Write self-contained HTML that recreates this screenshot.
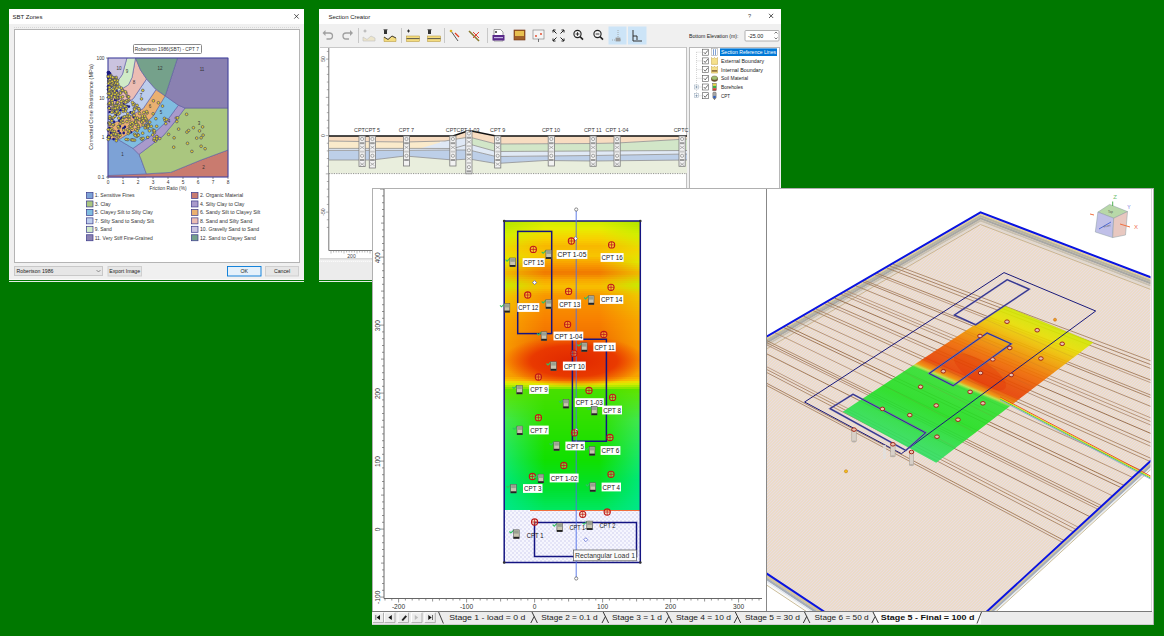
<!DOCTYPE html>
<html><head><meta charset="utf-8"><style>
html,body{margin:0;padding:0;}
body{width:1164px;height:636px;overflow:hidden;background:#007800;font-family:"Liberation Sans",sans-serif;}
svg{position:absolute;left:0;top:0;display:block}
</style></head><body>
<svg width="1164" height="636" viewBox="0 0 1164 636" font-family="Liberation Sans, sans-serif">
<rect x="9" y="9" width="295" height="271" fill="#f0f0f0" stroke="none" stroke-width="1" />
<rect x="9" y="9" width="295" height="15" fill="#ffffff" stroke="none" stroke-width="1" />
<text x="12.5" y="19.3" font-size="6" fill="#222" text-anchor="start" >SBT Zones</text>
<line x1="294.3" y1="14.2" x2="298.7" y2="18.6" stroke="#222" stroke-width="0.75" />
<line x1="298.7" y1="14.2" x2="294.3" y2="18.6" stroke="#222" stroke-width="0.75" />
<rect x="14.5" y="29.5" width="285" height="233" fill="#fff" stroke="#b4b4b4" stroke-width="1" />
<line x1="14" y1="27.5" x2="300" y2="27.5" stroke="#d8d8d8" stroke-width="1" stroke-dasharray="1,1"/>
<rect x="133.5" y="44.5" width="68" height="9" fill="#fff" stroke="#8a8a8a" stroke-width="1" rx="1"/>
<text x="134.8" y="51.3" font-size="5.2" fill="#333" text-anchor="start"  textLength="64" lengthAdjust="spacingAndGlyphs">Robertson 1986(SBT) - CPT 7</text>
<polygon points="108.0,139.0 118.4,139.7 133.0,148.4 139.0,154.4 141.0,159.0 146.4,173.8 146.0,177.0 108.0,177.0" fill="#7da2d6" stroke="#5a5aa0" stroke-width="0.6" />
<polygon points="108.0,177.0 108.0,175.5 146.0,174.0 170.7,172.4 201.0,160.0 228.0,150.0 228.0,177.0" fill="#c97b6f" stroke="#5a5aa0" stroke-width="0.6" />
<polygon points="185.0,108.0 228.0,108.0 228.0,150.0 201.0,160.0 170.7,172.4 146.4,173.8 141.0,159.0 139.0,154.4 163.0,136.0 174.0,122.8" fill="#aac67f" stroke="#5a5aa0" stroke-width="0.6" />
<polygon points="178.4,105.2 185.0,108.0 174.0,122.8 163.0,136.0 139.0,154.4 133.0,148.4 152.0,135.0 166.3,121.7" fill="#a99acb" stroke="#5a5aa0" stroke-width="0.6" />
<polygon points="165.2,95.9 178.4,105.2 166.3,121.7 152.0,135.0 133.0,148.4 118.4,139.7 120.0,139.0 128.0,134.0 141.0,127.2 153.1,116.2 164.1,95.9" fill="#80bde0" stroke="#5a5aa0" stroke-width="0.6" />
<polygon points="155.9,89.8 165.2,95.9 153.1,116.2 141.0,127.2 128.0,134.0 120.0,139.0 108.0,139.0 108.0,125.0 130.0,116.0 143.2,108.5" fill="#eab070" stroke="#5a5aa0" stroke-width="0.6" />
<polygon points="146.5,79.0 155.9,89.8 143.2,108.5 130.0,116.0 108.0,125.0 108.0,113.0 120.0,108.0 133.3,98.6" fill="#bdcdec" stroke="#5a5aa0" stroke-width="0.6" />
<polygon points="135.5,58.0 140.5,70.0 146.5,79.0 133.3,98.6 120.0,108.0 108.0,113.0 108.0,100.0 112.0,95.0 122.4,88.6 128.4,84.9 132.1,77.4" fill="#ecbdb3" stroke="#5a5aa0" stroke-width="0.6" />
<polygon points="126.9,58.0 135.5,58.0 132.1,77.4 128.4,84.9 122.4,88.6 112.0,95.0 108.0,100.0 108.0,89.3 114.9,84.9 122.4,74.4" fill="#d0ebc7" stroke="#5a5aa0" stroke-width="0.6" />
<polygon points="108.0,58.0 126.9,58.0 122.4,74.4 114.9,84.9 108.0,89.3" fill="#cac3df" stroke="#5a5aa0" stroke-width="0.6" />
<polygon points="177.5,58.0 228.0,58.0 228.0,108.0 185.0,108.0 178.4,105.2 165.2,95.9" fill="#8a81b1" stroke="#5a5aa0" stroke-width="0.6" />
<polygon points="135.5,58.0 177.5,58.0 165.2,95.9 155.3,88.7 146.5,78.8 140.5,70.0" fill="#75a18b" stroke="#5a5aa0" stroke-width="0.6" />
<text x="119" y="70" font-size="4.5" fill="#333" text-anchor="middle" >10</text>
<text x="127" y="73" font-size="4.5" fill="#333" text-anchor="middle" >9</text>
<text x="160" y="70" font-size="4.5" fill="#333" text-anchor="middle" >12</text>
<text x="202" y="71" font-size="4.5" fill="#333" text-anchor="middle" >11</text>
<text x="134" y="84" font-size="4.5" fill="#333" text-anchor="middle" >8</text>
<text x="141" y="97" font-size="4.5" fill="#333" text-anchor="middle" >7</text>
<text x="150" y="108" font-size="4.5" fill="#333" text-anchor="middle" >6</text>
<text x="161" y="114" font-size="4.5" fill="#333" text-anchor="middle" >5</text>
<text x="169" y="123" font-size="4.5" fill="#333" text-anchor="middle" >4</text>
<text x="199" y="125" font-size="4.5" fill="#333" text-anchor="middle" >3</text>
<text x="122.5" y="156" font-size="4.5" fill="#333" text-anchor="middle" >1</text>
<text x="203.5" y="168.5" font-size="4.5" fill="#333" text-anchor="middle" >2</text>
<rect x="108" y="58" width="120" height="119" fill="none" stroke="#4040a0" stroke-width="0.8" />
<circle cx="109.1" cy="107.9" r="1.3" fill="#1a1a80"/>
<circle cx="114.8" cy="82.7" r="1.3" fill="#1a1a80"/>
<circle cx="108.2" cy="136.4" r="1.3" fill="#1a1a80"/>
<circle cx="109.7" cy="79.8" r="1.3" fill="#1a1a80"/>
<circle cx="113.7" cy="84.6" r="1.3" fill="#1a1a80"/>
<circle cx="116.8" cy="91.4" r="1.3" fill="#1a1a80"/>
<circle cx="109.8" cy="78.0" r="1.3" fill="#1a1a80"/>
<circle cx="132.6" cy="139.7" r="1.3" fill="#1a1a80"/>
<circle cx="108.1" cy="75.1" r="1.3" fill="#1a1a80"/>
<circle cx="113.7" cy="111.5" r="1.3" fill="#1a1a80"/>
<circle cx="112.2" cy="91.1" r="1.3" fill="#1a1a80"/>
<circle cx="128.9" cy="106.6" r="1.3" fill="#1a1a80"/>
<circle cx="111.3" cy="83.0" r="1.3" fill="#1a1a80"/>
<circle cx="111.5" cy="84.3" r="1.3" fill="#1a1a80"/>
<circle cx="109.4" cy="118.6" r="1.3" fill="#1a1a80"/>
<circle cx="118.3" cy="99.0" r="1.3" fill="#1a1a80"/>
<circle cx="108.9" cy="72.1" r="1.3" fill="#1a1a80"/>
<circle cx="113.3" cy="94.6" r="1.3" fill="#1a1a80"/>
<circle cx="124.5" cy="108.9" r="1.3" fill="#1a1a80"/>
<circle cx="108.8" cy="73.7" r="1.3" fill="#1a1a80"/>
<circle cx="108.4" cy="73.0" r="1.3" fill="#1a1a80"/>
<circle cx="108.0" cy="89.6" r="1.3" fill="#1a1a80"/>
<circle cx="111.0" cy="86.5" r="1.3" fill="#1a1a80"/>
<circle cx="130.6" cy="112.4" r="1.3" fill="#1a1a80"/>
<circle cx="112.9" cy="91.3" r="1.3" fill="#1a1a80"/>
<circle cx="133.6" cy="117.1" r="1.3" fill="#1a1a80"/>
<circle cx="147.7" cy="137.5" r="1.3" fill="#1a1a80"/>
<circle cx="108.7" cy="86.7" r="1.3" fill="#1a1a80"/>
<circle cx="108.9" cy="135.9" r="1.3" fill="#1a1a80"/>
<circle cx="118.1" cy="96.7" r="1.3" fill="#1a1a80"/>
<circle cx="112.7" cy="102.6" r="1.3" fill="#1a1a80"/>
<circle cx="114.4" cy="135.2" r="1.3" fill="#1a1a80"/>
<circle cx="123.6" cy="104.3" r="1.3" fill="#1a1a80"/>
<circle cx="108.9" cy="77.3" r="1.3" fill="#1a1a80"/>
<circle cx="115.7" cy="100.0" r="1.3" fill="#1a1a80"/>
<circle cx="110.0" cy="81.1" r="1.3" fill="#1a1a80"/>
<circle cx="108.1" cy="73.8" r="1.3" fill="#1a1a80"/>
<circle cx="108.6" cy="89.4" r="1.3" fill="#1a1a80"/>
<circle cx="113.6" cy="139.1" r="1.3" fill="#1a1a80"/>
<circle cx="114.3" cy="85.1" r="1.3" fill="#1a1a80"/>
<circle cx="112.0" cy="119.4" r="1.3" fill="#1a1a80"/>
<circle cx="124.9" cy="126.9" r="1.3" fill="#1a1a80"/>
<circle cx="114.7" cy="92.5" r="1.3" fill="#1a1a80"/>
<circle cx="109.1" cy="83.3" r="1.3" fill="#1a1a80"/>
<circle cx="118.6" cy="131.0" r="1.3" fill="#1a1a80"/>
<circle cx="110.8" cy="132.8" r="1.3" fill="#1a1a80"/>
<circle cx="108.1" cy="77.3" r="1.3" fill="#1a1a80"/>
<circle cx="120.4" cy="119.3" r="1.3" fill="#1a1a80"/>
<circle cx="108.0" cy="72.2" r="1.3" fill="#1a1a80"/>
<circle cx="119.8" cy="126.4" r="1.3" fill="#1a1a80"/>
<circle cx="108.3" cy="130.5" r="1.3" fill="#1a1a80"/>
<circle cx="108.9" cy="107.2" r="1.3" fill="#1a1a80"/>
<circle cx="121.7" cy="117.8" r="1.3" fill="#1a1a80"/>
<circle cx="110.4" cy="109.0" r="1.3" fill="#1a1a80"/>
<circle cx="109.5" cy="137.4" r="1.3" fill="#1a1a80"/>
<circle cx="109.3" cy="74.0" r="1.3" fill="#1a1a80"/>
<circle cx="108.1" cy="75.2" r="1.3" fill="#1a1a80"/>
<circle cx="116.6" cy="97.5" r="1.3" fill="#1a1a80"/>
<circle cx="130.9" cy="132.3" r="1.3" fill="#1a1a80"/>
<circle cx="109.3" cy="74.2" r="1.3" fill="#1a1a80"/>
<circle cx="109.5" cy="128.1" r="1.3" fill="#1a1a80"/>
<circle cx="112.0" cy="120.5" r="1.3" fill="#1a1a80"/>
<circle cx="108.0" cy="86.5" r="1.3" fill="#1a1a80"/>
<circle cx="119.3" cy="120.8" r="1.3" fill="#1a1a80"/>
<circle cx="120.0" cy="133.2" r="1.3" fill="#1a1a80"/>
<circle cx="108.5" cy="78.2" r="1.3" fill="#1a1a80"/>
<circle cx="115.9" cy="84.4" r="1.3" fill="#1a1a80"/>
<circle cx="108.2" cy="80.9" r="1.3" fill="#1a1a80"/>
<circle cx="108.3" cy="90.1" r="1.3" fill="#1a1a80"/>
<circle cx="115.4" cy="95.0" r="1.3" fill="#1a1a80"/>
<circle cx="109.8" cy="112.0" r="1.3" fill="#1a1a80"/>
<circle cx="109.5" cy="77.4" r="1.3" fill="#1a1a80"/>
<circle cx="116.1" cy="115.0" r="1.3" fill="#1a1a80"/>
<circle cx="126.8" cy="106.0" r="1.3" fill="#1a1a80"/>
<circle cx="108.6" cy="77.7" r="1.3" fill="#1a1a80"/>
<circle cx="115.1" cy="100.0" r="1.3" fill="#1a1a80"/>
<circle cx="123.7" cy="133.1" r="1.3" fill="#1a1a80"/>
<circle cx="115.0" cy="113.0" r="1.3" fill="#1a1a80"/>
<circle cx="132.3" cy="123.0" r="1.3" fill="#1a1a80"/>
<circle cx="108.3" cy="86.2" r="1.3" fill="#1a1a80"/>
<circle cx="109.8" cy="84.1" r="1.3" fill="#1a1a80"/>
<circle cx="113.1" cy="132.1" r="1.3" fill="#1a1a80"/>
<circle cx="120.4" cy="110.3" r="1.3" fill="#1a1a80"/>
<circle cx="109.6" cy="138.0" r="1.3" fill="#1a1a80"/>
<circle cx="114.1" cy="121.8" r="1.3" fill="#1a1a80"/>
<circle cx="109.7" cy="75.6" r="1.3" fill="#1a1a80"/>
<circle cx="123.5" cy="128.2" r="1.3" fill="#1a1a80"/>
<circle cx="110.0" cy="73.4" r="1.3" fill="#1a1a80"/>
<circle cx="114.8" cy="92.2" r="1.3" fill="#1a1a80"/>
<circle cx="111.8" cy="118.0" r="1.3" fill="#1a1a80"/>
<circle cx="135.7" cy="118.1" r="1.35" fill="#e0d030" stroke="#303070" stroke-width="0.55"/>
<circle cx="145.9" cy="125.3" r="1.35" fill="#e0d030" stroke="#303070" stroke-width="0.55"/>
<circle cx="112.2" cy="77.7" r="1.35" fill="#e0d030" stroke="#303070" stroke-width="0.55"/>
<circle cx="111.3" cy="135.1" r="1.35" fill="#e0d030" stroke="#303070" stroke-width="0.55"/>
<circle cx="112.5" cy="108.4" r="1.35" fill="#e0d030" stroke="#303070" stroke-width="0.55"/>
<circle cx="108.6" cy="76.3" r="1.35" fill="#e0d030" stroke="#303070" stroke-width="0.55"/>
<circle cx="127.3" cy="96.0" r="1.35" fill="#e0d030" stroke="#303070" stroke-width="0.55"/>
<circle cx="111.8" cy="128.8" r="1.35" fill="#e0d030" stroke="#303070" stroke-width="0.55"/>
<circle cx="113.2" cy="117.8" r="1.35" fill="#e0d030" stroke="#303070" stroke-width="0.55"/>
<circle cx="110.8" cy="91.2" r="1.35" fill="#e0d030" stroke="#303070" stroke-width="0.55"/>
<circle cx="154.6" cy="140.0" r="1.35" fill="#e0d030" stroke="#303070" stroke-width="0.55"/>
<circle cx="132.1" cy="112.9" r="1.35" fill="#e0d030" stroke="#303070" stroke-width="0.55"/>
<circle cx="123.2" cy="90.8" r="1.35" fill="#e0d030" stroke="#303070" stroke-width="0.55"/>
<circle cx="117.7" cy="134.7" r="1.35" fill="#e0d030" stroke="#303070" stroke-width="0.55"/>
<circle cx="111.2" cy="101.4" r="1.35" fill="#e0d030" stroke="#303070" stroke-width="0.55"/>
<circle cx="120.6" cy="97.4" r="1.35" fill="#e0d030" stroke="#303070" stroke-width="0.55"/>
<circle cx="110.9" cy="75.4" r="1.35" fill="#e0d030" stroke="#303070" stroke-width="0.55"/>
<circle cx="128.7" cy="130.1" r="1.35" fill="#e0d030" stroke="#303070" stroke-width="0.55"/>
<circle cx="117.6" cy="98.4" r="1.35" fill="#e0d030" stroke="#303070" stroke-width="0.55"/>
<circle cx="108.3" cy="139.5" r="1.35" fill="#e0d030" stroke="#303070" stroke-width="0.55"/>
<circle cx="146.3" cy="125.9" r="1.35" fill="#e0d030" stroke="#303070" stroke-width="0.55"/>
<circle cx="121.6" cy="101.7" r="1.35" fill="#e0d030" stroke="#303070" stroke-width="0.55"/>
<circle cx="109.2" cy="76.0" r="1.35" fill="#e0d030" stroke="#303070" stroke-width="0.55"/>
<circle cx="122.3" cy="90.3" r="1.35" fill="#e0d030" stroke="#303070" stroke-width="0.55"/>
<circle cx="157.0" cy="136.8" r="1.35" fill="#e0d030" stroke="#303070" stroke-width="0.55"/>
<circle cx="133.7" cy="111.9" r="1.35" fill="#e0d030" stroke="#303070" stroke-width="0.55"/>
<circle cx="117.0" cy="83.9" r="1.35" fill="#e0d030" stroke="#303070" stroke-width="0.55"/>
<circle cx="113.2" cy="78.4" r="1.35" fill="#e0d030" stroke="#303070" stroke-width="0.55"/>
<circle cx="109.3" cy="82.6" r="1.35" fill="#e0d030" stroke="#303070" stroke-width="0.55"/>
<circle cx="128.8" cy="100.0" r="1.35" fill="#e0d030" stroke="#303070" stroke-width="0.55"/>
<circle cx="116.4" cy="113.2" r="1.35" fill="#e0d030" stroke="#303070" stroke-width="0.55"/>
<circle cx="109.6" cy="81.7" r="1.35" fill="#e0d030" stroke="#303070" stroke-width="0.55"/>
<circle cx="149.8" cy="122.2" r="1.35" fill="#e0d030" stroke="#303070" stroke-width="0.55"/>
<circle cx="134.6" cy="140.2" r="1.35" fill="#e0d030" stroke="#303070" stroke-width="0.55"/>
<circle cx="111.4" cy="104.3" r="1.35" fill="#e0d030" stroke="#303070" stroke-width="0.55"/>
<circle cx="117.7" cy="107.5" r="1.35" fill="#e0d030" stroke="#303070" stroke-width="0.55"/>
<circle cx="117.1" cy="79.9" r="1.35" fill="#e0d030" stroke="#303070" stroke-width="0.55"/>
<circle cx="112.5" cy="131.3" r="1.35" fill="#e0d030" stroke="#303070" stroke-width="0.55"/>
<circle cx="148.0" cy="124.8" r="1.35" fill="#e0d030" stroke="#303070" stroke-width="0.55"/>
<circle cx="111.1" cy="83.8" r="1.35" fill="#e0d030" stroke="#303070" stroke-width="0.55"/>
<circle cx="119.4" cy="86.9" r="1.35" fill="#e0d030" stroke="#303070" stroke-width="0.55"/>
<circle cx="155.6" cy="141.0" r="1.35" fill="#e0d030" stroke="#303070" stroke-width="0.55"/>
<circle cx="127.8" cy="139.6" r="1.35" fill="#e0d030" stroke="#303070" stroke-width="0.55"/>
<circle cx="115.3" cy="109.0" r="1.35" fill="#e0d030" stroke="#303070" stroke-width="0.55"/>
<circle cx="108.6" cy="104.2" r="1.35" fill="#e0d030" stroke="#303070" stroke-width="0.55"/>
<circle cx="141.3" cy="138.6" r="1.35" fill="#e0d030" stroke="#303070" stroke-width="0.55"/>
<circle cx="117.5" cy="110.3" r="1.35" fill="#e0d030" stroke="#303070" stroke-width="0.55"/>
<circle cx="147.4" cy="127.9" r="1.35" fill="#e0d030" stroke="#303070" stroke-width="0.55"/>
<circle cx="127.4" cy="101.4" r="1.35" fill="#e0d030" stroke="#303070" stroke-width="0.55"/>
<circle cx="135.7" cy="120.7" r="1.35" fill="#e0d030" stroke="#303070" stroke-width="0.55"/>
<circle cx="124.7" cy="101.5" r="1.35" fill="#e0d030" stroke="#303070" stroke-width="0.55"/>
<circle cx="138.4" cy="127.2" r="1.35" fill="#e0d030" stroke="#303070" stroke-width="0.55"/>
<circle cx="127.9" cy="96.9" r="1.35" fill="#e0d030" stroke="#303070" stroke-width="0.55"/>
<circle cx="109.8" cy="76.2" r="1.35" fill="#e0d030" stroke="#303070" stroke-width="0.55"/>
<circle cx="118.5" cy="94.0" r="1.35" fill="#e0d030" stroke="#303070" stroke-width="0.55"/>
<circle cx="138.8" cy="119.6" r="1.35" fill="#e0d030" stroke="#303070" stroke-width="0.55"/>
<circle cx="122.5" cy="100.5" r="1.35" fill="#e0d030" stroke="#303070" stroke-width="0.55"/>
<circle cx="126.5" cy="100.7" r="1.35" fill="#e0d030" stroke="#303070" stroke-width="0.55"/>
<circle cx="142.7" cy="133.2" r="1.35" fill="#e0d030" stroke="#303070" stroke-width="0.55"/>
<circle cx="123.2" cy="111.5" r="1.35" fill="#e0d030" stroke="#303070" stroke-width="0.55"/>
<circle cx="121.4" cy="88.1" r="1.35" fill="#e0d030" stroke="#303070" stroke-width="0.55"/>
<circle cx="135.8" cy="122.3" r="1.35" fill="#e0d030" stroke="#303070" stroke-width="0.55"/>
<circle cx="113.5" cy="124.7" r="1.35" fill="#e0d030" stroke="#303070" stroke-width="0.55"/>
<circle cx="121.1" cy="120.8" r="1.35" fill="#e0d030" stroke="#303070" stroke-width="0.55"/>
<circle cx="135.4" cy="118.2" r="1.35" fill="#e0d030" stroke="#303070" stroke-width="0.55"/>
<circle cx="126.0" cy="106.6" r="1.35" fill="#e0d030" stroke="#303070" stroke-width="0.55"/>
<circle cx="110.4" cy="118.6" r="1.35" fill="#e0d030" stroke="#303070" stroke-width="0.55"/>
<circle cx="113.7" cy="108.6" r="1.35" fill="#e0d030" stroke="#303070" stroke-width="0.55"/>
<circle cx="111.2" cy="98.5" r="1.35" fill="#e0d030" stroke="#303070" stroke-width="0.55"/>
<circle cx="128.4" cy="117.4" r="1.35" fill="#e0d030" stroke="#303070" stroke-width="0.55"/>
<circle cx="126.0" cy="93.1" r="1.35" fill="#e0d030" stroke="#303070" stroke-width="0.55"/>
<circle cx="115.3" cy="95.9" r="1.35" fill="#e0d030" stroke="#303070" stroke-width="0.55"/>
<circle cx="117.7" cy="84.4" r="1.35" fill="#e0d030" stroke="#303070" stroke-width="0.55"/>
<circle cx="110.5" cy="117.5" r="1.35" fill="#e0d030" stroke="#303070" stroke-width="0.55"/>
<circle cx="115.3" cy="113.2" r="1.35" fill="#e0d030" stroke="#303070" stroke-width="0.55"/>
<circle cx="123.7" cy="130.1" r="1.35" fill="#e0d030" stroke="#303070" stroke-width="0.55"/>
<circle cx="135.7" cy="129.8" r="1.35" fill="#e0d030" stroke="#303070" stroke-width="0.55"/>
<circle cx="127.2" cy="116.4" r="1.35" fill="#e0d030" stroke="#303070" stroke-width="0.55"/>
<circle cx="159.7" cy="138.5" r="1.35" fill="#e0d030" stroke="#303070" stroke-width="0.55"/>
<circle cx="113.6" cy="83.9" r="1.35" fill="#e0d030" stroke="#303070" stroke-width="0.55"/>
<circle cx="141.6" cy="118.5" r="1.35" fill="#e0d030" stroke="#303070" stroke-width="0.55"/>
<circle cx="117.7" cy="102.4" r="1.35" fill="#e0d030" stroke="#303070" stroke-width="0.55"/>
<circle cx="126.1" cy="139.4" r="1.35" fill="#e0d030" stroke="#303070" stroke-width="0.55"/>
<circle cx="156.4" cy="138.7" r="1.35" fill="#e0d030" stroke="#303070" stroke-width="0.55"/>
<circle cx="131.5" cy="139.9" r="1.35" fill="#e0d030" stroke="#303070" stroke-width="0.55"/>
<circle cx="116.4" cy="104.9" r="1.35" fill="#e0d030" stroke="#303070" stroke-width="0.55"/>
<circle cx="116.8" cy="96.4" r="1.35" fill="#e0d030" stroke="#303070" stroke-width="0.55"/>
<circle cx="114.4" cy="84.9" r="1.35" fill="#e0d030" stroke="#303070" stroke-width="0.55"/>
<circle cx="145.1" cy="127.9" r="1.35" fill="#e0d030" stroke="#303070" stroke-width="0.55"/>
<circle cx="110.5" cy="76.3" r="1.35" fill="#e0d030" stroke="#303070" stroke-width="0.55"/>
<circle cx="118.9" cy="127.9" r="1.35" fill="#e0d030" stroke="#303070" stroke-width="0.55"/>
<circle cx="111.0" cy="95.2" r="1.35" fill="#e0d030" stroke="#303070" stroke-width="0.55"/>
<circle cx="123.4" cy="117.2" r="1.35" fill="#e0d030" stroke="#303070" stroke-width="0.55"/>
<circle cx="129.6" cy="119.5" r="1.35" fill="#e0d030" stroke="#303070" stroke-width="0.55"/>
<circle cx="118.2" cy="126.6" r="1.35" fill="#e0d030" stroke="#303070" stroke-width="0.55"/>
<circle cx="116.9" cy="112.5" r="1.35" fill="#e0d030" stroke="#303070" stroke-width="0.55"/>
<circle cx="118.2" cy="108.1" r="1.35" fill="#e0d030" stroke="#303070" stroke-width="0.55"/>
<circle cx="132.4" cy="125.6" r="1.35" fill="#e0d030" stroke="#303070" stroke-width="0.55"/>
<circle cx="135.5" cy="107.5" r="1.35" fill="#e0d030" stroke="#303070" stroke-width="0.55"/>
<circle cx="134.5" cy="134.3" r="1.35" fill="#e0d030" stroke="#303070" stroke-width="0.55"/>
<circle cx="123.1" cy="105.7" r="1.35" fill="#e0d030" stroke="#303070" stroke-width="0.55"/>
<circle cx="130.5" cy="123.4" r="1.35" fill="#e0d030" stroke="#303070" stroke-width="0.55"/>
<circle cx="117.0" cy="103.0" r="1.35" fill="#e0d030" stroke="#303070" stroke-width="0.55"/>
<circle cx="114.5" cy="132.1" r="1.35" fill="#e0d030" stroke="#303070" stroke-width="0.55"/>
<circle cx="117.4" cy="80.7" r="1.35" fill="#e0d030" stroke="#303070" stroke-width="0.55"/>
<circle cx="123.0" cy="122.5" r="1.35" fill="#e0d030" stroke="#303070" stroke-width="0.55"/>
<circle cx="114.8" cy="135.7" r="1.35" fill="#e0d030" stroke="#303070" stroke-width="0.55"/>
<circle cx="122.5" cy="109.0" r="1.35" fill="#e0d030" stroke="#303070" stroke-width="0.55"/>
<circle cx="115.7" cy="87.2" r="1.35" fill="#e0d030" stroke="#303070" stroke-width="0.55"/>
<circle cx="110.1" cy="129.7" r="1.35" fill="#e0d030" stroke="#303070" stroke-width="0.55"/>
<circle cx="138.4" cy="128.5" r="1.35" fill="#e0d030" stroke="#303070" stroke-width="0.55"/>
<circle cx="116.2" cy="77.4" r="1.35" fill="#e0d030" stroke="#303070" stroke-width="0.55"/>
<circle cx="108.7" cy="123.0" r="1.35" fill="#e0d030" stroke="#303070" stroke-width="0.55"/>
<circle cx="114.4" cy="131.5" r="1.35" fill="#e0d030" stroke="#303070" stroke-width="0.55"/>
<circle cx="109.9" cy="123.6" r="1.35" fill="#e0d030" stroke="#303070" stroke-width="0.55"/>
<circle cx="128.7" cy="96.8" r="1.35" fill="#e0d030" stroke="#303070" stroke-width="0.55"/>
<circle cx="112.3" cy="104.8" r="1.35" fill="#e0d030" stroke="#303070" stroke-width="0.55"/>
<circle cx="109.7" cy="118.1" r="1.35" fill="#e0d030" stroke="#303070" stroke-width="0.55"/>
<circle cx="108.9" cy="81.2" r="1.35" fill="#e0d030" stroke="#303070" stroke-width="0.55"/>
<circle cx="133.8" cy="115.1" r="1.35" fill="#e0d030" stroke="#303070" stroke-width="0.55"/>
<circle cx="114.9" cy="106.0" r="1.35" fill="#e0d030" stroke="#303070" stroke-width="0.55"/>
<circle cx="124.8" cy="116.7" r="1.35" fill="#e0d030" stroke="#303070" stroke-width="0.55"/>
<circle cx="113.4" cy="79.9" r="1.35" fill="#e0d030" stroke="#303070" stroke-width="0.55"/>
<circle cx="114.1" cy="87.0" r="1.35" fill="#e0d030" stroke="#303070" stroke-width="0.55"/>
<circle cx="127.8" cy="113.8" r="1.35" fill="#e0d030" stroke="#303070" stroke-width="0.55"/>
<circle cx="118.0" cy="94.9" r="1.35" fill="#e0d030" stroke="#303070" stroke-width="0.55"/>
<circle cx="112.7" cy="111.4" r="1.35" fill="#e0d030" stroke="#303070" stroke-width="0.55"/>
<circle cx="113.7" cy="92.9" r="1.35" fill="#e0d030" stroke="#303070" stroke-width="0.55"/>
<circle cx="133.2" cy="123.7" r="1.35" fill="#e0d030" stroke="#303070" stroke-width="0.55"/>
<circle cx="115.0" cy="82.2" r="1.35" fill="#e0d030" stroke="#303070" stroke-width="0.55"/>
<circle cx="114.9" cy="116.3" r="1.35" fill="#e0d030" stroke="#303070" stroke-width="0.55"/>
<circle cx="128.3" cy="133.6" r="1.35" fill="#e0d030" stroke="#303070" stroke-width="0.55"/>
<circle cx="114.5" cy="77.8" r="1.35" fill="#e0d030" stroke="#303070" stroke-width="0.55"/>
<circle cx="110.3" cy="79.7" r="1.35" fill="#e0d030" stroke="#303070" stroke-width="0.55"/>
<circle cx="108.9" cy="92.1" r="1.35" fill="#e0d030" stroke="#303070" stroke-width="0.55"/>
<circle cx="142.1" cy="139.4" r="1.35" fill="#e0d030" stroke="#303070" stroke-width="0.55"/>
<circle cx="118.7" cy="118.2" r="1.35" fill="#e0d030" stroke="#303070" stroke-width="0.55"/>
<circle cx="112.4" cy="92.9" r="1.35" fill="#e0d030" stroke="#303070" stroke-width="0.55"/>
<circle cx="109.9" cy="103.0" r="1.35" fill="#e0d030" stroke="#303070" stroke-width="0.55"/>
<circle cx="137.2" cy="130.9" r="1.35" fill="#e0d030" stroke="#303070" stroke-width="0.55"/>
<circle cx="129.5" cy="132.1" r="1.35" fill="#e0d030" stroke="#303070" stroke-width="0.55"/>
<circle cx="127.0" cy="116.2" r="1.35" fill="#e0d030" stroke="#303070" stroke-width="0.55"/>
<circle cx="109.2" cy="90.7" r="1.35" fill="#e0d030" stroke="#303070" stroke-width="0.55"/>
<circle cx="134.3" cy="108.5" r="1.35" fill="#e0d030" stroke="#303070" stroke-width="0.55"/>
<circle cx="109.2" cy="108.2" r="1.35" fill="#e0d030" stroke="#303070" stroke-width="0.55"/>
<circle cx="108.9" cy="87.3" r="1.35" fill="#e0d030" stroke="#303070" stroke-width="0.55"/>
<circle cx="114.0" cy="133.8" r="1.35" fill="#e0d030" stroke="#303070" stroke-width="0.55"/>
<circle cx="112.7" cy="94.2" r="1.35" fill="#e0d030" stroke="#303070" stroke-width="0.55"/>
<circle cx="116.6" cy="92.9" r="1.35" fill="#e0d030" stroke="#303070" stroke-width="0.55"/>
<circle cx="113.1" cy="78.0" r="1.35" fill="#e0d030" stroke="#303070" stroke-width="0.55"/>
<circle cx="135.7" cy="122.1" r="1.35" fill="#e0d030" stroke="#303070" stroke-width="0.55"/>
<circle cx="138.2" cy="108.6" r="1.35" fill="#e0d030" stroke="#303070" stroke-width="0.55"/>
<circle cx="122.7" cy="96.7" r="1.35" fill="#e0d030" stroke="#303070" stroke-width="0.55"/>
<circle cx="113.0" cy="124.7" r="1.35" fill="#e0d030" stroke="#303070" stroke-width="0.55"/>
<circle cx="109.1" cy="92.6" r="1.35" fill="#e0d030" stroke="#303070" stroke-width="0.55"/>
<circle cx="134.2" cy="104.0" r="1.35" fill="#e0d030" stroke="#303070" stroke-width="0.55"/>
<circle cx="115.5" cy="108.3" r="1.35" fill="#e0d030" stroke="#303070" stroke-width="0.55"/>
<circle cx="137.9" cy="124.9" r="1.35" fill="#e0d030" stroke="#303070" stroke-width="0.55"/>
<circle cx="146.7" cy="121.2" r="1.35" fill="#e0d030" stroke="#303070" stroke-width="0.55"/>
<circle cx="122.6" cy="119.5" r="1.35" fill="#e0d030" stroke="#303070" stroke-width="0.55"/>
<circle cx="114.8" cy="80.3" r="1.35" fill="#e0d030" stroke="#303070" stroke-width="0.55"/>
<circle cx="116.6" cy="111.6" r="1.35" fill="#e0d030" stroke="#303070" stroke-width="0.55"/>
<circle cx="109.4" cy="82.8" r="1.35" fill="#e0d030" stroke="#303070" stroke-width="0.55"/>
<circle cx="108.9" cy="137.2" r="1.35" fill="#e0d030" stroke="#303070" stroke-width="0.55"/>
<circle cx="108.3" cy="93.5" r="1.35" fill="#e0d030" stroke="#303070" stroke-width="0.55"/>
<circle cx="115.0" cy="94.3" r="1.35" fill="#e0d030" stroke="#303070" stroke-width="0.55"/>
<circle cx="111.2" cy="97.7" r="1.35" fill="#e0d030" stroke="#303070" stroke-width="0.55"/>
<circle cx="115.7" cy="89.1" r="1.35" fill="#e0d030" stroke="#303070" stroke-width="0.55"/>
<circle cx="121.7" cy="104.1" r="1.35" fill="#e0d030" stroke="#303070" stroke-width="0.55"/>
<circle cx="114.2" cy="83.9" r="1.35" fill="#e0d030" stroke="#303070" stroke-width="0.55"/>
<circle cx="136.9" cy="136.3" r="1.35" fill="#e0d030" stroke="#303070" stroke-width="0.55"/>
<circle cx="110.5" cy="76.7" r="1.35" fill="#e0d030" stroke="#303070" stroke-width="0.55"/>
<circle cx="123.3" cy="109.5" r="1.35" fill="#e0d030" stroke="#303070" stroke-width="0.55"/>
<circle cx="148.0" cy="124.5" r="1.35" fill="#e0d030" stroke="#303070" stroke-width="0.55"/>
<circle cx="117.1" cy="97.8" r="1.35" fill="#e0d030" stroke="#303070" stroke-width="0.55"/>
<circle cx="110.4" cy="84.5" r="1.35" fill="#e0d030" stroke="#303070" stroke-width="0.55"/>
<circle cx="116.3" cy="82.4" r="1.35" fill="#e0d030" stroke="#303070" stroke-width="0.55"/>
<circle cx="109.3" cy="93.6" r="1.35" fill="#e0d030" stroke="#303070" stroke-width="0.55"/>
<circle cx="109.4" cy="122.9" r="1.35" fill="#e0d030" stroke="#303070" stroke-width="0.55"/>
<circle cx="110.4" cy="102.2" r="1.35" fill="#e0d030" stroke="#303070" stroke-width="0.55"/>
<circle cx="115.1" cy="105.3" r="1.35" fill="#e0d030" stroke="#303070" stroke-width="0.55"/>
<circle cx="137.8" cy="134.8" r="1.35" fill="#e0d030" stroke="#303070" stroke-width="0.55"/>
<circle cx="129.5" cy="126.5" r="1.35" fill="#e0d030" stroke="#303070" stroke-width="0.55"/>
<circle cx="146.7" cy="120.1" r="1.35" fill="#e0d030" stroke="#303070" stroke-width="0.55"/>
<circle cx="136.3" cy="124.6" r="1.35" fill="#e0d030" stroke="#303070" stroke-width="0.55"/>
<circle cx="112.1" cy="102.8" r="1.35" fill="#e0d030" stroke="#303070" stroke-width="0.55"/>
<circle cx="109.0" cy="80.7" r="1.35" fill="#e0d030" stroke="#303070" stroke-width="0.55"/>
<circle cx="110.3" cy="96.4" r="1.35" fill="#e0d030" stroke="#303070" stroke-width="0.55"/>
<circle cx="130.8" cy="126.8" r="1.35" fill="#e0d030" stroke="#303070" stroke-width="0.55"/>
<circle cx="111.9" cy="85.5" r="1.35" fill="#e0d030" stroke="#303070" stroke-width="0.55"/>
<circle cx="154.4" cy="132.6" r="1.35" fill="#e0d030" stroke="#303070" stroke-width="0.55"/>
<circle cx="116.1" cy="105.8" r="1.35" fill="#e0d030" stroke="#303070" stroke-width="0.55"/>
<circle cx="109.7" cy="124.5" r="1.35" fill="#e0d030" stroke="#303070" stroke-width="0.55"/>
<circle cx="111.8" cy="112.3" r="1.35" fill="#e0d030" stroke="#303070" stroke-width="0.55"/>
<circle cx="147.7" cy="137.3" r="1.35" fill="#e0d030" stroke="#303070" stroke-width="0.55"/>
<circle cx="112.1" cy="84.7" r="1.35" fill="#e0d030" stroke="#303070" stroke-width="0.55"/>
<circle cx="118.4" cy="106.1" r="1.35" fill="#e0d030" stroke="#303070" stroke-width="0.55"/>
<circle cx="147.5" cy="127.0" r="1.35" fill="#e0d030" stroke="#303070" stroke-width="0.55"/>
<circle cx="109.9" cy="116.4" r="1.35" fill="#e0d030" stroke="#303070" stroke-width="0.55"/>
<circle cx="127.5" cy="129.9" r="1.35" fill="#e0d030" stroke="#303070" stroke-width="0.55"/>
<circle cx="112.7" cy="78.1" r="1.35" fill="#e0d030" stroke="#303070" stroke-width="0.55"/>
<circle cx="134.7" cy="109.2" r="1.35" fill="#e0d030" stroke="#303070" stroke-width="0.55"/>
<circle cx="111.5" cy="95.8" r="1.35" fill="#e0d030" stroke="#303070" stroke-width="0.55"/>
<circle cx="118.4" cy="114.3" r="1.35" fill="#e0d030" stroke="#303070" stroke-width="0.55"/>
<circle cx="112.0" cy="100.8" r="1.35" fill="#e0d030" stroke="#303070" stroke-width="0.55"/>
<circle cx="154.0" cy="140.0" r="1.35" fill="#e0d030" stroke="#303070" stroke-width="0.55"/>
<circle cx="109.6" cy="104.0" r="1.35" fill="#e0d030" stroke="#303070" stroke-width="0.55"/>
<circle cx="129.3" cy="130.9" r="1.35" fill="#e0d030" stroke="#303070" stroke-width="0.55"/>
<circle cx="115.8" cy="83.2" r="1.35" fill="#e0d030" stroke="#303070" stroke-width="0.55"/>
<circle cx="115.7" cy="135.0" r="1.35" fill="#e0d030" stroke="#303070" stroke-width="0.55"/>
<circle cx="142.0" cy="121.8" r="1.35" fill="#e0d030" stroke="#303070" stroke-width="0.55"/>
<circle cx="137.5" cy="118.1" r="1.35" fill="#e0d030" stroke="#303070" stroke-width="0.55"/>
<circle cx="125.6" cy="111.1" r="1.35" fill="#e0d030" stroke="#303070" stroke-width="0.55"/>
<circle cx="113.1" cy="89.4" r="1.35" fill="#e0d030" stroke="#303070" stroke-width="0.55"/>
<circle cx="115.5" cy="98.1" r="1.35" fill="#e0d030" stroke="#303070" stroke-width="0.55"/>
<circle cx="126.3" cy="108.8" r="1.35" fill="#e0d030" stroke="#303070" stroke-width="0.55"/>
<circle cx="153.2" cy="129.9" r="1.35" fill="#e0d030" stroke="#303070" stroke-width="0.55"/>
<circle cx="132.2" cy="122.4" r="1.35" fill="#e0d030" stroke="#303070" stroke-width="0.55"/>
<circle cx="121.3" cy="101.5" r="1.35" fill="#e0d030" stroke="#303070" stroke-width="0.55"/>
<circle cx="126.9" cy="121.6" r="1.35" fill="#e0d030" stroke="#303070" stroke-width="0.55"/>
<circle cx="111.5" cy="82.4" r="1.35" fill="#e0d030" stroke="#303070" stroke-width="0.55"/>
<circle cx="134.1" cy="115.4" r="1.35" fill="#e0d030" stroke="#303070" stroke-width="0.55"/>
<circle cx="118.4" cy="136.8" r="1.35" fill="#e0d030" stroke="#303070" stroke-width="0.55"/>
<circle cx="109.9" cy="123.9" r="1.35" fill="#e0d030" stroke="#303070" stroke-width="0.55"/>
<circle cx="154.3" cy="138.4" r="1.35" fill="#e0d030" stroke="#303070" stroke-width="0.55"/>
<circle cx="141.7" cy="122.1" r="1.35" fill="#e0d030" stroke="#303070" stroke-width="0.55"/>
<circle cx="114.6" cy="91.1" r="1.35" fill="#e0d030" stroke="#303070" stroke-width="0.55"/>
<circle cx="118.5" cy="134.8" r="1.35" fill="#e0d030" stroke="#303070" stroke-width="0.55"/>
<circle cx="110.2" cy="103.3" r="1.35" fill="#e0d030" stroke="#303070" stroke-width="0.55"/>
<circle cx="135.3" cy="135.6" r="1.35" fill="#e0d030" stroke="#303070" stroke-width="0.55"/>
<circle cx="109.4" cy="103.1" r="1.35" fill="#e0d030" stroke="#303070" stroke-width="0.55"/>
<circle cx="120.1" cy="123.8" r="1.35" fill="#e0d030" stroke="#303070" stroke-width="0.55"/>
<circle cx="115.7" cy="134.2" r="1.35" fill="#e0d030" stroke="#303070" stroke-width="0.55"/>
<circle cx="142.6" cy="118.1" r="1.35" fill="#e0d030" stroke="#303070" stroke-width="0.55"/>
<circle cx="116.9" cy="88.2" r="1.35" fill="#e0d030" stroke="#303070" stroke-width="0.55"/>
<circle cx="112.0" cy="80.5" r="1.35" fill="#e0d030" stroke="#303070" stroke-width="0.55"/>
<circle cx="149.4" cy="130.8" r="1.35" fill="#e0d030" stroke="#303070" stroke-width="0.55"/>
<circle cx="120.4" cy="105.6" r="1.35" fill="#e0d030" stroke="#303070" stroke-width="0.55"/>
<circle cx="120.1" cy="135.3" r="1.35" fill="#e0d030" stroke="#303070" stroke-width="0.55"/>
<circle cx="116.7" cy="139.0" r="1.35" fill="#e0d030" stroke="#303070" stroke-width="0.55"/>
<circle cx="109.7" cy="89.4" r="1.35" fill="#e0d030" stroke="#303070" stroke-width="0.55"/>
<circle cx="129.5" cy="116.3" r="1.35" fill="#e0d030" stroke="#303070" stroke-width="0.55"/>
<circle cx="110.3" cy="80.4" r="1.35" fill="#e0d030" stroke="#303070" stroke-width="0.55"/>
<circle cx="153.4" cy="131.1" r="1.35" fill="#e0d030" stroke="#303070" stroke-width="0.55"/>
<circle cx="146.0" cy="119.5" r="1.35" fill="#e0d030" stroke="#303070" stroke-width="0.55"/>
<circle cx="120.7" cy="92.5" r="1.35" fill="#e0d030" stroke="#303070" stroke-width="0.55"/>
<circle cx="108.6" cy="83.4" r="1.35" fill="#e0d030" stroke="#303070" stroke-width="0.55"/>
<circle cx="109.6" cy="87.4" r="1.35" fill="#e0d030" stroke="#303070" stroke-width="0.55"/>
<circle cx="117.6" cy="83.7" r="1.35" fill="#e0d030" stroke="#303070" stroke-width="0.55"/>
<circle cx="143.1" cy="125.1" r="1.35" fill="#e0d030" stroke="#303070" stroke-width="0.55"/>
<circle cx="156.7" cy="136.5" r="1.35" fill="#e0d030" stroke="#303070" stroke-width="0.55"/>
<circle cx="145.5" cy="118.2" r="1.35" fill="#e0d030" stroke="#303070" stroke-width="0.55"/>
<circle cx="109.7" cy="80.6" r="1.35" fill="#e0d030" stroke="#303070" stroke-width="0.55"/>
<circle cx="117.6" cy="102.3" r="1.35" fill="#e0d030" stroke="#303070" stroke-width="0.55"/>
<circle cx="110.0" cy="82.1" r="1.35" fill="#e0d030" stroke="#303070" stroke-width="0.55"/>
<circle cx="119.7" cy="113.1" r="1.35" fill="#e0d030" stroke="#303070" stroke-width="0.55"/>
<circle cx="125.6" cy="102.3" r="1.35" fill="#e0d030" stroke="#303070" stroke-width="0.55"/>
<circle cx="139.3" cy="110.1" r="1.35" fill="#e0d030" stroke="#303070" stroke-width="0.55"/>
<circle cx="138.4" cy="126.5" r="1.35" fill="#e0d030" stroke="#303070" stroke-width="0.55"/>
<circle cx="108.8" cy="97.1" r="1.35" fill="#e0d030" stroke="#303070" stroke-width="0.55"/>
<circle cx="148.0" cy="125.2" r="1.35" fill="#e0d030" stroke="#303070" stroke-width="0.55"/>
<circle cx="112.5" cy="102.8" r="1.35" fill="#e0d030" stroke="#303070" stroke-width="0.55"/>
<circle cx="132.0" cy="128.3" r="1.35" fill="#e0d030" stroke="#303070" stroke-width="0.55"/>
<circle cx="114.7" cy="97.1" r="1.35" fill="#e0d030" stroke="#303070" stroke-width="0.55"/>
<circle cx="110.0" cy="79.5" r="1.35" fill="#e0d030" stroke="#303070" stroke-width="0.55"/>
<circle cx="120.5" cy="93.1" r="1.35" fill="#e0d030" stroke="#303070" stroke-width="0.55"/>
<circle cx="113.0" cy="83.0" r="1.35" fill="#e0d030" stroke="#303070" stroke-width="0.55"/>
<circle cx="132.9" cy="140.1" r="1.35" fill="#e0d030" stroke="#303070" stroke-width="0.55"/>
<circle cx="112.7" cy="82.7" r="1.35" fill="#e0d030" stroke="#303070" stroke-width="0.55"/>
<circle cx="108.2" cy="129.6" r="1.35" fill="#e0d030" stroke="#303070" stroke-width="0.55"/>
<circle cx="108.3" cy="76.6" r="1.35" fill="#e0d030" stroke="#303070" stroke-width="0.55"/>
<circle cx="117.3" cy="107.7" r="1.35" fill="#e0d030" stroke="#303070" stroke-width="0.55"/>
<circle cx="125.5" cy="91.8" r="1.35" fill="#e0d030" stroke="#303070" stroke-width="0.55"/>
<circle cx="120.8" cy="106.7" r="1.35" fill="#e0d030" stroke="#303070" stroke-width="0.55"/>
<circle cx="143.1" cy="138.3" r="1.35" fill="#e0d030" stroke="#303070" stroke-width="0.55"/>
<circle cx="124.8" cy="106.2" r="1.35" fill="#e0d030" stroke="#303070" stroke-width="0.55"/>
<circle cx="138.5" cy="135.2" r="1.35" fill="#e0d030" stroke="#303070" stroke-width="0.55"/>
<circle cx="112.7" cy="77.3" r="1.35" fill="#e0d030" stroke="#303070" stroke-width="0.55"/>
<circle cx="133.1" cy="104.8" r="1.35" fill="#e0d030" stroke="#303070" stroke-width="0.55"/>
<circle cx="132.5" cy="102.5" r="1.35" fill="#e0d030" stroke="#303070" stroke-width="0.55"/>
<circle cx="148.3" cy="126.3" r="1.35" fill="#e0d030" stroke="#303070" stroke-width="0.55"/>
<circle cx="137.1" cy="105.4" r="1.35" fill="#e0d030" stroke="#303070" stroke-width="0.55"/>
<circle cx="116.3" cy="140.7" r="1.35" fill="#e0d030" stroke="#303070" stroke-width="0.55"/>
<circle cx="115.3" cy="108.4" r="1.35" fill="#e0d030" stroke="#303070" stroke-width="0.55"/>
<circle cx="111.8" cy="120.8" r="1.35" fill="#e0d030" stroke="#303070" stroke-width="0.55"/>
<circle cx="112.1" cy="81.3" r="1.35" fill="#e0d030" stroke="#303070" stroke-width="0.55"/>
<circle cx="152.7" cy="134.9" r="1.35" fill="#e0d030" stroke="#303070" stroke-width="0.55"/>
<circle cx="154.4" cy="130.7" r="1.35" fill="#e0d030" stroke="#303070" stroke-width="0.55"/>
<circle cx="164.4" cy="118.4" r="1.35" fill="#e0d030" stroke="#303070" stroke-width="0.55"/>
<circle cx="139.6" cy="113.5" r="1.35" fill="#e0d030" stroke="#303070" stroke-width="0.55"/>
<circle cx="186.6" cy="114.3" r="1.35" fill="#e0d030" stroke="#303070" stroke-width="0.55"/>
<circle cx="139.5" cy="119.6" r="1.35" fill="#e0d030" stroke="#303070" stroke-width="0.55"/>
<circle cx="156.7" cy="126.3" r="1.35" fill="#e0d030" stroke="#303070" stroke-width="0.55"/>
<circle cx="191.9" cy="151.4" r="1.35" fill="#e0d030" stroke="#303070" stroke-width="0.55"/>
<circle cx="199.5" cy="130.9" r="1.35" fill="#e0d030" stroke="#303070" stroke-width="0.55"/>
<circle cx="165.0" cy="120.4" r="1.35" fill="#e0d030" stroke="#303070" stroke-width="0.55"/>
<circle cx="151.3" cy="126.3" r="1.35" fill="#e0d030" stroke="#303070" stroke-width="0.55"/>
<circle cx="155.9" cy="118.7" r="1.35" fill="#e0d030" stroke="#303070" stroke-width="0.55"/>
<circle cx="142.8" cy="90.4" r="1.35" fill="#e0d030" stroke="#303070" stroke-width="0.55"/>
<circle cx="203.1" cy="135.1" r="1.35" fill="#e0d030" stroke="#303070" stroke-width="0.55"/>
<circle cx="168.6" cy="134.4" r="1.35" fill="#e0d030" stroke="#303070" stroke-width="0.55"/>
<circle cx="143.3" cy="120.7" r="1.35" fill="#e0d030" stroke="#303070" stroke-width="0.55"/>
<circle cx="173.7" cy="147.2" r="1.35" fill="#e0d030" stroke="#303070" stroke-width="0.55"/>
<circle cx="174.1" cy="137.8" r="1.35" fill="#e0d030" stroke="#303070" stroke-width="0.55"/>
<circle cx="166.5" cy="119.6" r="1.35" fill="#e0d030" stroke="#303070" stroke-width="0.55"/>
<circle cx="205.1" cy="148.7" r="1.35" fill="#e0d030" stroke="#303070" stroke-width="0.55"/>
<circle cx="165.8" cy="123.7" r="1.35" fill="#e0d030" stroke="#303070" stroke-width="0.55"/>
<circle cx="201.1" cy="146.2" r="1.35" fill="#e0d030" stroke="#303070" stroke-width="0.55"/>
<circle cx="162.5" cy="106.1" r="1.35" fill="#e0d030" stroke="#303070" stroke-width="0.55"/>
<circle cx="158.4" cy="102.8" r="1.35" fill="#e0d030" stroke="#303070" stroke-width="0.55"/>
<circle cx="193.4" cy="127.7" r="1.35" fill="#e0d030" stroke="#303070" stroke-width="0.55"/>
<circle cx="138.9" cy="108.7" r="1.35" fill="#e0d030" stroke="#303070" stroke-width="0.55"/>
<circle cx="202.6" cy="126.9" r="1.35" fill="#e0d030" stroke="#303070" stroke-width="0.55"/>
<circle cx="201.1" cy="137.8" r="1.35" fill="#e0d030" stroke="#303070" stroke-width="0.55"/>
<circle cx="176.3" cy="118.0" r="1.35" fill="#e0d030" stroke="#303070" stroke-width="0.55"/>
<circle cx="188.6" cy="130.5" r="1.35" fill="#e0d030" stroke="#303070" stroke-width="0.55"/>
<circle cx="153.4" cy="100.8" r="1.35" fill="#e0d030" stroke="#303070" stroke-width="0.55"/>
<circle cx="178.6" cy="129.1" r="1.35" fill="#e0d030" stroke="#303070" stroke-width="0.55"/>
<circle cx="144.7" cy="116.1" r="1.35" fill="#e0d030" stroke="#303070" stroke-width="0.55"/>
<circle cx="187.5" cy="143.3" r="1.35" fill="#e0d030" stroke="#303070" stroke-width="0.55"/>
<circle cx="142.4" cy="115.9" r="1.35" fill="#e0d030" stroke="#303070" stroke-width="0.55"/>
<circle cx="147.1" cy="113.0" r="1.35" fill="#e0d030" stroke="#303070" stroke-width="0.55"/>
<circle cx="141.5" cy="98.9" r="1.35" fill="#e0d030" stroke="#303070" stroke-width="0.55"/>
<circle cx="196.7" cy="138.1" r="1.35" fill="#e0d030" stroke="#303070" stroke-width="0.55"/>
<circle cx="146.7" cy="111.6" r="1.35" fill="#e0d030" stroke="#303070" stroke-width="0.55"/>
<circle cx="176.8" cy="121.5" r="1.35" fill="#e0d030" stroke="#303070" stroke-width="0.55"/>
<circle cx="153.1" cy="113.8" r="1.35" fill="#e0d030" stroke="#303070" stroke-width="0.55"/>
<circle cx="186.9" cy="132.1" r="1.35" fill="#e0d030" stroke="#303070" stroke-width="0.55"/>
<circle cx="143.8" cy="112.4" r="1.35" fill="#e0d030" stroke="#303070" stroke-width="0.55"/>
<circle cx="177.6" cy="117.8" r="1.35" fill="#e0d030" stroke="#303070" stroke-width="0.55"/>
<text x="104.5" y="59.8" font-size="4.8" fill="#333" text-anchor="end" >100</text>
<line x1="106" y1="58.0" x2="108" y2="58.0" stroke="#333" stroke-width="0.5" />
<text x="104.5" y="99.5" font-size="4.8" fill="#333" text-anchor="end" >10</text>
<line x1="106" y1="97.7" x2="108" y2="97.7" stroke="#333" stroke-width="0.5" />
<text x="104.5" y="139.20000000000002" font-size="4.8" fill="#333" text-anchor="end" >1</text>
<line x1="106" y1="137.4" x2="108" y2="137.4" stroke="#333" stroke-width="0.5" />
<text x="104.5" y="178.90000000000003" font-size="4.8" fill="#333" text-anchor="end" >0.1</text>
<line x1="106" y1="177.10000000000002" x2="108" y2="177.10000000000002" stroke="#333" stroke-width="0.5" />
<text x="108" y="184" font-size="4.8" fill="#333" text-anchor="middle" >0</text>
<line x1="108" y1="177" x2="108" y2="179" stroke="#333" stroke-width="0.5" />
<text x="123" y="184" font-size="4.8" fill="#333" text-anchor="middle" >1</text>
<line x1="123" y1="177" x2="123" y2="179" stroke="#333" stroke-width="0.5" />
<text x="138" y="184" font-size="4.8" fill="#333" text-anchor="middle" >2</text>
<line x1="138" y1="177" x2="138" y2="179" stroke="#333" stroke-width="0.5" />
<text x="153" y="184" font-size="4.8" fill="#333" text-anchor="middle" >3</text>
<line x1="153" y1="177" x2="153" y2="179" stroke="#333" stroke-width="0.5" />
<text x="168" y="184" font-size="4.8" fill="#333" text-anchor="middle" >4</text>
<line x1="168" y1="177" x2="168" y2="179" stroke="#333" stroke-width="0.5" />
<text x="183" y="184" font-size="4.8" fill="#333" text-anchor="middle" >5</text>
<line x1="183" y1="177" x2="183" y2="179" stroke="#333" stroke-width="0.5" />
<text x="198" y="184" font-size="4.8" fill="#333" text-anchor="middle" >6</text>
<line x1="198" y1="177" x2="198" y2="179" stroke="#333" stroke-width="0.5" />
<text x="213" y="184" font-size="4.8" fill="#333" text-anchor="middle" >7</text>
<line x1="213" y1="177" x2="213" y2="179" stroke="#333" stroke-width="0.5" />
<text x="228" y="184" font-size="4.8" fill="#333" text-anchor="middle" >8</text>
<line x1="228" y1="177" x2="228" y2="179" stroke="#333" stroke-width="0.5" />
<text x="168" y="189.5" font-size="4.8" fill="#333" text-anchor="middle" >Friction Ratio (%)</text>
<text x="0" y="0" font-size="5.6" fill="#333" text-anchor="middle" transform="translate(92.5,107) rotate(-90)">Corrected Cone Resistance (MPa)</text>
<rect x="86.5" y="192.5" width="6.5" height="6" fill="#7da2d6" stroke="#3a3a8a" stroke-width="0.7" />
<text x="94.7" y="197.4" font-size="5" fill="#333" text-anchor="start"  textLength="39.9" lengthAdjust="spacingAndGlyphs">1. Sensitive Fines</text>
<rect x="86.5" y="200.95" width="6.5" height="6" fill="#aac67f" stroke="#3a3a8a" stroke-width="0.7" />
<text x="94.7" y="205.85" font-size="5" fill="#333" text-anchor="start"  textLength="16" lengthAdjust="spacingAndGlyphs">3. Clay</text>
<rect x="86.5" y="209.4" width="6.5" height="6" fill="#80bde0" stroke="#3a3a8a" stroke-width="0.7" />
<text x="94.7" y="214.3" font-size="5" fill="#333" text-anchor="start"  textLength="58.1" lengthAdjust="spacingAndGlyphs">5. Clayey Silt to Silty Clay</text>
<rect x="86.5" y="217.85" width="6.5" height="6" fill="#bdcdec" stroke="#3a3a8a" stroke-width="0.7" />
<text x="94.7" y="222.75" font-size="5" fill="#333" text-anchor="start"  textLength="59.3" lengthAdjust="spacingAndGlyphs">7. Silty Sand to Sandy Silt</text>
<rect x="86.5" y="226.3" width="6.5" height="6" fill="#d0ebc7" stroke="#3a3a8a" stroke-width="0.7" />
<text x="94.7" y="231.20000000000002" font-size="5" fill="#333" text-anchor="start"  textLength="17.1" lengthAdjust="spacingAndGlyphs">9. Sand</text>
<rect x="86.5" y="234.75" width="6.5" height="6" fill="#8a81b1" stroke="#3a3a8a" stroke-width="0.7" />
<text x="94.7" y="239.65" font-size="5" fill="#333" text-anchor="start"  textLength="58.1" lengthAdjust="spacingAndGlyphs">11. Very Stiff Fine-Grained</text>
<rect x="191.5" y="192.5" width="6.5" height="6" fill="#c97b6f" stroke="#3a3a8a" stroke-width="0.7" />
<text x="200" y="197.4" font-size="5" fill="#333" text-anchor="start"  textLength="43.2" lengthAdjust="spacingAndGlyphs">2. Organic Material</text>
<rect x="191.5" y="200.95" width="6.5" height="6" fill="#a99acb" stroke="#3a3a8a" stroke-width="0.7" />
<text x="200" y="205.85" font-size="5" fill="#333" text-anchor="start"  textLength="44.4" lengthAdjust="spacingAndGlyphs">4. Silty Clay to Clay</text>
<rect x="191.5" y="209.4" width="6.5" height="6" fill="#eab070" stroke="#3a3a8a" stroke-width="0.7" />
<text x="200" y="214.3" font-size="5" fill="#333" text-anchor="start"  textLength="60.3" lengthAdjust="spacingAndGlyphs">6. Sandy Silt to Clayey Silt</text>
<rect x="191.5" y="217.85" width="6.5" height="6" fill="#ecbdb3" stroke="#3a3a8a" stroke-width="0.7" />
<text x="200" y="222.75" font-size="5" fill="#333" text-anchor="start"  textLength="52.4" lengthAdjust="spacingAndGlyphs">8. Sand and Silty Sand</text>
<rect x="191.5" y="226.3" width="6.5" height="6" fill="#cac3df" stroke="#3a3a8a" stroke-width="0.7" />
<text x="200" y="231.20000000000002" font-size="5" fill="#333" text-anchor="start"  textLength="59.2" lengthAdjust="spacingAndGlyphs">10. Gravelly Sand to Sand</text>
<rect x="191.5" y="234.75" width="6.5" height="6" fill="#75a18b" stroke="#3a3a8a" stroke-width="0.7" />
<text x="200" y="239.65" font-size="5" fill="#333" text-anchor="start"  textLength="55.8" lengthAdjust="spacingAndGlyphs">12. Sand to Clayey Sand</text>
<rect x="14.5" y="266.5" width="88" height="9" fill="#e6e6e6" stroke="#c8c8c8" stroke-width="1" />
<text x="16.5" y="273" font-size="5.2" fill="#222" text-anchor="start" >Robertson 1986</text>
<polyline points="96.5,270.0 98.5,272.0 100.5,270.0" fill="none" stroke="#555" stroke-width="0.6" />
<rect x="108" y="266.5" width="33.5" height="9.5" fill="#e6e6e6" stroke="#cfcfcf" stroke-width="1" />
<text x="124.7" y="273.3" font-size="5.2" fill="#222" text-anchor="middle" >Export Image</text>
<rect x="227.5" y="266.5" width="33.5" height="9.5" fill="#e5f1fb" stroke="#0078d7" stroke-width="0.9" />
<text x="244.2" y="273.3" font-size="5.2" fill="#222" text-anchor="middle" >OK</text>
<rect x="265.5" y="266.5" width="33" height="9.5" fill="#e6e6e6" stroke="#cfcfcf" stroke-width="1" />
<text x="282" y="273.3" font-size="5.2" fill="#222" text-anchor="middle" >Cancel</text>
<line x1="9" y1="281.5" x2="304" y2="281.5" stroke="#e4ece4" stroke-width="1" />
<line x1="9" y1="279.5" x2="304" y2="279.5" stroke="#fafafa" stroke-width="1" />
<rect x="319" y="9" width="462" height="271" fill="#f0f0f0" stroke="none" stroke-width="1" />
<line x1="319" y1="281.5" x2="781" y2="281.5" stroke="#e4ece4" stroke-width="1" />
<line x1="319" y1="279.5" x2="781" y2="279.5" stroke="#fafafa" stroke-width="1" />
<rect x="319" y="9" width="462" height="15" fill="#ffffff" stroke="none" stroke-width="1" />
<text x="328.5" y="19.3" font-size="6" fill="#222" text-anchor="start" >Section Creator</text>
<text x="749.6" y="18.3" font-size="5.6" fill="#444" text-anchor="middle" >?</text>
<line x1="769" y1="13.8" x2="773.2" y2="18" stroke="#222" stroke-width="0.75" />
<line x1="773.2" y1="13.8" x2="769" y2="18" stroke="#222" stroke-width="0.75" />
<line x1="358.5" y1="28" x2="358.5" y2="43" stroke="#c8c8c8" stroke-width="1" />
<line x1="401.5" y1="28" x2="401.5" y2="43" stroke="#c8c8c8" stroke-width="1" />
<line x1="444.5" y1="28" x2="444.5" y2="43" stroke="#c8c8c8" stroke-width="1" />
<line x1="487.5" y1="28" x2="487.5" y2="43" stroke="#c8c8c8" stroke-width="1" />
<g transform="translate(327.5,35) scale(1,1)"><path d="M-3,-2 L2,-2 A3,3 0 0 1 2,4 L-1,4" fill="none" stroke="#a0a0a0" stroke-width="1.3"/><path d="M-5,-2 L-2,-5 L-2,1 Z" fill="#a0a0a0"/></g>
<g transform="translate(348,35) scale(-1,1)"><path d="M-3,-2 L2,-2 A3,3 0 0 1 2,4 L-1,4" fill="none" stroke="#a0a0a0" stroke-width="1.3"/><path d="M-5,-2 L-2,-5 L-2,1 Z" fill="#a0a0a0"/></g>
<g opacity="0.45">
<path d="M363.5,31 h3 M365,29.5 v3" stroke="#555" stroke-width="0.9"/>
<polygon points="363,41 363,37 367,39.5 371,36 375,38 375,41" fill="#e8d8a0" stroke="#888" stroke-width="0.6"/></g>
<rect x="384.0" y="30.0" width="3" height="4" fill="#333"/><rect x="383.5" y="29.2" width="4" height="1" fill="#555"/>
<polygon points="384,41.5 384,37 388,39.5 392,36 396,38 396,41.5" fill="#f4dc80" stroke="#b09030" stroke-width="0.5"/><polyline points="384,37 388,39.5 392,36 396,38" fill="none" stroke="#333" stroke-width="0.9"/>
<path d="M407.0,31 h3 M408.5,29.5 v3" stroke="#222" stroke-width="0.9"/>
<rect x="406.5" y="36" width="13" height="5.5" fill="#f4dc80" stroke="#b09030" stroke-width="0.5"/><line x1="406.5" y1="38.6" x2="419.5" y2="38.6" stroke="#444" stroke-width="0.9"/>
<rect x="428.0" y="30.0" width="3" height="4" fill="#333"/><rect x="427.5" y="29.2" width="4" height="1" fill="#555"/>
<rect x="427.5" y="36" width="13" height="5.5" fill="#f4dc80" stroke="#b09030" stroke-width="0.5"/><line x1="427.5" y1="38.6" x2="440.5" y2="38.6" stroke="#444" stroke-width="0.9"/>
<g><line x1="451" y1="31" x2="458" y2="41" stroke="#555" stroke-width="1"/><circle cx="451" cy="31" r="1.3" fill="#d8b020"/><path d="M455,33 L459,37" stroke="#e04020" stroke-width="1.2"/></g>
<g><line x1="469" y1="31" x2="479" y2="41" stroke="#8a7a30" stroke-width="1.6"/><line x1="473" y1="32" x2="479" y2="38" stroke="#e03020" stroke-width="0.9"/><line x1="479" y1="32" x2="473" y2="38" stroke="#e03020" stroke-width="0.9"/></g>
<g><path d="M494,29.5 L500.5,29.5 L503,32 L503,41 L494,41 Z" fill="#fff" stroke="#666" stroke-width="0.6"/><rect x="492.5" y="35" width="12" height="5.5" fill="#5a2a8a"/><rect x="494" y="37" width="9" height="1.2" fill="#c8b8e8"/><circle cx="496" cy="32" r="1" fill="#333"/></g>
<g><rect x="514" y="30" width="11" height="10" fill="#a0602a" stroke="#703010" stroke-width="0.6"/><rect x="515" y="31" width="9" height="5" fill="#e8c050"/></g>
<g><rect x="533" y="30" width="11" height="9" fill="#f4f4f4" stroke="#777" stroke-width="0.6"/><circle cx="536" cy="36" r="0.9" fill="#e04020"/><circle cx="541" cy="34" r="0.9" fill="#e04020"/><line x1="538.5" y1="39" x2="538.5" y2="42" stroke="#555" stroke-width="0.8"/></g>
<g stroke="#222" stroke-width="1" fill="none"><path d="M553,32.5 L553,30 L555.5,30 M553,30 L556.5,33.5 M561.5,30 L564,30 L564,32.5 M564,30 L560.5,33.5 M564,38.5 L564,41 L561.5,41 M564,41 L560.5,37.5 M555.5,41 L553,41 L553,38.5 M553,41 L556.5,37.5"/></g>
<g stroke="#222" stroke-width="1.1" fill="none"><circle cx="577.5" cy="34" r="3.6"/><line x1="580" y1="36.6" x2="583" y2="39.6" stroke-width="1.6"/><path d="M575.7,34 h3.6 M577.5,32.2 v3.6" stroke-width="0.9"/></g>
<g stroke="#222" stroke-width="1.1" fill="none"><circle cx="597.5" cy="34" r="3.6"/><line x1="600" y1="36.6" x2="603" y2="39.6" stroke-width="1.6"/><path d="M595.7,34 h3.6" stroke-width="0.9"/></g>
<rect x="608.5" y="26.5" width="18" height="18" fill="#cce4f7" stroke="none" stroke-width="1" />
<rect x="628" y="26.5" width="18.5" height="18" fill="#cce4f7" stroke="none" stroke-width="1" />
<g stroke="#999" stroke-width="0.8" fill="none"><line x1="618" y1="30" x2="618" y2="40" stroke-dasharray="1,1"/><line x1="612" y1="40" x2="622" y2="40" stroke-dasharray="1,1"/><rect x="616" y="38" width="4" height="3" fill="#999"/></g>
<g stroke="#333" stroke-width="1" fill="none"><path d="M633,30 L633,41 L642,41"/><path d="M633,36 L637,36 L637,40"/></g>
<text x="689" y="37.5" font-size="6" fill="#222" text-anchor="start"  textLength="49.5" lengthAdjust="spacingAndGlyphs">Bottom Elevation (m):</text>
<rect x="745" y="30.5" width="34" height="10.5" fill="#fff" stroke="#b0b0b0" stroke-width="1" rx="1"/>
<text x="748" y="37.7" font-size="5.4" fill="#222" text-anchor="start" >-25.00</text>
<path d="M774.5,33.5 L776,32 L777.5,33.5 M774.5,37.5 L776,39 L777.5,37.5" stroke="#444" stroke-width="0.7" fill="none"/>
<rect x="320" y="47" width="367" height="212" fill="#fff" stroke="none" stroke-width="1" />
<line x1="320" y1="47.5" x2="687" y2="47.5" stroke="#c8c8c8" stroke-width="1" />
<line x1="686.5" y1="47" x2="686.5" y2="259" stroke="#c0c0c0" stroke-width="1" />
<line x1="319" y1="261.5" x2="372" y2="261.5" stroke="#fafafa" stroke-width="1" stroke-dasharray="1,1"/>
<rect x="319" y="262" width="53" height="18" fill="#ececec" stroke="none" stroke-width="1" />
<line x1="320" y1="258.8" x2="372" y2="258.8" stroke="#c8c8c8" stroke-width="1" />
<line x1="328.8" y1="48" x2="328.8" y2="250.5" stroke="#777" stroke-width="1" />
<line x1="328.8" y1="250.5" x2="372" y2="250.5" stroke="#777" stroke-width="1" />
<line x1="326.8" y1="227.4" x2="328.8" y2="227.4" stroke="#777" stroke-width="0.6" />
<line x1="326.8" y1="219.75" x2="328.8" y2="219.75" stroke="#777" stroke-width="0.6" />
<line x1="325.8" y1="212.1" x2="328.8" y2="212.1" stroke="#777" stroke-width="0.6" />
<line x1="326.8" y1="204.45" x2="328.8" y2="204.45" stroke="#777" stroke-width="0.6" />
<line x1="326.8" y1="196.8" x2="328.8" y2="196.8" stroke="#777" stroke-width="0.6" />
<line x1="326.8" y1="189.15" x2="328.8" y2="189.15" stroke="#777" stroke-width="0.6" />
<line x1="326.8" y1="181.5" x2="328.8" y2="181.5" stroke="#777" stroke-width="0.6" />
<line x1="325.8" y1="173.85" x2="328.8" y2="173.85" stroke="#777" stroke-width="0.6" />
<line x1="326.8" y1="166.2" x2="328.8" y2="166.2" stroke="#777" stroke-width="0.6" />
<line x1="326.8" y1="158.55" x2="328.8" y2="158.55" stroke="#777" stroke-width="0.6" />
<line x1="326.8" y1="150.9" x2="328.8" y2="150.9" stroke="#777" stroke-width="0.6" />
<line x1="326.8" y1="143.25" x2="328.8" y2="143.25" stroke="#777" stroke-width="0.6" />
<line x1="325.8" y1="135.6" x2="328.8" y2="135.6" stroke="#777" stroke-width="0.6" />
<line x1="326.8" y1="127.94999999999999" x2="328.8" y2="127.94999999999999" stroke="#777" stroke-width="0.6" />
<line x1="326.8" y1="120.3" x2="328.8" y2="120.3" stroke="#777" stroke-width="0.6" />
<line x1="326.8" y1="112.64999999999999" x2="328.8" y2="112.64999999999999" stroke="#777" stroke-width="0.6" />
<line x1="326.8" y1="105.0" x2="328.8" y2="105.0" stroke="#777" stroke-width="0.6" />
<line x1="325.8" y1="97.35" x2="328.8" y2="97.35" stroke="#777" stroke-width="0.6" />
<line x1="326.8" y1="89.69999999999999" x2="328.8" y2="89.69999999999999" stroke="#777" stroke-width="0.6" />
<line x1="326.8" y1="82.04999999999998" x2="328.8" y2="82.04999999999998" stroke="#777" stroke-width="0.6" />
<line x1="326.8" y1="74.39999999999999" x2="328.8" y2="74.39999999999999" stroke="#777" stroke-width="0.6" />
<line x1="326.8" y1="66.74999999999999" x2="328.8" y2="66.74999999999999" stroke="#777" stroke-width="0.6" />
<line x1="325.8" y1="59.099999999999994" x2="328.8" y2="59.099999999999994" stroke="#777" stroke-width="0.6" />
<line x1="326.8" y1="51.44999999999999" x2="328.8" y2="51.44999999999999" stroke="#777" stroke-width="0.6" />
<text x="0" y="0" font-size="5.2" fill="#444" text-anchor="middle" transform="translate(324.5,58.9) rotate(-90)">50</text>
<text x="0" y="0" font-size="5.2" fill="#444" text-anchor="middle" transform="translate(324.5,135.6) rotate(-90)">0</text>
<text x="0" y="0" font-size="5.2" fill="#444" text-anchor="middle" transform="translate(324.5,212.1) rotate(-90)">-50</text>
<line x1="331.0" y1="250.5" x2="331.0" y2="253.5" stroke="#777" stroke-width="0.5" />
<line x1="333.6" y1="250.5" x2="333.6" y2="252.5" stroke="#777" stroke-width="0.5" />
<line x1="336.2" y1="250.5" x2="336.2" y2="252.5" stroke="#777" stroke-width="0.5" />
<line x1="338.8" y1="250.5" x2="338.8" y2="252.5" stroke="#777" stroke-width="0.5" />
<line x1="341.4" y1="250.5" x2="341.4" y2="252.5" stroke="#777" stroke-width="0.5" />
<line x1="344.0" y1="250.5" x2="344.0" y2="253.5" stroke="#777" stroke-width="0.5" />
<line x1="346.6" y1="250.5" x2="346.6" y2="252.5" stroke="#777" stroke-width="0.5" />
<line x1="349.2" y1="250.5" x2="349.2" y2="252.5" stroke="#777" stroke-width="0.5" />
<line x1="351.8" y1="250.5" x2="351.8" y2="252.5" stroke="#777" stroke-width="0.5" />
<line x1="354.4" y1="250.5" x2="354.4" y2="252.5" stroke="#777" stroke-width="0.5" />
<line x1="357.0" y1="250.5" x2="357.0" y2="253.5" stroke="#777" stroke-width="0.5" />
<line x1="359.6" y1="250.5" x2="359.6" y2="252.5" stroke="#777" stroke-width="0.5" />
<line x1="362.2" y1="250.5" x2="362.2" y2="252.5" stroke="#777" stroke-width="0.5" />
<line x1="364.8" y1="250.5" x2="364.8" y2="252.5" stroke="#777" stroke-width="0.5" />
<line x1="367.4" y1="250.5" x2="367.4" y2="252.5" stroke="#777" stroke-width="0.5" />
<line x1="370.0" y1="250.5" x2="370.0" y2="253.5" stroke="#777" stroke-width="0.5" />
<line x1="372.6" y1="250.5" x2="372.6" y2="252.5" stroke="#777" stroke-width="0.5" />
<line x1="375.2" y1="250.5" x2="375.2" y2="252.5" stroke="#777" stroke-width="0.5" />
<text x="351.5" y="258" font-size="5" fill="#444" text-anchor="middle" >200</text>
<polygon points="329.0,160.0 372.0,160.0 405.0,156.0 453.0,160.0 469.0,159.0 496.0,163.5 545.0,160.5 593.0,161.0 687.0,160.0 687.0,173.6 593.0,173.6 545.0,173.6 496.0,173.6 469.0,173.6 453.0,173.6 405.0,173.6 372.0,173.6 329.0,173.6" fill="#e9eedd" stroke="none" stroke-width="1" />
<polygon points="329.0,150.4 372.0,150.4 405.0,150.4 453.0,150.0 469.0,150.0 496.0,156.5 545.0,156.0 593.0,155.5 687.0,154.0 687.0,160.0 593.0,161.0 545.0,160.5 496.0,163.5 469.0,159.0 453.0,160.0 405.0,156.0 372.0,160.0 329.0,160.0" fill="#bdcfe8" stroke="none" stroke-width="1" />
<polygon points="329.0,148.4 405.0,148.4 420.0,148.4 453.0,148.5 469.0,144.0 496.0,151.5 593.0,151.0 687.0,150.5 687.0,154.0 593.0,155.5 496.0,156.5 469.0,150.0 453.0,150.0 420.0,150.3 405.0,150.4 329.0,150.4" fill="#e0e9f5" stroke="none" stroke-width="1" />
<polygon points="329.0,141.0 360.0,141.5 405.0,142.0 420.0,141.6 440.0,141.1 440.0,148.5 420.0,148.4 405.0,148.4 360.0,148.4 329.0,148.4" fill="#faeacb" stroke="none" stroke-width="1" />
<polygon points="460.0,138.5 469.0,137.0 496.0,144.0 593.0,143.5 617.0,143.0 687.0,139.0 687.0,150.5 617.0,150.9 593.0,151.0 496.0,151.5 469.0,144.0 460.0,146.5" fill="#d2e6c8" stroke="none" stroke-width="1" />
<polygon points="420.0,148.4 445.0,141.0 460.0,139.0 469.0,137.5 469.0,144.0 453.0,148.5" fill="#dfe8f5" stroke="none" stroke-width="1" />
<polygon points="329.0,136.0 360.0,136.0 405.0,136.0 445.0,136.0 453.0,136.0 469.0,130.5 496.0,136.0 593.0,136.0 617.0,136.0 687.0,136.0 687.0,139.0 617.0,143.0 593.0,143.5 496.0,144.0 469.0,137.0 453.0,139.7 445.0,141.0 405.0,142.0 360.0,141.5 329.0,141.0" fill="#f7dcc1" stroke="none" stroke-width="1" />
<polyline points="329.0,141.0 360.0,141.5 405.0,142.0 445.0,141.0 469.0,137.0 496.0,144.0 593.0,143.5 617.0,143.0 687.0,139.0" fill="none" stroke="#8f8f8f" stroke-width="0.8" />
<polyline points="329.0,148.4 420.0,148.4 453.0,148.5 469.0,144.0 496.0,151.5 593.0,151.0 687.0,150.5" fill="none" stroke="#8f8f8f" stroke-width="0.8" />
<polyline points="329.0,150.4 405.0,150.4 453.0,150.0 469.0,150.0 496.0,156.5 593.0,155.5 687.0,154.0" fill="none" stroke="#8f8f8f" stroke-width="0.8" />
<polyline points="329.0,160.0 372.0,160.0 405.0,156.0 453.0,160.0 469.0,159.0 496.0,163.5 545.0,160.5 593.0,161.0 687.0,160.0" fill="none" stroke="#8f8f8f" stroke-width="0.8" />
<polyline points="329.0,173.6 687.0,173.6" fill="none" stroke="#7a7a7a" stroke-width="0.8" stroke-dasharray="1.2,1.2"/>
<polyline points="329.0,136.0 453.0,136.0 469.0,130.5 496.0,136.0 687.0,136.0" fill="none" stroke="#111" stroke-width="1.6" />
<rect x="359" y="136.0" width="6.199999999999989" height="30.400000000000006" fill="#f2f2f2" stroke="#7a7a7a" stroke-width="0.8" />
<circle cx="362.1" cy="139.0" r="1.6" fill="none" stroke="#777" stroke-width="0.6"/>
<rect x="359.8" y="142.2" width="4.599999999999989" height="2" fill="#9a9a9a" stroke="none" stroke-width="1" />
<path d="M360.0,145.9 L364.2,148.9 M364.2,145.9 L360.0,148.9" stroke="#888" stroke-width="0.6"/>
<rect x="359.8" y="150.59999999999997" width="4.599999999999989" height="2" fill="#c8c8c8" stroke="none" stroke-width="1" />
<circle cx="362.1" cy="155.8" r="1.6" fill="none" stroke="#777" stroke-width="0.6"/>
<rect x="359.8" y="158.99999999999994" width="4.599999999999989" height="2" fill="#9a9a9a" stroke="none" stroke-width="1" />
<path d="M360.0,162.7 L364.2,165.7 M364.2,162.7 L360.0,165.7" stroke="#888" stroke-width="0.6"/>
<rect x="369.3" y="136.0" width="6.199999999999989" height="32.0" fill="#f2f2f2" stroke="#7a7a7a" stroke-width="0.8" />
<circle cx="372.4" cy="139.0" r="1.6" fill="none" stroke="#777" stroke-width="0.6"/>
<rect x="370.1" y="142.2" width="4.599999999999989" height="2" fill="#9a9a9a" stroke="none" stroke-width="1" />
<path d="M370.3,145.9 L374.5,148.9 M374.5,145.9 L370.3,148.9" stroke="#888" stroke-width="0.6"/>
<rect x="370.1" y="150.59999999999997" width="4.599999999999989" height="2" fill="#c8c8c8" stroke="none" stroke-width="1" />
<circle cx="372.4" cy="155.8" r="1.6" fill="none" stroke="#777" stroke-width="0.6"/>
<rect x="370.1" y="158.99999999999994" width="4.599999999999989" height="2" fill="#9a9a9a" stroke="none" stroke-width="1" />
<path d="M370.3,162.7 L374.5,165.7 M374.5,162.7 L370.3,165.7" stroke="#888" stroke-width="0.6"/>
<rect x="403.4" y="136.0" width="6.199999999999989" height="30.0" fill="#f2f2f2" stroke="#7a7a7a" stroke-width="0.8" />
<circle cx="406.5" cy="139.0" r="1.6" fill="none" stroke="#777" stroke-width="0.6"/>
<rect x="404.2" y="142.2" width="4.599999999999989" height="2" fill="#9a9a9a" stroke="none" stroke-width="1" />
<path d="M404.4,145.9 L408.6,148.9 M408.6,145.9 L404.4,148.9" stroke="#888" stroke-width="0.6"/>
<rect x="404.2" y="150.59999999999997" width="4.599999999999989" height="2" fill="#c8c8c8" stroke="none" stroke-width="1" />
<circle cx="406.5" cy="155.8" r="1.6" fill="none" stroke="#777" stroke-width="0.6"/>
<rect x="404.2" y="158.99999999999994" width="4.599999999999989" height="2" fill="#9a9a9a" stroke="none" stroke-width="1" />
<rect x="449.8" y="136.0" width="6.199999999999989" height="30.0" fill="#f2f2f2" stroke="#7a7a7a" stroke-width="0.8" />
<circle cx="452.9" cy="139.0" r="1.6" fill="none" stroke="#777" stroke-width="0.6"/>
<rect x="450.6" y="142.2" width="4.599999999999989" height="2" fill="#9a9a9a" stroke="none" stroke-width="1" />
<path d="M450.8,145.9 L455.0,148.9 M455.0,145.9 L450.8,148.9" stroke="#888" stroke-width="0.6"/>
<rect x="450.6" y="150.59999999999997" width="4.599999999999989" height="2" fill="#c8c8c8" stroke="none" stroke-width="1" />
<circle cx="452.9" cy="155.8" r="1.6" fill="none" stroke="#777" stroke-width="0.6"/>
<rect x="450.6" y="158.99999999999994" width="4.599999999999989" height="2" fill="#9a9a9a" stroke="none" stroke-width="1" />
<rect x="465.8" y="130.534375" width="6.199999999999989" height="43.265625" fill="#f2f2f2" stroke="#7a7a7a" stroke-width="0.8" />
<circle cx="468.9" cy="133.5" r="1.6" fill="none" stroke="#777" stroke-width="0.6"/>
<rect x="466.6" y="136.734375" width="4.599999999999989" height="2" fill="#9a9a9a" stroke="none" stroke-width="1" />
<path d="M466.8,140.4 L471.0,143.4 M471.0,140.4 L466.8,143.4" stroke="#888" stroke-width="0.6"/>
<rect x="466.6" y="145.13437499999998" width="4.599999999999989" height="2" fill="#c8c8c8" stroke="none" stroke-width="1" />
<circle cx="468.9" cy="150.3" r="1.6" fill="none" stroke="#777" stroke-width="0.6"/>
<rect x="466.6" y="153.53437499999995" width="4.599999999999989" height="2" fill="#9a9a9a" stroke="none" stroke-width="1" />
<path d="M466.8,157.2 L471.0,160.2 M471.0,157.2 L466.8,160.2" stroke="#888" stroke-width="0.6"/>
<rect x="466.6" y="161.93437499999993" width="4.599999999999989" height="2" fill="#c8c8c8" stroke="none" stroke-width="1" />
<circle cx="468.9" cy="167.1" r="1.6" fill="none" stroke="#777" stroke-width="0.6"/>
<rect x="466.6" y="170.3343749999999" width="4.599999999999989" height="2" fill="#9a9a9a" stroke="none" stroke-width="1" />
<rect x="494.6" y="136.0" width="6.199999999999989" height="32.0" fill="#f2f2f2" stroke="#7a7a7a" stroke-width="0.8" />
<circle cx="497.7" cy="139.0" r="1.6" fill="none" stroke="#777" stroke-width="0.6"/>
<rect x="495.40000000000003" y="142.2" width="4.599999999999989" height="2" fill="#9a9a9a" stroke="none" stroke-width="1" />
<path d="M495.6,145.9 L499.8,148.9 M499.8,145.9 L495.6,148.9" stroke="#888" stroke-width="0.6"/>
<rect x="495.40000000000003" y="150.59999999999997" width="4.599999999999989" height="2" fill="#c8c8c8" stroke="none" stroke-width="1" />
<circle cx="497.7" cy="155.8" r="1.6" fill="none" stroke="#777" stroke-width="0.6"/>
<rect x="495.40000000000003" y="158.99999999999994" width="4.599999999999989" height="2" fill="#9a9a9a" stroke="none" stroke-width="1" />
<path d="M495.6,162.7 L499.8,165.7 M499.8,162.7 L495.6,165.7" stroke="#888" stroke-width="0.6"/>
<rect x="548.2" y="136.0" width="6.2000000000000455" height="30.0" fill="#f2f2f2" stroke="#7a7a7a" stroke-width="0.8" />
<circle cx="551.3" cy="139.0" r="1.6" fill="none" stroke="#777" stroke-width="0.6"/>
<rect x="549.0" y="142.2" width="4.600000000000046" height="2" fill="#9a9a9a" stroke="none" stroke-width="1" />
<path d="M549.2,145.9 L553.4,148.9 M553.4,145.9 L549.2,148.9" stroke="#888" stroke-width="0.6"/>
<rect x="549.0" y="150.59999999999997" width="4.600000000000046" height="2" fill="#c8c8c8" stroke="none" stroke-width="1" />
<circle cx="551.3" cy="155.8" r="1.6" fill="none" stroke="#777" stroke-width="0.6"/>
<rect x="549.0" y="158.99999999999994" width="4.600000000000046" height="2" fill="#9a9a9a" stroke="none" stroke-width="1" />
<rect x="590" y="136.0" width="6.2000000000000455" height="30.30000000000001" fill="#f2f2f2" stroke="#7a7a7a" stroke-width="0.8" />
<circle cx="593.1" cy="139.0" r="1.6" fill="none" stroke="#777" stroke-width="0.6"/>
<rect x="590.8" y="142.2" width="4.600000000000046" height="2" fill="#9a9a9a" stroke="none" stroke-width="1" />
<path d="M591.0,145.9 L595.2,148.9 M595.2,145.9 L591.0,148.9" stroke="#888" stroke-width="0.6"/>
<rect x="590.8" y="150.59999999999997" width="4.600000000000046" height="2" fill="#c8c8c8" stroke="none" stroke-width="1" />
<circle cx="593.1" cy="155.8" r="1.6" fill="none" stroke="#777" stroke-width="0.6"/>
<rect x="590.8" y="158.99999999999994" width="4.600000000000046" height="2" fill="#9a9a9a" stroke="none" stroke-width="1" />
<path d="M591.0,162.7 L595.2,165.7 M595.2,162.7 L591.0,165.7" stroke="#888" stroke-width="0.6"/>
<rect x="614" y="136.0" width="6.2000000000000455" height="30.30000000000001" fill="#f2f2f2" stroke="#7a7a7a" stroke-width="0.8" />
<circle cx="617.1" cy="139.0" r="1.6" fill="none" stroke="#777" stroke-width="0.6"/>
<rect x="614.8" y="142.2" width="4.600000000000046" height="2" fill="#9a9a9a" stroke="none" stroke-width="1" />
<path d="M615.0,145.9 L619.2,148.9 M619.2,145.9 L615.0,148.9" stroke="#888" stroke-width="0.6"/>
<rect x="614.8" y="150.59999999999997" width="4.600000000000046" height="2" fill="#c8c8c8" stroke="none" stroke-width="1" />
<circle cx="617.1" cy="155.8" r="1.6" fill="none" stroke="#777" stroke-width="0.6"/>
<rect x="614.8" y="158.99999999999994" width="4.600000000000046" height="2" fill="#9a9a9a" stroke="none" stroke-width="1" />
<path d="M615.0,162.7 L619.2,165.7 M619.2,162.7 L615.0,165.7" stroke="#888" stroke-width="0.6"/>
<rect x="679" y="136.0" width="6.2000000000000455" height="30.30000000000001" fill="#f2f2f2" stroke="#7a7a7a" stroke-width="0.8" />
<circle cx="682.1" cy="139.0" r="1.6" fill="none" stroke="#777" stroke-width="0.6"/>
<rect x="679.8" y="142.2" width="4.600000000000046" height="2" fill="#9a9a9a" stroke="none" stroke-width="1" />
<path d="M680.0,145.9 L684.2,148.9 M684.2,145.9 L680.0,148.9" stroke="#888" stroke-width="0.6"/>
<rect x="679.8" y="150.59999999999997" width="4.600000000000046" height="2" fill="#c8c8c8" stroke="none" stroke-width="1" />
<circle cx="682.1" cy="155.8" r="1.6" fill="none" stroke="#777" stroke-width="0.6"/>
<rect x="679.8" y="158.99999999999994" width="4.600000000000046" height="2" fill="#9a9a9a" stroke="none" stroke-width="1" />
<path d="M680.0,162.7 L684.2,165.7 M684.2,162.7 L680.0,165.7" stroke="#888" stroke-width="0.6"/>
<text x="367" y="131.5" font-size="5.4" fill="#333" text-anchor="middle" >CPTCPT 5</text>
<text x="406.4" y="131.5" font-size="5.4" fill="#333" text-anchor="middle" >CPT 7</text>
<text x="462.7" y="131.5" font-size="5.4" fill="#333" text-anchor="middle" >CPTCPT 1-03</text>
<text x="497.7" y="131.5" font-size="5.4" fill="#333" text-anchor="middle" >CPT 9</text>
<text x="551" y="131.5" font-size="5.4" fill="#333" text-anchor="middle" >CPT 10</text>
<text x="592.8" y="131.5" font-size="5.4" fill="#333" text-anchor="middle" >CPT 11</text>
<text x="617" y="131.5" font-size="5.4" fill="#333" text-anchor="middle" >CPT 1-04</text>
<text x="681" y="131.5" font-size="5.4" fill="#333" text-anchor="middle" >CPTC</text>
<rect x="689.5" y="47.5" width="90" height="145" fill="#fff" stroke="#b8b8b8" stroke-width="1" />
<line x1="696.5" y1="52" x2="696.5" y2="95.5" stroke="#bbb" stroke-width="0.6" stroke-dasharray="1,1"/>
<line x1="696.5" y1="52.2" x2="702" y2="52.2" stroke="#bbb" stroke-width="0.6" stroke-dasharray="1,1"/>
<rect x="702.5" y="49.2" width="6" height="6" fill="#fff" stroke="#555" stroke-width="0.6" />
<polyline points="703.8,52.2 705.2,53.8 707.8,50.4" fill="none" stroke="#333" stroke-width="0.7" />
<rect x="711.5" y="48.7" width="6" height="7" fill="#fff" stroke="#999" stroke-width="0.5" />
<line x1="713.5" y1="49.2" x2="713.5" y2="55.2" stroke="#4a78c0" stroke-width="0.7" />
<line x1="715.5" y1="49.2" x2="715.5" y2="55.2" stroke="#4a78c0" stroke-width="0.7" />
<rect x="720" y="48.400000000000006" width="57" height="7.6" fill="#0078d7" stroke="none" stroke-width="1" />
<text x="721" y="54.300000000000004" font-size="6" fill="#fff" text-anchor="start"  textLength="55" lengthAdjust="spacingAndGlyphs">Section Reference Lines</text>
<line x1="696.5" y1="60.900000000000006" x2="702" y2="60.900000000000006" stroke="#bbb" stroke-width="0.6" stroke-dasharray="1,1"/>
<rect x="702.5" y="57.900000000000006" width="6" height="6" fill="#fff" stroke="#555" stroke-width="0.6" />
<polyline points="703.8,60.9 705.2,62.5 707.8,59.1" fill="none" stroke="#333" stroke-width="0.7" />
<polygon points="711.5,57.4 713.0,58.9 714.5,57.4 716.0,58.9 717.5,57.4 717.5,64.4 711.5,64.4" fill="#f5e08a" stroke="#c0a040" stroke-width="0.5" />
<text x="721" y="63.00000000000001" font-size="6" fill="#222" text-anchor="start"  textLength="43" lengthAdjust="spacingAndGlyphs">External Boundary</text>
<line x1="696.5" y1="69.6" x2="702" y2="69.6" stroke="#bbb" stroke-width="0.6" stroke-dasharray="1,1"/>
<rect x="702.5" y="66.6" width="6" height="6" fill="#fff" stroke="#555" stroke-width="0.6" />
<polyline points="703.8,69.6 705.2,71.2 707.8,67.8" fill="none" stroke="#333" stroke-width="0.7" />
<polygon points="711.5,66.1 713.0,67.6 714.5,66.1 716.0,67.6 717.5,66.1 717.5,73.1 711.5,73.1" fill="#f5e08a" stroke="#c0a040" stroke-width="0.5" />
<rect x="711.8" y="70.1" width="5.4" height="1.6" fill="#8a6a3a" stroke="none" stroke-width="1" />
<text x="721" y="71.69999999999999" font-size="6" fill="#222" text-anchor="start"  textLength="42" lengthAdjust="spacingAndGlyphs">Internal Boundary</text>
<line x1="696.5" y1="78.3" x2="702" y2="78.3" stroke="#bbb" stroke-width="0.6" stroke-dasharray="1,1"/>
<rect x="702.5" y="75.3" width="6" height="6" fill="#fff" stroke="#555" stroke-width="0.6" />
<polyline points="703.8,78.3 705.2,79.9 707.8,76.5" fill="none" stroke="#333" stroke-width="0.7" />
<ellipse cx="714.5" cy="79.1" rx="3.4" ry="2.6" fill="#6a5030"/><ellipse cx="714.5" cy="77.89999999999999" rx="3" ry="2" fill="#a0c070" stroke="#6a5030" stroke-width="0.4"/>
<text x="721" y="80.39999999999999" font-size="6" fill="#222" text-anchor="start"  textLength="27" lengthAdjust="spacingAndGlyphs">Soil Material</text>
<line x1="696.5" y1="87.0" x2="702" y2="87.0" stroke="#bbb" stroke-width="0.6" stroke-dasharray="1,1"/>
<rect x="702.5" y="84.0" width="6" height="6" fill="#fff" stroke="#555" stroke-width="0.6" />
<polyline points="703.8,87.0 705.2,88.6 707.8,85.2" fill="none" stroke="#333" stroke-width="0.7" />
<rect x="712.8" y="83.4" width="3.4" height="2.4" fill="#e8d040" stroke="none" stroke-width="1" />
<rect x="712.8" y="85.8" width="3.4" height="2.4" fill="#40b040" stroke="none" stroke-width="1" />
<rect x="712.8" y="88.2" width="3.4" height="2.4" fill="#d04030" stroke="none" stroke-width="1" />
<rect x="712.8" y="83.4" width="3.4" height="7.2" fill="none" stroke="#444" stroke-width="0.4" />
<text x="721" y="89.1" font-size="6" fill="#222" text-anchor="start"  textLength="22" lengthAdjust="spacingAndGlyphs">Boreholes</text>
<rect x="694.5" y="85.0" width="4" height="4" fill="#fff" stroke="#9ab" stroke-width="0.5" />
<line x1="695.3" y1="87.0" x2="697.7" y2="87.0" stroke="#468" stroke-width="0.5" />
<line x1="696.5" y1="85.8" x2="696.5" y2="88.2" stroke="#468" stroke-width="0.5" />
<line x1="696.5" y1="95.7" x2="702" y2="95.7" stroke="#bbb" stroke-width="0.6" stroke-dasharray="1,1"/>
<rect x="702.5" y="92.7" width="6" height="6" fill="#fff" stroke="#555" stroke-width="0.6" />
<polyline points="703.8,95.7 705.2,97.3 707.8,93.9" fill="none" stroke="#333" stroke-width="0.7" />
<rect x="712.8" y="92.10000000000001" width="3.4" height="6.4" fill="#a8a8a8" stroke="#555" stroke-width="0.4" rx="1"/>
<rect x="713.3" y="95.9" width="2.4" height="2.2" fill="#3060c0" stroke="none" stroke-width="1" />
<path d="M713.3,98.5 L714.5,99.9 L715.7,98.5 Z" fill="#555"/>
<text x="721" y="97.8" font-size="6" fill="#222" text-anchor="start"  textLength="9" lengthAdjust="spacingAndGlyphs">CPT</text>
<rect x="694.5" y="93.7" width="4" height="4" fill="#fff" stroke="#9ab" stroke-width="0.5" />
<line x1="695.3" y1="95.7" x2="697.7" y2="95.7" stroke="#468" stroke-width="0.5" />
<line x1="696.5" y1="94.5" x2="696.5" y2="96.9" stroke="#468" stroke-width="0.5" />
<rect x="372" y="188" width="782" height="437" fill="#fff" stroke="none" stroke-width="1" />
<defs>
<linearGradient id="cg" x1="0" y1="221" x2="0" y2="510" gradientUnits="userSpaceOnUse">
<stop offset="0.0000" stop-color="#d0ec00"/>
<stop offset="0.0277" stop-color="#e8ec00"/>
<stop offset="0.0623" stop-color="#f8d000"/>
<stop offset="0.0865" stop-color="#f8b800"/>
<stop offset="0.1211" stop-color="#f8c400"/>
<stop offset="0.1522" stop-color="#f89800"/>
<stop offset="0.1799" stop-color="#f07800"/>
<stop offset="0.2042" stop-color="#f8a800"/>
<stop offset="0.2284" stop-color="#f8c000"/>
<stop offset="0.2561" stop-color="#f89800"/>
<stop offset="0.3426" stop-color="#f88000"/>
<stop offset="0.4048" stop-color="#f07000"/>
<stop offset="0.4394" stop-color="#f06000"/>
<stop offset="0.4948" stop-color="#f05800"/>
<stop offset="0.5363" stop-color="#f07000"/>
<stop offset="0.5502" stop-color="#f89000"/>
<stop offset="0.5606" stop-color="#f8e000"/>
<stop offset="0.5744" stop-color="#b0e800"/>
<stop offset="0.5848" stop-color="#50e000"/>
<stop offset="0.6886" stop-color="#30e000"/>
<stop offset="0.8962" stop-color="#10e030"/>
<stop offset="1.0000" stop-color="#00e860"/>
</linearGradient>
<linearGradient id="ch" x1="504" y1="0" x2="640" y2="0" gradientUnits="userSpaceOnUse">
<stop offset="0" stop-color="#f0f000" stop-opacity="0.6"/>
<stop offset="0.3" stop-color="#f0f000" stop-opacity="0"/>
<stop offset="0.7" stop-color="#f0f000" stop-opacity="0"/>
<stop offset="1" stop-color="#f0f000" stop-opacity="0.6"/>
</linearGradient>
<linearGradient id="chg" x1="504" y1="0" x2="640" y2="0" gradientUnits="userSpaceOnUse">
<stop offset="0" stop-color="#00e880" stop-opacity="0.6"/>
<stop offset="0.35" stop-color="#00e880" stop-opacity="0"/>
<stop offset="0.65" stop-color="#00e880" stop-opacity="0"/>
<stop offset="1" stop-color="#00e880" stop-opacity="0.6"/>
</linearGradient>
<radialGradient id="core" cx="574" cy="361" r="72" gradientUnits="userSpaceOnUse" gradientTransform="translate(574,361) scale(1,0.36) translate(-574,-361)">
<stop offset="0" stop-color="#e02800" stop-opacity="1"/>
<stop offset="0.6" stop-color="#e83400" stop-opacity="0.9"/>
<stop offset="1" stop-color="#f05000" stop-opacity="0"/>
</radialGradient>
<linearGradient id="ch2" x1="504" y1="0" x2="640" y2="0" gradientUnits="userSpaceOnUse">
<stop offset="0" stop-color="#f8c000" stop-opacity="0.55"/>
<stop offset="0.25" stop-color="#f8c000" stop-opacity="0"/>
<stop offset="0.75" stop-color="#f8c000" stop-opacity="0"/>
<stop offset="1" stop-color="#f8c000" stop-opacity="0.55"/>
</linearGradient>
<pattern id="hatch" width="4" height="4" patternUnits="userSpaceOnUse">
<rect width="4" height="4" fill="#f6f6fe"/><rect x="0" y="0" width="2" height="2" fill="#e2e2f6"/><rect x="2" y="2" width="2" height="2" fill="#e6e6f8"/>
</pattern>

</defs>
<defs><linearGradient id="s0" x1="504" x2="640" y1="0" y2="0" gradientUnits="userSpaceOnUse"><stop offset="0" stop-color="#b2e500"/><stop offset="0.3" stop-color="#d3ec00"/><stop offset="0.7" stop-color="#d3ec00"/><stop offset="1" stop-color="#b2e500"/></linearGradient><linearGradient id="s1" x1="504" x2="640" y1="0" y2="0" gradientUnits="userSpaceOnUse"><stop offset="0" stop-color="#b7e700"/><stop offset="0.3" stop-color="#d9ec00"/><stop offset="0.7" stop-color="#d9ec00"/><stop offset="1" stop-color="#b7e700"/></linearGradient><linearGradient id="s2" x1="504" x2="640" y1="0" y2="0" gradientUnits="userSpaceOnUse"><stop offset="0" stop-color="#bbe800"/><stop offset="0.3" stop-color="#dfec00"/><stop offset="0.7" stop-color="#dfec00"/><stop offset="1" stop-color="#bbe800"/></linearGradient><linearGradient id="s3" x1="504" x2="640" y1="0" y2="0" gradientUnits="userSpaceOnUse"><stop offset="0" stop-color="#c0ea00"/><stop offset="0.3" stop-color="#e5ec00"/><stop offset="0.7" stop-color="#e5ec00"/><stop offset="1" stop-color="#c0ea00"/></linearGradient><linearGradient id="s4" x1="504" x2="640" y1="0" y2="0" gradientUnits="userSpaceOnUse"><stop offset="0" stop-color="#c5ec00"/><stop offset="0.3" stop-color="#eae900"/><stop offset="0.7" stop-color="#eae900"/><stop offset="1" stop-color="#c5ec00"/></linearGradient><linearGradient id="s5" x1="504" x2="640" y1="0" y2="0" gradientUnits="userSpaceOnUse"><stop offset="0" stop-color="#c9ed00"/><stop offset="0.3" stop-color="#ede400"/><stop offset="0.7" stop-color="#ede400"/><stop offset="1" stop-color="#c9ed00"/></linearGradient><linearGradient id="s6" x1="504" x2="640" y1="0" y2="0" gradientUnits="userSpaceOnUse"><stop offset="0" stop-color="#ceef00"/><stop offset="0.3" stop-color="#f0de00"/><stop offset="0.7" stop-color="#f0de00"/><stop offset="1" stop-color="#ceef00"/></linearGradient><linearGradient id="s7" x1="504" x2="640" y1="0" y2="0" gradientUnits="userSpaceOnUse"><stop offset="0" stop-color="#d2ee00"/><stop offset="0.3" stop-color="#f3d800"/><stop offset="0.7" stop-color="#f3d800"/><stop offset="1" stop-color="#d2ee00"/></linearGradient><linearGradient id="s8" x1="504" x2="640" y1="0" y2="0" gradientUnits="userSpaceOnUse"><stop offset="0" stop-color="#d6eb00"/><stop offset="0.3" stop-color="#f6d300"/><stop offset="0.7" stop-color="#f6d300"/><stop offset="1" stop-color="#d6eb00"/></linearGradient><linearGradient id="s9" x1="504" x2="640" y1="0" y2="0" gradientUnits="userSpaceOnUse"><stop offset="0" stop-color="#dbe800"/><stop offset="0.3" stop-color="#f8cd00"/><stop offset="0.7" stop-color="#f8cd00"/><stop offset="1" stop-color="#dbe800"/></linearGradient><linearGradient id="s10" x1="504" x2="640" y1="0" y2="0" gradientUnits="userSpaceOnUse"><stop offset="0" stop-color="#dfe500"/><stop offset="0.3" stop-color="#f8c600"/><stop offset="0.7" stop-color="#f8c600"/><stop offset="1" stop-color="#dfe500"/></linearGradient><linearGradient id="s11" x1="504" x2="640" y1="0" y2="0" gradientUnits="userSpaceOnUse"><stop offset="0" stop-color="#e3e200"/><stop offset="0.3" stop-color="#f8bf00"/><stop offset="0.7" stop-color="#f8bf00"/><stop offset="1" stop-color="#e3e200"/></linearGradient><linearGradient id="s12" x1="504" x2="640" y1="0" y2="0" gradientUnits="userSpaceOnUse"><stop offset="0" stop-color="#e7de00"/><stop offset="0.3" stop-color="#f8b800"/><stop offset="0.7" stop-color="#f8b800"/><stop offset="1" stop-color="#e7de00"/></linearGradient><linearGradient id="s13" x1="504" x2="640" y1="0" y2="0" gradientUnits="userSpaceOnUse"><stop offset="0" stop-color="#ecdb00"/><stop offset="0.3" stop-color="#f8ba00"/><stop offset="0.7" stop-color="#f8ba00"/><stop offset="1" stop-color="#ecdb00"/></linearGradient><linearGradient id="s14" x1="504" x2="640" y1="0" y2="0" gradientUnits="userSpaceOnUse"><stop offset="0" stop-color="#f0d800"/><stop offset="0.3" stop-color="#f8bd00"/><stop offset="0.7" stop-color="#f8bd00"/><stop offset="1" stop-color="#f0d800"/></linearGradient><linearGradient id="s15" x1="504" x2="640" y1="0" y2="0" gradientUnits="userSpaceOnUse"><stop offset="0" stop-color="#eddb00"/><stop offset="0.3" stop-color="#f8bf00"/><stop offset="0.7" stop-color="#f8bf00"/><stop offset="1" stop-color="#eddb00"/></linearGradient><linearGradient id="s16" x1="504" x2="640" y1="0" y2="0" gradientUnits="userSpaceOnUse"><stop offset="0" stop-color="#ebdd00"/><stop offset="0.3" stop-color="#f8c200"/><stop offset="0.7" stop-color="#f8c200"/><stop offset="1" stop-color="#ebdd00"/></linearGradient><linearGradient id="s17" x1="504" x2="640" y1="0" y2="0" gradientUnits="userSpaceOnUse"><stop offset="0" stop-color="#e8e000"/><stop offset="0.3" stop-color="#f8c400"/><stop offset="0.7" stop-color="#f8c400"/><stop offset="1" stop-color="#e8e000"/></linearGradient><linearGradient id="s18" x1="504" x2="640" y1="0" y2="0" gradientUnits="userSpaceOnUse"><stop offset="0" stop-color="#e5e300"/><stop offset="0.3" stop-color="#f8ba00"/><stop offset="0.7" stop-color="#f8ba00"/><stop offset="1" stop-color="#e5e300"/></linearGradient><linearGradient id="s19" x1="504" x2="640" y1="0" y2="0" gradientUnits="userSpaceOnUse"><stop offset="0" stop-color="#e3e500"/><stop offset="0.3" stop-color="#f8b000"/><stop offset="0.7" stop-color="#f8b000"/><stop offset="1" stop-color="#e3e500"/></linearGradient><linearGradient id="s20" x1="504" x2="640" y1="0" y2="0" gradientUnits="userSpaceOnUse"><stop offset="0" stop-color="#e0e800"/><stop offset="0.3" stop-color="#f8a700"/><stop offset="0.7" stop-color="#f8a700"/><stop offset="1" stop-color="#e0e800"/></linearGradient><linearGradient id="s21" x1="504" x2="640" y1="0" y2="0" gradientUnits="userSpaceOnUse"><stop offset="0" stop-color="#e3df00"/><stop offset="0.3" stop-color="#f89d00"/><stop offset="0.7" stop-color="#f89d00"/><stop offset="1" stop-color="#e3df00"/></linearGradient><linearGradient id="s22" x1="504" x2="640" y1="0" y2="0" gradientUnits="userSpaceOnUse"><stop offset="0" stop-color="#e6d700"/><stop offset="0.3" stop-color="#f79400"/><stop offset="0.7" stop-color="#f79400"/><stop offset="1" stop-color="#e6d700"/></linearGradient><linearGradient id="s23" x1="504" x2="640" y1="0" y2="0" gradientUnits="userSpaceOnUse"><stop offset="0" stop-color="#e9ce00"/><stop offset="0.3" stop-color="#f58c00"/><stop offset="0.7" stop-color="#f58c00"/><stop offset="1" stop-color="#e9ce00"/></linearGradient><linearGradient id="s24" x1="504" x2="640" y1="0" y2="0" gradientUnits="userSpaceOnUse"><stop offset="0" stop-color="#ecc500"/><stop offset="0.3" stop-color="#f38400"/><stop offset="0.7" stop-color="#f38400"/><stop offset="1" stop-color="#ecc500"/></linearGradient><linearGradient id="s25" x1="504" x2="640" y1="0" y2="0" gradientUnits="userSpaceOnUse"><stop offset="0" stop-color="#efbc00"/><stop offset="0.3" stop-color="#f17c00"/><stop offset="0.7" stop-color="#f17c00"/><stop offset="1" stop-color="#efbc00"/></linearGradient><linearGradient id="s26" x1="504" x2="640" y1="0" y2="0" gradientUnits="userSpaceOnUse"><stop offset="0" stop-color="#edbc00"/><stop offset="0.3" stop-color="#f17f00"/><stop offset="0.7" stop-color="#f17f00"/><stop offset="1" stop-color="#edbc00"/></linearGradient><linearGradient id="s27" x1="504" x2="640" y1="0" y2="0" gradientUnits="userSpaceOnUse"><stop offset="0" stop-color="#e6c500"/><stop offset="0.3" stop-color="#f38d00"/><stop offset="0.7" stop-color="#f38d00"/><stop offset="1" stop-color="#e6c500"/></linearGradient><linearGradient id="s28" x1="504" x2="640" y1="0" y2="0" gradientUnits="userSpaceOnUse"><stop offset="0" stop-color="#dfce00"/><stop offset="0.3" stop-color="#f69a00"/><stop offset="0.7" stop-color="#f69a00"/><stop offset="1" stop-color="#dfce00"/></linearGradient><linearGradient id="s29" x1="504" x2="640" y1="0" y2="0" gradientUnits="userSpaceOnUse"><stop offset="0" stop-color="#d9d600"/><stop offset="0.3" stop-color="#f8a800"/><stop offset="0.7" stop-color="#f8a800"/><stop offset="1" stop-color="#d9d600"/></linearGradient><linearGradient id="s30" x1="504" x2="640" y1="0" y2="0" gradientUnits="userSpaceOnUse"><stop offset="0" stop-color="#d2df00"/><stop offset="0.3" stop-color="#f8af00"/><stop offset="0.7" stop-color="#f8af00"/><stop offset="1" stop-color="#d2df00"/></linearGradient><linearGradient id="s31" x1="504" x2="640" y1="0" y2="0" gradientUnits="userSpaceOnUse"><stop offset="0" stop-color="#cbe800"/><stop offset="0.3" stop-color="#f8b600"/><stop offset="0.7" stop-color="#f8b600"/><stop offset="1" stop-color="#cbe800"/></linearGradient><linearGradient id="s32" x1="504" x2="640" y1="0" y2="0" gradientUnits="userSpaceOnUse"><stop offset="0" stop-color="#cce800"/><stop offset="0.3" stop-color="#f8bd00"/><stop offset="0.7" stop-color="#f8bd00"/><stop offset="1" stop-color="#cce800"/></linearGradient><linearGradient id="s33" x1="504" x2="640" y1="0" y2="0" gradientUnits="userSpaceOnUse"><stop offset="0" stop-color="#d4e100"/><stop offset="0.3" stop-color="#f8bb00"/><stop offset="0.7" stop-color="#f8bb00"/><stop offset="1" stop-color="#d4e100"/></linearGradient><linearGradient id="s34" x1="504" x2="640" y1="0" y2="0" gradientUnits="userSpaceOnUse"><stop offset="0" stop-color="#dcda00"/><stop offset="0.3" stop-color="#f8b100"/><stop offset="0.7" stop-color="#f8b100"/><stop offset="1" stop-color="#dcda00"/></linearGradient><linearGradient id="s35" x1="504" x2="640" y1="0" y2="0" gradientUnits="userSpaceOnUse"><stop offset="0" stop-color="#e4d300"/><stop offset="0.3" stop-color="#f8a700"/><stop offset="0.7" stop-color="#f8a700"/><stop offset="1" stop-color="#e4d300"/></linearGradient><linearGradient id="s36" x1="504" x2="640" y1="0" y2="0" gradientUnits="userSpaceOnUse"><stop offset="0" stop-color="#eccc00"/><stop offset="0.3" stop-color="#f89d00"/><stop offset="0.7" stop-color="#f89d00"/><stop offset="1" stop-color="#eccc00"/></linearGradient><linearGradient id="s37" x1="504" x2="640" y1="0" y2="0" gradientUnits="userSpaceOnUse"><stop offset="0" stop-color="#f0c700"/><stop offset="0.3" stop-color="#f89700"/><stop offset="0.7" stop-color="#f89700"/><stop offset="1" stop-color="#f0c700"/></linearGradient><linearGradient id="s38" x1="504" x2="640" y1="0" y2="0" gradientUnits="userSpaceOnUse"><stop offset="0" stop-color="#f1c400"/><stop offset="0.3" stop-color="#f89500"/><stop offset="0.7" stop-color="#f89500"/><stop offset="1" stop-color="#f1c400"/></linearGradient><linearGradient id="s39" x1="504" x2="640" y1="0" y2="0" gradientUnits="userSpaceOnUse"><stop offset="0" stop-color="#f2c200"/><stop offset="0.3" stop-color="#f89300"/><stop offset="0.7" stop-color="#f89300"/><stop offset="1" stop-color="#f2c200"/></linearGradient><linearGradient id="s40" x1="504" x2="640" y1="0" y2="0" gradientUnits="userSpaceOnUse"><stop offset="0" stop-color="#f2bf00"/><stop offset="0.3" stop-color="#f89100"/><stop offset="0.7" stop-color="#f89100"/><stop offset="1" stop-color="#f2bf00"/></linearGradient><linearGradient id="s41" x1="504" x2="640" y1="0" y2="0" gradientUnits="userSpaceOnUse"><stop offset="0" stop-color="#f3bc00"/><stop offset="0.3" stop-color="#f88f00"/><stop offset="0.7" stop-color="#f88f00"/><stop offset="1" stop-color="#f3bc00"/></linearGradient><linearGradient id="s42" x1="504" x2="640" y1="0" y2="0" gradientUnits="userSpaceOnUse"><stop offset="0" stop-color="#f4ba00"/><stop offset="0.3" stop-color="#f88d00"/><stop offset="0.7" stop-color="#f88d00"/><stop offset="1" stop-color="#f4ba00"/></linearGradient><linearGradient id="s43" x1="504" x2="640" y1="0" y2="0" gradientUnits="userSpaceOnUse"><stop offset="0" stop-color="#f4b700"/><stop offset="0.3" stop-color="#f88c00"/><stop offset="0.7" stop-color="#f88c00"/><stop offset="1" stop-color="#f4b700"/></linearGradient><linearGradient id="s44" x1="504" x2="640" y1="0" y2="0" gradientUnits="userSpaceOnUse"><stop offset="0" stop-color="#f5b500"/><stop offset="0.3" stop-color="#f88a00"/><stop offset="0.7" stop-color="#f88a00"/><stop offset="1" stop-color="#f5b500"/></linearGradient><linearGradient id="s45" x1="504" x2="640" y1="0" y2="0" gradientUnits="userSpaceOnUse"><stop offset="0" stop-color="#f5b200"/><stop offset="0.3" stop-color="#f88800"/><stop offset="0.7" stop-color="#f88800"/><stop offset="1" stop-color="#f5b200"/></linearGradient><linearGradient id="s46" x1="504" x2="640" y1="0" y2="0" gradientUnits="userSpaceOnUse"><stop offset="0" stop-color="#f6b000"/><stop offset="0.3" stop-color="#f88600"/><stop offset="0.7" stop-color="#f88600"/><stop offset="1" stop-color="#f6b000"/></linearGradient><linearGradient id="s47" x1="504" x2="640" y1="0" y2="0" gradientUnits="userSpaceOnUse"><stop offset="0" stop-color="#f7ad00"/><stop offset="0.3" stop-color="#f88400"/><stop offset="0.7" stop-color="#f88400"/><stop offset="1" stop-color="#f7ad00"/></linearGradient><linearGradient id="s48" x1="504" x2="640" y1="0" y2="0" gradientUnits="userSpaceOnUse"><stop offset="0" stop-color="#f7ab00"/><stop offset="0.3" stop-color="#f88200"/><stop offset="0.7" stop-color="#f88200"/><stop offset="1" stop-color="#f7ab00"/></linearGradient><linearGradient id="s49" x1="504" x2="640" y1="0" y2="0" gradientUnits="userSpaceOnUse"><stop offset="0" stop-color="#f8a800"/><stop offset="0.3" stop-color="#f88000"/><stop offset="0.7" stop-color="#f88000"/><stop offset="1" stop-color="#f8a800"/></linearGradient><linearGradient id="s50" x1="504" x2="640" y1="0" y2="0" gradientUnits="userSpaceOnUse"><stop offset="0" stop-color="#f8a700"/><stop offset="0.3" stop-color="#f77e00"/><stop offset="0.7" stop-color="#f77e00"/><stop offset="1" stop-color="#f8a700"/></linearGradient><linearGradient id="s51" x1="504" x2="640" y1="0" y2="0" gradientUnits="userSpaceOnUse"><stop offset="0" stop-color="#f8a600"/><stop offset="0.3" stop-color="#f67c00"/><stop offset="0.7" stop-color="#f67c00"/><stop offset="1" stop-color="#f8a600"/></linearGradient><linearGradient id="s52" x1="504" x2="640" y1="0" y2="0" gradientUnits="userSpaceOnUse"><stop offset="0" stop-color="#f8a600"/><stop offset="0.3" stop-color="#f57b00"/><stop offset="0.7" stop-color="#f57b00"/><stop offset="1" stop-color="#f8a600"/></linearGradient><linearGradient id="s53" x1="504" x2="640" y1="0" y2="0" gradientUnits="userSpaceOnUse"><stop offset="0" stop-color="#f8a500"/><stop offset="0.3" stop-color="#f47900"/><stop offset="0.7" stop-color="#f47900"/><stop offset="1" stop-color="#f8a500"/></linearGradient><linearGradient id="s54" x1="504" x2="640" y1="0" y2="0" gradientUnits="userSpaceOnUse"><stop offset="0" stop-color="#f8a400"/><stop offset="0.3" stop-color="#f47700"/><stop offset="0.7" stop-color="#f47700"/><stop offset="1" stop-color="#f8a400"/></linearGradient><linearGradient id="s55" x1="504" x2="640" y1="0" y2="0" gradientUnits="userSpaceOnUse"><stop offset="0" stop-color="#f8a300"/><stop offset="0.3" stop-color="#f37500"/><stop offset="0.7" stop-color="#f37500"/><stop offset="1" stop-color="#f8a300"/></linearGradient><linearGradient id="s56" x1="504" x2="640" y1="0" y2="0" gradientUnits="userSpaceOnUse"><stop offset="0" stop-color="#f8a200"/><stop offset="0.3" stop-color="#f27400"/><stop offset="0.7" stop-color="#f27400"/><stop offset="1" stop-color="#f8a200"/></linearGradient><linearGradient id="s57" x1="504" x2="640" y1="0" y2="0" gradientUnits="userSpaceOnUse"><stop offset="0" stop-color="#f8a200"/><stop offset="0.3" stop-color="#f17200"/><stop offset="0.7" stop-color="#f17200"/><stop offset="1" stop-color="#f8a200"/></linearGradient><linearGradient id="s58" x1="504" x2="640" y1="0" y2="0" gradientUnits="userSpaceOnUse"><stop offset="0" stop-color="#f8a100"/><stop offset="0.3" stop-color="#f07000"/><stop offset="0.7" stop-color="#f07000"/><stop offset="1" stop-color="#f8a100"/></linearGradient><linearGradient id="s59" x1="504" x2="640" y1="0" y2="0" gradientUnits="userSpaceOnUse"><stop offset="0" stop-color="#f8a000"/><stop offset="0.3" stop-color="#f06d00"/><stop offset="0.7" stop-color="#f06d00"/><stop offset="1" stop-color="#f8a000"/></linearGradient><linearGradient id="s60" x1="504" x2="640" y1="0" y2="0" gradientUnits="userSpaceOnUse"><stop offset="0" stop-color="#f89f00"/><stop offset="0.3" stop-color="#f06a00"/><stop offset="0.7" stop-color="#f06a00"/><stop offset="1" stop-color="#f89f00"/></linearGradient><linearGradient id="s61" x1="504" x2="640" y1="0" y2="0" gradientUnits="userSpaceOnUse"><stop offset="0" stop-color="#f89e00"/><stop offset="0.3" stop-color="#f06600"/><stop offset="0.7" stop-color="#f06600"/><stop offset="1" stop-color="#f89e00"/></linearGradient><linearGradient id="s62" x1="504" x2="640" y1="0" y2="0" gradientUnits="userSpaceOnUse"><stop offset="0" stop-color="#f89e00"/><stop offset="0.3" stop-color="#f06300"/><stop offset="0.7" stop-color="#f06300"/><stop offset="1" stop-color="#f89e00"/></linearGradient><linearGradient id="s63" x1="504" x2="640" y1="0" y2="0" gradientUnits="userSpaceOnUse"><stop offset="0" stop-color="#f89d00"/><stop offset="0.3" stop-color="#f06000"/><stop offset="0.7" stop-color="#f06000"/><stop offset="1" stop-color="#f89d00"/></linearGradient><linearGradient id="s64" x1="504" x2="640" y1="0" y2="0" gradientUnits="userSpaceOnUse"><stop offset="0" stop-color="#f89c00"/><stop offset="0.3" stop-color="#f05f00"/><stop offset="0.7" stop-color="#f05f00"/><stop offset="1" stop-color="#f89c00"/></linearGradient><linearGradient id="s65" x1="504" x2="640" y1="0" y2="0" gradientUnits="userSpaceOnUse"><stop offset="0" stop-color="#f89b00"/><stop offset="0.3" stop-color="#f05e00"/><stop offset="0.7" stop-color="#f05e00"/><stop offset="1" stop-color="#f89b00"/></linearGradient><linearGradient id="s66" x1="504" x2="640" y1="0" y2="0" gradientUnits="userSpaceOnUse"><stop offset="0" stop-color="#f89a00"/><stop offset="0.3" stop-color="#f05d00"/><stop offset="0.7" stop-color="#f05d00"/><stop offset="1" stop-color="#f89a00"/></linearGradient><linearGradient id="s67" x1="504" x2="640" y1="0" y2="0" gradientUnits="userSpaceOnUse"><stop offset="0" stop-color="#f89a00"/><stop offset="0.3" stop-color="#f05c00"/><stop offset="0.7" stop-color="#f05c00"/><stop offset="1" stop-color="#f89a00"/></linearGradient><linearGradient id="s68" x1="504" x2="640" y1="0" y2="0" gradientUnits="userSpaceOnUse"><stop offset="0" stop-color="#f89900"/><stop offset="0.3" stop-color="#f05b00"/><stop offset="0.7" stop-color="#f05b00"/><stop offset="1" stop-color="#f89900"/></linearGradient><linearGradient id="s69" x1="504" x2="640" y1="0" y2="0" gradientUnits="userSpaceOnUse"><stop offset="0" stop-color="#f89800"/><stop offset="0.3" stop-color="#f05a00"/><stop offset="0.7" stop-color="#f05a00"/><stop offset="1" stop-color="#f89800"/></linearGradient><linearGradient id="s70" x1="504" x2="640" y1="0" y2="0" gradientUnits="userSpaceOnUse"><stop offset="0" stop-color="#f89a00"/><stop offset="0.3" stop-color="#f05900"/><stop offset="0.7" stop-color="#f05900"/><stop offset="1" stop-color="#f89a00"/></linearGradient><linearGradient id="s71" x1="504" x2="640" y1="0" y2="0" gradientUnits="userSpaceOnUse"><stop offset="0" stop-color="#f89c00"/><stop offset="0.3" stop-color="#f05800"/><stop offset="0.7" stop-color="#f05800"/><stop offset="1" stop-color="#f89c00"/></linearGradient><linearGradient id="s72" x1="504" x2="640" y1="0" y2="0" gradientUnits="userSpaceOnUse"><stop offset="0" stop-color="#f89e00"/><stop offset="0.3" stop-color="#f05c00"/><stop offset="0.7" stop-color="#f05c00"/><stop offset="1" stop-color="#f89e00"/></linearGradient><linearGradient id="s73" x1="504" x2="640" y1="0" y2="0" gradientUnits="userSpaceOnUse"><stop offset="0" stop-color="#f8a000"/><stop offset="0.3" stop-color="#f06000"/><stop offset="0.7" stop-color="#f06000"/><stop offset="1" stop-color="#f8a000"/></linearGradient><linearGradient id="s74" x1="504" x2="640" y1="0" y2="0" gradientUnits="userSpaceOnUse"><stop offset="0" stop-color="#f8a200"/><stop offset="0.3" stop-color="#f06400"/><stop offset="0.7" stop-color="#f06400"/><stop offset="1" stop-color="#f8a200"/></linearGradient><linearGradient id="s75" x1="504" x2="640" y1="0" y2="0" gradientUnits="userSpaceOnUse"><stop offset="0" stop-color="#f8a400"/><stop offset="0.3" stop-color="#f06800"/><stop offset="0.7" stop-color="#f06800"/><stop offset="1" stop-color="#f8a400"/></linearGradient><linearGradient id="s76" x1="504" x2="640" y1="0" y2="0" gradientUnits="userSpaceOnUse"><stop offset="0" stop-color="#f8a600"/><stop offset="0.3" stop-color="#f06c00"/><stop offset="0.7" stop-color="#f06c00"/><stop offset="1" stop-color="#f8a600"/></linearGradient><linearGradient id="s77" x1="504" x2="640" y1="0" y2="0" gradientUnits="userSpaceOnUse"><stop offset="0" stop-color="#f8a800"/><stop offset="0.3" stop-color="#f07000"/><stop offset="0.7" stop-color="#f07000"/><stop offset="1" stop-color="#f8a800"/></linearGradient><linearGradient id="s78" x1="504" x2="640" y1="0" y2="0" gradientUnits="userSpaceOnUse"><stop offset="0" stop-color="#f8b800"/><stop offset="0.3" stop-color="#f48000"/><stop offset="0.7" stop-color="#f48000"/><stop offset="1" stop-color="#f8b800"/></linearGradient><linearGradient id="s79" x1="504" x2="640" y1="0" y2="0" gradientUnits="userSpaceOnUse"><stop offset="0" stop-color="#f8c800"/><stop offset="0.3" stop-color="#f89000"/><stop offset="0.7" stop-color="#f89000"/><stop offset="1" stop-color="#f8c800"/></linearGradient><linearGradient id="s80" x1="504" x2="640" y1="0" y2="0" gradientUnits="userSpaceOnUse"><stop offset="0" stop-color="#e8e300"/><stop offset="0.3" stop-color="#f8c500"/><stop offset="0.7" stop-color="#f8c500"/><stop offset="1" stop-color="#e8e300"/></linearGradient><linearGradient id="s81" x1="504" x2="640" y1="0" y2="0" gradientUnits="userSpaceOnUse"><stop offset="0" stop-color="#ceee00"/><stop offset="0.3" stop-color="#e6e200"/><stop offset="0.7" stop-color="#e6e200"/><stop offset="1" stop-color="#ceee00"/></linearGradient><linearGradient id="s82" x1="504" x2="640" y1="0" y2="0" gradientUnits="userSpaceOnUse"><stop offset="0" stop-color="#a9eb00"/><stop offset="0.3" stop-color="#c2e600"/><stop offset="0.7" stop-color="#c2e600"/><stop offset="1" stop-color="#a9eb00"/></linearGradient><linearGradient id="s83" x1="504" x2="640" y1="0" y2="0" gradientUnits="userSpaceOnUse"><stop offset="0" stop-color="#85e700"/><stop offset="0.3" stop-color="#8de500"/><stop offset="0.7" stop-color="#8de500"/><stop offset="1" stop-color="#85e700"/></linearGradient><linearGradient id="s84" x1="504" x2="640" y1="0" y2="0" gradientUnits="userSpaceOnUse"><stop offset="0" stop-color="#60e400"/><stop offset="0.3" stop-color="#48e000"/><stop offset="0.7" stop-color="#48e000"/><stop offset="1" stop-color="#60e400"/></linearGradient><linearGradient id="s85" x1="504" x2="640" y1="0" y2="0" gradientUnits="userSpaceOnUse"><stop offset="0" stop-color="#5ee405"/><stop offset="0.3" stop-color="#46e000"/><stop offset="0.7" stop-color="#46e000"/><stop offset="1" stop-color="#5ee405"/></linearGradient><linearGradient id="s86" x1="504" x2="640" y1="0" y2="0" gradientUnits="userSpaceOnUse"><stop offset="0" stop-color="#5ce50b"/><stop offset="0.3" stop-color="#45e000"/><stop offset="0.7" stop-color="#45e000"/><stop offset="1" stop-color="#5ce50b"/></linearGradient><linearGradient id="s87" x1="504" x2="640" y1="0" y2="0" gradientUnits="userSpaceOnUse"><stop offset="0" stop-color="#5ae510"/><stop offset="0.3" stop-color="#43e000"/><stop offset="0.7" stop-color="#43e000"/><stop offset="1" stop-color="#5ae510"/></linearGradient><linearGradient id="s88" x1="504" x2="640" y1="0" y2="0" gradientUnits="userSpaceOnUse"><stop offset="0" stop-color="#57e515"/><stop offset="0.3" stop-color="#42e000"/><stop offset="0.7" stop-color="#42e000"/><stop offset="1" stop-color="#57e515"/></linearGradient><linearGradient id="s89" x1="504" x2="640" y1="0" y2="0" gradientUnits="userSpaceOnUse"><stop offset="0" stop-color="#55e51b"/><stop offset="0.3" stop-color="#40e000"/><stop offset="0.7" stop-color="#40e000"/><stop offset="1" stop-color="#55e51b"/></linearGradient><linearGradient id="s90" x1="504" x2="640" y1="0" y2="0" gradientUnits="userSpaceOnUse"><stop offset="0" stop-color="#53e620"/><stop offset="0.3" stop-color="#3ee000"/><stop offset="0.7" stop-color="#3ee000"/><stop offset="1" stop-color="#53e620"/></linearGradient><linearGradient id="s91" x1="504" x2="640" y1="0" y2="0" gradientUnits="userSpaceOnUse"><stop offset="0" stop-color="#51e625"/><stop offset="0.3" stop-color="#3de000"/><stop offset="0.7" stop-color="#3de000"/><stop offset="1" stop-color="#51e625"/></linearGradient><linearGradient id="s92" x1="504" x2="640" y1="0" y2="0" gradientUnits="userSpaceOnUse"><stop offset="0" stop-color="#4fe62b"/><stop offset="0.3" stop-color="#3be000"/><stop offset="0.7" stop-color="#3be000"/><stop offset="1" stop-color="#4fe62b"/></linearGradient><linearGradient id="s93" x1="504" x2="640" y1="0" y2="0" gradientUnits="userSpaceOnUse"><stop offset="0" stop-color="#4de630"/><stop offset="0.3" stop-color="#3ae000"/><stop offset="0.7" stop-color="#3ae000"/><stop offset="1" stop-color="#4de630"/></linearGradient><linearGradient id="s94" x1="504" x2="640" y1="0" y2="0" gradientUnits="userSpaceOnUse"><stop offset="0" stop-color="#4be735"/><stop offset="0.3" stop-color="#38e000"/><stop offset="0.7" stop-color="#38e000"/><stop offset="1" stop-color="#4be735"/></linearGradient><linearGradient id="s95" x1="504" x2="640" y1="0" y2="0" gradientUnits="userSpaceOnUse"><stop offset="0" stop-color="#49e73b"/><stop offset="0.3" stop-color="#36e000"/><stop offset="0.7" stop-color="#36e000"/><stop offset="1" stop-color="#49e73b"/></linearGradient><linearGradient id="s96" x1="504" x2="640" y1="0" y2="0" gradientUnits="userSpaceOnUse"><stop offset="0" stop-color="#46e740"/><stop offset="0.3" stop-color="#35e000"/><stop offset="0.7" stop-color="#35e000"/><stop offset="1" stop-color="#46e740"/></linearGradient><linearGradient id="s97" x1="504" x2="640" y1="0" y2="0" gradientUnits="userSpaceOnUse"><stop offset="0" stop-color="#44e745"/><stop offset="0.3" stop-color="#33e000"/><stop offset="0.7" stop-color="#33e000"/><stop offset="1" stop-color="#44e745"/></linearGradient><linearGradient id="s98" x1="504" x2="640" y1="0" y2="0" gradientUnits="userSpaceOnUse"><stop offset="0" stop-color="#42e84b"/><stop offset="0.3" stop-color="#32e000"/><stop offset="0.7" stop-color="#32e000"/><stop offset="1" stop-color="#42e84b"/></linearGradient><linearGradient id="s99" x1="504" x2="640" y1="0" y2="0" gradientUnits="userSpaceOnUse"><stop offset="0" stop-color="#40e850"/><stop offset="0.3" stop-color="#30e000"/><stop offset="0.7" stop-color="#30e000"/><stop offset="1" stop-color="#40e850"/></linearGradient><linearGradient id="s100" x1="504" x2="640" y1="0" y2="0" gradientUnits="userSpaceOnUse"><stop offset="0" stop-color="#3ee851"/><stop offset="0.3" stop-color="#2ee000"/><stop offset="0.7" stop-color="#2ee000"/><stop offset="1" stop-color="#3ee851"/></linearGradient><linearGradient id="s101" x1="504" x2="640" y1="0" y2="0" gradientUnits="userSpaceOnUse"><stop offset="0" stop-color="#3ce853"/><stop offset="0.3" stop-color="#2de000"/><stop offset="0.7" stop-color="#2de000"/><stop offset="1" stop-color="#3ce853"/></linearGradient><linearGradient id="s102" x1="504" x2="640" y1="0" y2="0" gradientUnits="userSpaceOnUse"><stop offset="0" stop-color="#3ae854"/><stop offset="0.3" stop-color="#2be000"/><stop offset="0.7" stop-color="#2be000"/><stop offset="1" stop-color="#3ae854"/></linearGradient><linearGradient id="s103" x1="504" x2="640" y1="0" y2="0" gradientUnits="userSpaceOnUse"><stop offset="0" stop-color="#37e855"/><stop offset="0.3" stop-color="#2ae000"/><stop offset="0.7" stop-color="#2ae000"/><stop offset="1" stop-color="#37e855"/></linearGradient><linearGradient id="s104" x1="504" x2="640" y1="0" y2="0" gradientUnits="userSpaceOnUse"><stop offset="0" stop-color="#35e857"/><stop offset="0.3" stop-color="#28e000"/><stop offset="0.7" stop-color="#28e000"/><stop offset="1" stop-color="#35e857"/></linearGradient><linearGradient id="s105" x1="504" x2="640" y1="0" y2="0" gradientUnits="userSpaceOnUse"><stop offset="0" stop-color="#33e858"/><stop offset="0.3" stop-color="#26e000"/><stop offset="0.7" stop-color="#26e000"/><stop offset="1" stop-color="#33e858"/></linearGradient><linearGradient id="s106" x1="504" x2="640" y1="0" y2="0" gradientUnits="userSpaceOnUse"><stop offset="0" stop-color="#31e859"/><stop offset="0.3" stop-color="#25e000"/><stop offset="0.7" stop-color="#25e000"/><stop offset="1" stop-color="#31e859"/></linearGradient><linearGradient id="s107" x1="504" x2="640" y1="0" y2="0" gradientUnits="userSpaceOnUse"><stop offset="0" stop-color="#2fe85b"/><stop offset="0.3" stop-color="#23e000"/><stop offset="0.7" stop-color="#23e000"/><stop offset="1" stop-color="#2fe85b"/></linearGradient><linearGradient id="s108" x1="504" x2="640" y1="0" y2="0" gradientUnits="userSpaceOnUse"><stop offset="0" stop-color="#2de85c"/><stop offset="0.3" stop-color="#22e000"/><stop offset="0.7" stop-color="#22e000"/><stop offset="1" stop-color="#2de85c"/></linearGradient><linearGradient id="s109" x1="504" x2="640" y1="0" y2="0" gradientUnits="userSpaceOnUse"><stop offset="0" stop-color="#2be85d"/><stop offset="0.3" stop-color="#20e000"/><stop offset="0.7" stop-color="#20e000"/><stop offset="1" stop-color="#2be85d"/></linearGradient><linearGradient id="s110" x1="504" x2="640" y1="0" y2="0" gradientUnits="userSpaceOnUse"><stop offset="0" stop-color="#29e85f"/><stop offset="0.3" stop-color="#1ee000"/><stop offset="0.7" stop-color="#1ee000"/><stop offset="1" stop-color="#29e85f"/></linearGradient><linearGradient id="s111" x1="504" x2="640" y1="0" y2="0" gradientUnits="userSpaceOnUse"><stop offset="0" stop-color="#26e860"/><stop offset="0.3" stop-color="#1de000"/><stop offset="0.7" stop-color="#1de000"/><stop offset="1" stop-color="#26e860"/></linearGradient><linearGradient id="s112" x1="504" x2="640" y1="0" y2="0" gradientUnits="userSpaceOnUse"><stop offset="0" stop-color="#24e861"/><stop offset="0.3" stop-color="#1be000"/><stop offset="0.7" stop-color="#1be000"/><stop offset="1" stop-color="#24e861"/></linearGradient><linearGradient id="s113" x1="504" x2="640" y1="0" y2="0" gradientUnits="userSpaceOnUse"><stop offset="0" stop-color="#22e863"/><stop offset="0.3" stop-color="#1ae000"/><stop offset="0.7" stop-color="#1ae000"/><stop offset="1" stop-color="#22e863"/></linearGradient><linearGradient id="s114" x1="504" x2="640" y1="0" y2="0" gradientUnits="userSpaceOnUse"><stop offset="0" stop-color="#20e864"/><stop offset="0.3" stop-color="#18e000"/><stop offset="0.7" stop-color="#18e000"/><stop offset="1" stop-color="#20e864"/></linearGradient><linearGradient id="s115" x1="504" x2="640" y1="0" y2="0" gradientUnits="userSpaceOnUse"><stop offset="0" stop-color="#1ee865"/><stop offset="0.3" stop-color="#16e000"/><stop offset="0.7" stop-color="#16e000"/><stop offset="1" stop-color="#1ee865"/></linearGradient><linearGradient id="s116" x1="504" x2="640" y1="0" y2="0" gradientUnits="userSpaceOnUse"><stop offset="0" stop-color="#1ce867"/><stop offset="0.3" stop-color="#15e000"/><stop offset="0.7" stop-color="#15e000"/><stop offset="1" stop-color="#1ce867"/></linearGradient><linearGradient id="s117" x1="504" x2="640" y1="0" y2="0" gradientUnits="userSpaceOnUse"><stop offset="0" stop-color="#1ae868"/><stop offset="0.3" stop-color="#13e000"/><stop offset="0.7" stop-color="#13e000"/><stop offset="1" stop-color="#1ae868"/></linearGradient><linearGradient id="s118" x1="504" x2="640" y1="0" y2="0" gradientUnits="userSpaceOnUse"><stop offset="0" stop-color="#17e869"/><stop offset="0.3" stop-color="#12e000"/><stop offset="0.7" stop-color="#12e000"/><stop offset="1" stop-color="#17e869"/></linearGradient><linearGradient id="s119" x1="504" x2="640" y1="0" y2="0" gradientUnits="userSpaceOnUse"><stop offset="0" stop-color="#15e86b"/><stop offset="0.3" stop-color="#10e000"/><stop offset="0.7" stop-color="#10e000"/><stop offset="1" stop-color="#15e86b"/></linearGradient><linearGradient id="s120" x1="504" x2="640" y1="0" y2="0" gradientUnits="userSpaceOnUse"><stop offset="0" stop-color="#13e86c"/><stop offset="0.3" stop-color="#0fe003"/><stop offset="0.7" stop-color="#0fe003"/><stop offset="1" stop-color="#13e86c"/></linearGradient><linearGradient id="s121" x1="504" x2="640" y1="0" y2="0" gradientUnits="userSpaceOnUse"><stop offset="0" stop-color="#11e86d"/><stop offset="0.3" stop-color="#0ee006"/><stop offset="0.7" stop-color="#0ee006"/><stop offset="1" stop-color="#11e86d"/></linearGradient><linearGradient id="s122" x1="504" x2="640" y1="0" y2="0" gradientUnits="userSpaceOnUse"><stop offset="0" stop-color="#0fe86f"/><stop offset="0.3" stop-color="#0de00a"/><stop offset="0.7" stop-color="#0de00a"/><stop offset="1" stop-color="#0fe86f"/></linearGradient><linearGradient id="s123" x1="504" x2="640" y1="0" y2="0" gradientUnits="userSpaceOnUse"><stop offset="0" stop-color="#0de870"/><stop offset="0.3" stop-color="#0ce00d"/><stop offset="0.7" stop-color="#0ce00d"/><stop offset="1" stop-color="#0de870"/></linearGradient><linearGradient id="s124" x1="504" x2="640" y1="0" y2="0" gradientUnits="userSpaceOnUse"><stop offset="0" stop-color="#0be871"/><stop offset="0.3" stop-color="#0be010"/><stop offset="0.7" stop-color="#0be010"/><stop offset="1" stop-color="#0be871"/></linearGradient><linearGradient id="s125" x1="504" x2="640" y1="0" y2="0" gradientUnits="userSpaceOnUse"><stop offset="0" stop-color="#09e873"/><stop offset="0.3" stop-color="#0ae013"/><stop offset="0.7" stop-color="#0ae013"/><stop offset="1" stop-color="#09e873"/></linearGradient><linearGradient id="s126" x1="504" x2="640" y1="0" y2="0" gradientUnits="userSpaceOnUse"><stop offset="0" stop-color="#06e874"/><stop offset="0.3" stop-color="#09e016"/><stop offset="0.7" stop-color="#09e016"/><stop offset="1" stop-color="#06e874"/></linearGradient><linearGradient id="s127" x1="504" x2="640" y1="0" y2="0" gradientUnits="userSpaceOnUse"><stop offset="0" stop-color="#04e875"/><stop offset="0.3" stop-color="#07e01a"/><stop offset="0.7" stop-color="#07e01a"/><stop offset="1" stop-color="#04e875"/></linearGradient><linearGradient id="s128" x1="504" x2="640" y1="0" y2="0" gradientUnits="userSpaceOnUse"><stop offset="0" stop-color="#02e877"/><stop offset="0.3" stop-color="#06e01d"/><stop offset="0.7" stop-color="#06e01d"/><stop offset="1" stop-color="#02e877"/></linearGradient><linearGradient id="s129" x1="504" x2="640" y1="0" y2="0" gradientUnits="userSpaceOnUse"><stop offset="0" stop-color="#00e878"/><stop offset="0.3" stop-color="#05e020"/><stop offset="0.7" stop-color="#05e020"/><stop offset="1" stop-color="#00e878"/></linearGradient><linearGradient id="s130" x1="504" x2="640" y1="0" y2="0" gradientUnits="userSpaceOnUse"><stop offset="0" stop-color="#00e879"/><stop offset="0.3" stop-color="#04e023"/><stop offset="0.7" stop-color="#04e023"/><stop offset="1" stop-color="#00e879"/></linearGradient><linearGradient id="s131" x1="504" x2="640" y1="0" y2="0" gradientUnits="userSpaceOnUse"><stop offset="0" stop-color="#00e87a"/><stop offset="0.3" stop-color="#03e026"/><stop offset="0.7" stop-color="#03e026"/><stop offset="1" stop-color="#00e87a"/></linearGradient><linearGradient id="s132" x1="504" x2="640" y1="0" y2="0" gradientUnits="userSpaceOnUse"><stop offset="0" stop-color="#00e87b"/><stop offset="0.3" stop-color="#02e02a"/><stop offset="0.7" stop-color="#02e02a"/><stop offset="1" stop-color="#00e87b"/></linearGradient><linearGradient id="s133" x1="504" x2="640" y1="0" y2="0" gradientUnits="userSpaceOnUse"><stop offset="0" stop-color="#00e87c"/><stop offset="0.3" stop-color="#01e02d"/><stop offset="0.7" stop-color="#01e02d"/><stop offset="1" stop-color="#00e87c"/></linearGradient><linearGradient id="s134" x1="504" x2="640" y1="0" y2="0" gradientUnits="userSpaceOnUse"><stop offset="0" stop-color="#00e87d"/><stop offset="0.3" stop-color="#00e030"/><stop offset="0.7" stop-color="#00e030"/><stop offset="1" stop-color="#00e87d"/></linearGradient><linearGradient id="s135" x1="504" x2="640" y1="0" y2="0" gradientUnits="userSpaceOnUse"><stop offset="0" stop-color="#00e87e"/><stop offset="0.3" stop-color="#00e135"/><stop offset="0.7" stop-color="#00e135"/><stop offset="1" stop-color="#00e87e"/></linearGradient><linearGradient id="s136" x1="504" x2="640" y1="0" y2="0" gradientUnits="userSpaceOnUse"><stop offset="0" stop-color="#00e87f"/><stop offset="0.3" stop-color="#00e23a"/><stop offset="0.7" stop-color="#00e23a"/><stop offset="1" stop-color="#00e87f"/></linearGradient><linearGradient id="s137" x1="504" x2="640" y1="0" y2="0" gradientUnits="userSpaceOnUse"><stop offset="0" stop-color="#00e881"/><stop offset="0.3" stop-color="#00e23e"/><stop offset="0.7" stop-color="#00e23e"/><stop offset="1" stop-color="#00e881"/></linearGradient><linearGradient id="s138" x1="504" x2="640" y1="0" y2="0" gradientUnits="userSpaceOnUse"><stop offset="0" stop-color="#00e882"/><stop offset="0.3" stop-color="#00e343"/><stop offset="0.7" stop-color="#00e343"/><stop offset="1" stop-color="#00e882"/></linearGradient><linearGradient id="s139" x1="504" x2="640" y1="0" y2="0" gradientUnits="userSpaceOnUse"><stop offset="0" stop-color="#00e883"/><stop offset="0.3" stop-color="#00e448"/><stop offset="0.7" stop-color="#00e448"/><stop offset="1" stop-color="#00e883"/></linearGradient><linearGradient id="s140" x1="504" x2="640" y1="0" y2="0" gradientUnits="userSpaceOnUse"><stop offset="0" stop-color="#00e884"/><stop offset="0.3" stop-color="#00e54d"/><stop offset="0.7" stop-color="#00e54d"/><stop offset="1" stop-color="#00e884"/></linearGradient><linearGradient id="s141" x1="504" x2="640" y1="0" y2="0" gradientUnits="userSpaceOnUse"><stop offset="0" stop-color="#00e885"/><stop offset="0.3" stop-color="#00e652"/><stop offset="0.7" stop-color="#00e652"/><stop offset="1" stop-color="#00e885"/></linearGradient><linearGradient id="s142" x1="504" x2="640" y1="0" y2="0" gradientUnits="userSpaceOnUse"><stop offset="0" stop-color="#00e886"/><stop offset="0.3" stop-color="#00e656"/><stop offset="0.7" stop-color="#00e656"/><stop offset="1" stop-color="#00e886"/></linearGradient><linearGradient id="s143" x1="504" x2="640" y1="0" y2="0" gradientUnits="userSpaceOnUse"><stop offset="0" stop-color="#00e887"/><stop offset="0.3" stop-color="#00e75b"/><stop offset="0.7" stop-color="#00e75b"/><stop offset="1" stop-color="#00e887"/></linearGradient><linearGradient id="s144" x1="504" x2="640" y1="0" y2="0" gradientUnits="userSpaceOnUse"><stop offset="0" stop-color="#00e888"/><stop offset="0.3" stop-color="#00e860"/><stop offset="0.7" stop-color="#00e860"/><stop offset="1" stop-color="#00e888"/></linearGradient></defs>
<rect x="504" y="221" width="136" height="2.4" fill="url(#s0)"/><rect x="504" y="223" width="136" height="2.4" fill="url(#s1)"/><rect x="504" y="225" width="136" height="2.4" fill="url(#s2)"/><rect x="504" y="227" width="136" height="2.4" fill="url(#s3)"/><rect x="504" y="229" width="136" height="2.4" fill="url(#s4)"/><rect x="504" y="231" width="136" height="2.4" fill="url(#s5)"/><rect x="504" y="233" width="136" height="2.4" fill="url(#s6)"/><rect x="504" y="235" width="136" height="2.4" fill="url(#s7)"/><rect x="504" y="237" width="136" height="2.4" fill="url(#s8)"/><rect x="504" y="239" width="136" height="2.4" fill="url(#s9)"/><rect x="504" y="241" width="136" height="2.4" fill="url(#s10)"/><rect x="504" y="243" width="136" height="2.4" fill="url(#s11)"/><rect x="504" y="245" width="136" height="2.4" fill="url(#s12)"/><rect x="504" y="247" width="136" height="2.4" fill="url(#s13)"/><rect x="504" y="249" width="136" height="2.4" fill="url(#s14)"/><rect x="504" y="251" width="136" height="2.4" fill="url(#s15)"/><rect x="504" y="253" width="136" height="2.4" fill="url(#s16)"/><rect x="504" y="255" width="136" height="2.4" fill="url(#s17)"/><rect x="504" y="257" width="136" height="2.4" fill="url(#s18)"/><rect x="504" y="259" width="136" height="2.4" fill="url(#s19)"/><rect x="504" y="261" width="136" height="2.4" fill="url(#s20)"/><rect x="504" y="263" width="136" height="2.4" fill="url(#s21)"/><rect x="504" y="265" width="136" height="2.4" fill="url(#s22)"/><rect x="504" y="267" width="136" height="2.4" fill="url(#s23)"/><rect x="504" y="269" width="136" height="2.4" fill="url(#s24)"/><rect x="504" y="271" width="136" height="2.4" fill="url(#s25)"/><rect x="504" y="273" width="136" height="2.4" fill="url(#s26)"/><rect x="504" y="275" width="136" height="2.4" fill="url(#s27)"/><rect x="504" y="277" width="136" height="2.4" fill="url(#s28)"/><rect x="504" y="279" width="136" height="2.4" fill="url(#s29)"/><rect x="504" y="281" width="136" height="2.4" fill="url(#s30)"/><rect x="504" y="283" width="136" height="2.4" fill="url(#s31)"/><rect x="504" y="285" width="136" height="2.4" fill="url(#s32)"/><rect x="504" y="287" width="136" height="2.4" fill="url(#s33)"/><rect x="504" y="289" width="136" height="2.4" fill="url(#s34)"/><rect x="504" y="291" width="136" height="2.4" fill="url(#s35)"/><rect x="504" y="293" width="136" height="2.4" fill="url(#s36)"/><rect x="504" y="295" width="136" height="2.4" fill="url(#s37)"/><rect x="504" y="297" width="136" height="2.4" fill="url(#s38)"/><rect x="504" y="299" width="136" height="2.4" fill="url(#s39)"/><rect x="504" y="301" width="136" height="2.4" fill="url(#s40)"/><rect x="504" y="303" width="136" height="2.4" fill="url(#s41)"/><rect x="504" y="305" width="136" height="2.4" fill="url(#s42)"/><rect x="504" y="307" width="136" height="2.4" fill="url(#s43)"/><rect x="504" y="309" width="136" height="2.4" fill="url(#s44)"/><rect x="504" y="311" width="136" height="2.4" fill="url(#s45)"/><rect x="504" y="313" width="136" height="2.4" fill="url(#s46)"/><rect x="504" y="315" width="136" height="2.4" fill="url(#s47)"/><rect x="504" y="317" width="136" height="2.4" fill="url(#s48)"/><rect x="504" y="319" width="136" height="2.4" fill="url(#s49)"/><rect x="504" y="321" width="136" height="2.4" fill="url(#s50)"/><rect x="504" y="323" width="136" height="2.4" fill="url(#s51)"/><rect x="504" y="325" width="136" height="2.4" fill="url(#s52)"/><rect x="504" y="327" width="136" height="2.4" fill="url(#s53)"/><rect x="504" y="329" width="136" height="2.4" fill="url(#s54)"/><rect x="504" y="331" width="136" height="2.4" fill="url(#s55)"/><rect x="504" y="333" width="136" height="2.4" fill="url(#s56)"/><rect x="504" y="335" width="136" height="2.4" fill="url(#s57)"/><rect x="504" y="337" width="136" height="2.4" fill="url(#s58)"/><rect x="504" y="339" width="136" height="2.4" fill="url(#s59)"/><rect x="504" y="341" width="136" height="2.4" fill="url(#s60)"/><rect x="504" y="343" width="136" height="2.4" fill="url(#s61)"/><rect x="504" y="345" width="136" height="2.4" fill="url(#s62)"/><rect x="504" y="347" width="136" height="2.4" fill="url(#s63)"/><rect x="504" y="349" width="136" height="2.4" fill="url(#s64)"/><rect x="504" y="351" width="136" height="2.4" fill="url(#s65)"/><rect x="504" y="353" width="136" height="2.4" fill="url(#s66)"/><rect x="504" y="355" width="136" height="2.4" fill="url(#s67)"/><rect x="504" y="357" width="136" height="2.4" fill="url(#s68)"/><rect x="504" y="359" width="136" height="2.4" fill="url(#s69)"/><rect x="504" y="361" width="136" height="2.4" fill="url(#s70)"/><rect x="504" y="363" width="136" height="2.4" fill="url(#s71)"/><rect x="504" y="365" width="136" height="2.4" fill="url(#s72)"/><rect x="504" y="367" width="136" height="2.4" fill="url(#s73)"/><rect x="504" y="369" width="136" height="2.4" fill="url(#s74)"/><rect x="504" y="371" width="136" height="2.4" fill="url(#s75)"/><rect x="504" y="373" width="136" height="2.4" fill="url(#s76)"/><rect x="504" y="375" width="136" height="2.4" fill="url(#s77)"/><rect x="504" y="377" width="136" height="2.4" fill="url(#s78)"/><rect x="504" y="379" width="136" height="2.4" fill="url(#s79)"/><rect x="504" y="381" width="136" height="2.4" fill="url(#s80)"/><rect x="504" y="383" width="136" height="2.4" fill="url(#s81)"/><rect x="504" y="385" width="136" height="2.4" fill="url(#s82)"/><rect x="504" y="387" width="136" height="2.4" fill="url(#s83)"/><rect x="504" y="389" width="136" height="2.4" fill="url(#s84)"/><rect x="504" y="391" width="136" height="2.4" fill="url(#s85)"/><rect x="504" y="393" width="136" height="2.4" fill="url(#s86)"/><rect x="504" y="395" width="136" height="2.4" fill="url(#s87)"/><rect x="504" y="397" width="136" height="2.4" fill="url(#s88)"/><rect x="504" y="399" width="136" height="2.4" fill="url(#s89)"/><rect x="504" y="401" width="136" height="2.4" fill="url(#s90)"/><rect x="504" y="403" width="136" height="2.4" fill="url(#s91)"/><rect x="504" y="405" width="136" height="2.4" fill="url(#s92)"/><rect x="504" y="407" width="136" height="2.4" fill="url(#s93)"/><rect x="504" y="409" width="136" height="2.4" fill="url(#s94)"/><rect x="504" y="411" width="136" height="2.4" fill="url(#s95)"/><rect x="504" y="413" width="136" height="2.4" fill="url(#s96)"/><rect x="504" y="415" width="136" height="2.4" fill="url(#s97)"/><rect x="504" y="417" width="136" height="2.4" fill="url(#s98)"/><rect x="504" y="419" width="136" height="2.4" fill="url(#s99)"/><rect x="504" y="421" width="136" height="2.4" fill="url(#s100)"/><rect x="504" y="423" width="136" height="2.4" fill="url(#s101)"/><rect x="504" y="425" width="136" height="2.4" fill="url(#s102)"/><rect x="504" y="427" width="136" height="2.4" fill="url(#s103)"/><rect x="504" y="429" width="136" height="2.4" fill="url(#s104)"/><rect x="504" y="431" width="136" height="2.4" fill="url(#s105)"/><rect x="504" y="433" width="136" height="2.4" fill="url(#s106)"/><rect x="504" y="435" width="136" height="2.4" fill="url(#s107)"/><rect x="504" y="437" width="136" height="2.4" fill="url(#s108)"/><rect x="504" y="439" width="136" height="2.4" fill="url(#s109)"/><rect x="504" y="441" width="136" height="2.4" fill="url(#s110)"/><rect x="504" y="443" width="136" height="2.4" fill="url(#s111)"/><rect x="504" y="445" width="136" height="2.4" fill="url(#s112)"/><rect x="504" y="447" width="136" height="2.4" fill="url(#s113)"/><rect x="504" y="449" width="136" height="2.4" fill="url(#s114)"/><rect x="504" y="451" width="136" height="2.4" fill="url(#s115)"/><rect x="504" y="453" width="136" height="2.4" fill="url(#s116)"/><rect x="504" y="455" width="136" height="2.4" fill="url(#s117)"/><rect x="504" y="457" width="136" height="2.4" fill="url(#s118)"/><rect x="504" y="459" width="136" height="2.4" fill="url(#s119)"/><rect x="504" y="461" width="136" height="2.4" fill="url(#s120)"/><rect x="504" y="463" width="136" height="2.4" fill="url(#s121)"/><rect x="504" y="465" width="136" height="2.4" fill="url(#s122)"/><rect x="504" y="467" width="136" height="2.4" fill="url(#s123)"/><rect x="504" y="469" width="136" height="2.4" fill="url(#s124)"/><rect x="504" y="471" width="136" height="2.4" fill="url(#s125)"/><rect x="504" y="473" width="136" height="2.4" fill="url(#s126)"/><rect x="504" y="475" width="136" height="2.4" fill="url(#s127)"/><rect x="504" y="477" width="136" height="2.4" fill="url(#s128)"/><rect x="504" y="479" width="136" height="2.4" fill="url(#s129)"/><rect x="504" y="481" width="136" height="2.4" fill="url(#s130)"/><rect x="504" y="483" width="136" height="2.4" fill="url(#s131)"/><rect x="504" y="485" width="136" height="2.4" fill="url(#s132)"/><rect x="504" y="487" width="136" height="2.4" fill="url(#s133)"/><rect x="504" y="489" width="136" height="2.4" fill="url(#s134)"/><rect x="504" y="491" width="136" height="2.4" fill="url(#s135)"/><rect x="504" y="493" width="136" height="2.4" fill="url(#s136)"/><rect x="504" y="495" width="136" height="2.4" fill="url(#s137)"/><rect x="504" y="497" width="136" height="2.4" fill="url(#s138)"/><rect x="504" y="499" width="136" height="2.4" fill="url(#s139)"/><rect x="504" y="501" width="136" height="2.4" fill="url(#s140)"/><rect x="504" y="503" width="136" height="2.4" fill="url(#s141)"/><rect x="504" y="505" width="136" height="2.4" fill="url(#s142)"/><rect x="504" y="507" width="136" height="2.4" fill="url(#s143)"/><rect x="504" y="509" width="136" height="1" fill="url(#s144)"/>
<clipPath id="cclip"><rect x="504" y="221" width="136" height="289"/></clipPath><ellipse cx="574" cy="361" rx="72" ry="26" fill="url(#core)" clip-path="url(#cclip)"/>
<rect x="504" y="510" width="136" height="52.5" fill="url(#hatch)" stroke="none" stroke-width="1" />
<line x1="530" y1="510.5" x2="640" y2="510.5" stroke="#f07040" stroke-width="1" />
<line x1="384" y1="189" x2="384" y2="598.5" stroke="#666" stroke-width="1" />
<line x1="384" y1="598.5" x2="762" y2="598.5" stroke="#666" stroke-width="1" />
<line x1="380" y1="597.1" x2="384" y2="597.1" stroke="#666" stroke-width="0.7" />
<line x1="382" y1="590.3000000000001" x2="384" y2="590.3000000000001" stroke="#666" stroke-width="0.7" />
<line x1="382" y1="583.5" x2="384" y2="583.5" stroke="#666" stroke-width="0.7" />
<line x1="382" y1="576.7" x2="384" y2="576.7" stroke="#666" stroke-width="0.7" />
<line x1="382" y1="569.9" x2="384" y2="569.9" stroke="#666" stroke-width="0.7" />
<line x1="381" y1="563.1" x2="384" y2="563.1" stroke="#666" stroke-width="0.7" />
<line x1="382" y1="556.3000000000001" x2="384" y2="556.3000000000001" stroke="#666" stroke-width="0.7" />
<line x1="382" y1="549.5" x2="384" y2="549.5" stroke="#666" stroke-width="0.7" />
<line x1="382" y1="542.7" x2="384" y2="542.7" stroke="#666" stroke-width="0.7" />
<line x1="382" y1="535.9" x2="384" y2="535.9" stroke="#666" stroke-width="0.7" />
<line x1="380" y1="529.1" x2="384" y2="529.1" stroke="#666" stroke-width="0.7" />
<line x1="382" y1="522.3000000000001" x2="384" y2="522.3000000000001" stroke="#666" stroke-width="0.7" />
<line x1="382" y1="515.5" x2="384" y2="515.5" stroke="#666" stroke-width="0.7" />
<line x1="382" y1="508.70000000000005" x2="384" y2="508.70000000000005" stroke="#666" stroke-width="0.7" />
<line x1="382" y1="501.90000000000003" x2="384" y2="501.90000000000003" stroke="#666" stroke-width="0.7" />
<line x1="381" y1="495.1" x2="384" y2="495.1" stroke="#666" stroke-width="0.7" />
<line x1="382" y1="488.3" x2="384" y2="488.3" stroke="#666" stroke-width="0.7" />
<line x1="382" y1="481.5" x2="384" y2="481.5" stroke="#666" stroke-width="0.7" />
<line x1="382" y1="474.70000000000005" x2="384" y2="474.70000000000005" stroke="#666" stroke-width="0.7" />
<line x1="382" y1="467.90000000000003" x2="384" y2="467.90000000000003" stroke="#666" stroke-width="0.7" />
<line x1="380" y1="461.1" x2="384" y2="461.1" stroke="#666" stroke-width="0.7" />
<line x1="382" y1="454.3" x2="384" y2="454.3" stroke="#666" stroke-width="0.7" />
<line x1="382" y1="447.5" x2="384" y2="447.5" stroke="#666" stroke-width="0.7" />
<line x1="382" y1="440.70000000000005" x2="384" y2="440.70000000000005" stroke="#666" stroke-width="0.7" />
<line x1="382" y1="433.90000000000003" x2="384" y2="433.90000000000003" stroke="#666" stroke-width="0.7" />
<line x1="381" y1="427.1" x2="384" y2="427.1" stroke="#666" stroke-width="0.7" />
<line x1="382" y1="420.3" x2="384" y2="420.3" stroke="#666" stroke-width="0.7" />
<line x1="382" y1="413.5" x2="384" y2="413.5" stroke="#666" stroke-width="0.7" />
<line x1="382" y1="406.70000000000005" x2="384" y2="406.70000000000005" stroke="#666" stroke-width="0.7" />
<line x1="382" y1="399.90000000000003" x2="384" y2="399.90000000000003" stroke="#666" stroke-width="0.7" />
<line x1="380" y1="393.1" x2="384" y2="393.1" stroke="#666" stroke-width="0.7" />
<line x1="382" y1="386.30000000000007" x2="384" y2="386.30000000000007" stroke="#666" stroke-width="0.7" />
<line x1="382" y1="379.5" x2="384" y2="379.5" stroke="#666" stroke-width="0.7" />
<line x1="382" y1="372.70000000000005" x2="384" y2="372.70000000000005" stroke="#666" stroke-width="0.7" />
<line x1="382" y1="365.90000000000003" x2="384" y2="365.90000000000003" stroke="#666" stroke-width="0.7" />
<line x1="381" y1="359.1" x2="384" y2="359.1" stroke="#666" stroke-width="0.7" />
<line x1="382" y1="352.30000000000007" x2="384" y2="352.30000000000007" stroke="#666" stroke-width="0.7" />
<line x1="382" y1="345.5" x2="384" y2="345.5" stroke="#666" stroke-width="0.7" />
<line x1="382" y1="338.70000000000005" x2="384" y2="338.70000000000005" stroke="#666" stroke-width="0.7" />
<line x1="382" y1="331.90000000000003" x2="384" y2="331.90000000000003" stroke="#666" stroke-width="0.7" />
<line x1="380" y1="325.1" x2="384" y2="325.1" stroke="#666" stroke-width="0.7" />
<line x1="382" y1="318.30000000000007" x2="384" y2="318.30000000000007" stroke="#666" stroke-width="0.7" />
<line x1="382" y1="311.5" x2="384" y2="311.5" stroke="#666" stroke-width="0.7" />
<line x1="382" y1="304.70000000000005" x2="384" y2="304.70000000000005" stroke="#666" stroke-width="0.7" />
<line x1="382" y1="297.90000000000003" x2="384" y2="297.90000000000003" stroke="#666" stroke-width="0.7" />
<line x1="381" y1="291.1" x2="384" y2="291.1" stroke="#666" stroke-width="0.7" />
<line x1="382" y1="284.30000000000007" x2="384" y2="284.30000000000007" stroke="#666" stroke-width="0.7" />
<line x1="382" y1="277.5" x2="384" y2="277.5" stroke="#666" stroke-width="0.7" />
<line x1="382" y1="270.70000000000005" x2="384" y2="270.70000000000005" stroke="#666" stroke-width="0.7" />
<line x1="382" y1="263.90000000000003" x2="384" y2="263.90000000000003" stroke="#666" stroke-width="0.7" />
<line x1="380" y1="257.1" x2="384" y2="257.1" stroke="#666" stroke-width="0.7" />
<line x1="382" y1="250.3" x2="384" y2="250.3" stroke="#666" stroke-width="0.7" />
<line x1="382" y1="243.50000000000006" x2="384" y2="243.50000000000006" stroke="#666" stroke-width="0.7" />
<line x1="382" y1="236.70000000000005" x2="384" y2="236.70000000000005" stroke="#666" stroke-width="0.7" />
<line x1="382" y1="229.90000000000003" x2="384" y2="229.90000000000003" stroke="#666" stroke-width="0.7" />
<line x1="381" y1="223.10000000000002" x2="384" y2="223.10000000000002" stroke="#666" stroke-width="0.7" />
<line x1="382" y1="216.3" x2="384" y2="216.3" stroke="#666" stroke-width="0.7" />
<line x1="382" y1="209.50000000000006" x2="384" y2="209.50000000000006" stroke="#666" stroke-width="0.7" />
<line x1="382" y1="202.70000000000005" x2="384" y2="202.70000000000005" stroke="#666" stroke-width="0.7" />
<line x1="382" y1="195.90000000000003" x2="384" y2="195.90000000000003" stroke="#666" stroke-width="0.7" />
<line x1="380" y1="189.10000000000002" x2="384" y2="189.10000000000002" stroke="#666" stroke-width="0.7" />
<text x="0" y="0" font-size="6.6" fill="#333" text-anchor="middle" transform="translate(379.5,257.8) rotate(-90)">400</text>
<text x="0" y="0" font-size="6.6" fill="#333" text-anchor="middle" transform="translate(379.5,325.7) rotate(-90)">300</text>
<text x="0" y="0" font-size="6.6" fill="#333" text-anchor="middle" transform="translate(379.5,393.6) rotate(-90)">200</text>
<text x="0" y="0" font-size="6.6" fill="#333" text-anchor="middle" transform="translate(379.5,461.5) rotate(-90)">100</text>
<text x="0" y="0" font-size="6.6" fill="#333" text-anchor="middle" transform="translate(379.5,529.4) rotate(-90)">0</text>
<text x="0" y="0" font-size="6.6" fill="#333" text-anchor="middle" transform="translate(379.5,597.3) rotate(-90)">-100</text>
<line x1="385.0" y1="598.5" x2="385.0" y2="600.5" stroke="#666" stroke-width="0.7" />
<line x1="391.80000000000007" y1="598.5" x2="391.80000000000007" y2="600.5" stroke="#666" stroke-width="0.7" />
<line x1="398.6" y1="598.5" x2="398.6" y2="602.5" stroke="#666" stroke-width="0.7" />
<line x1="405.40000000000003" y1="598.5" x2="405.40000000000003" y2="600.5" stroke="#666" stroke-width="0.7" />
<line x1="412.20000000000005" y1="598.5" x2="412.20000000000005" y2="600.5" stroke="#666" stroke-width="0.7" />
<line x1="419.0" y1="598.5" x2="419.0" y2="600.5" stroke="#666" stroke-width="0.7" />
<line x1="425.8" y1="598.5" x2="425.8" y2="600.5" stroke="#666" stroke-width="0.7" />
<line x1="432.6" y1="598.5" x2="432.6" y2="601.5" stroke="#666" stroke-width="0.7" />
<line x1="439.40000000000003" y1="598.5" x2="439.40000000000003" y2="600.5" stroke="#666" stroke-width="0.7" />
<line x1="446.20000000000005" y1="598.5" x2="446.20000000000005" y2="600.5" stroke="#666" stroke-width="0.7" />
<line x1="453.0" y1="598.5" x2="453.0" y2="600.5" stroke="#666" stroke-width="0.7" />
<line x1="459.8" y1="598.5" x2="459.8" y2="600.5" stroke="#666" stroke-width="0.7" />
<line x1="466.6" y1="598.5" x2="466.6" y2="602.5" stroke="#666" stroke-width="0.7" />
<line x1="473.40000000000003" y1="598.5" x2="473.40000000000003" y2="600.5" stroke="#666" stroke-width="0.7" />
<line x1="480.20000000000005" y1="598.5" x2="480.20000000000005" y2="600.5" stroke="#666" stroke-width="0.7" />
<line x1="487.0" y1="598.5" x2="487.0" y2="600.5" stroke="#666" stroke-width="0.7" />
<line x1="493.8" y1="598.5" x2="493.8" y2="600.5" stroke="#666" stroke-width="0.7" />
<line x1="500.6" y1="598.5" x2="500.6" y2="601.5" stroke="#666" stroke-width="0.7" />
<line x1="507.40000000000003" y1="598.5" x2="507.40000000000003" y2="600.5" stroke="#666" stroke-width="0.7" />
<line x1="514.2" y1="598.5" x2="514.2" y2="600.5" stroke="#666" stroke-width="0.7" />
<line x1="521.0" y1="598.5" x2="521.0" y2="600.5" stroke="#666" stroke-width="0.7" />
<line x1="527.8000000000001" y1="598.5" x2="527.8000000000001" y2="600.5" stroke="#666" stroke-width="0.7" />
<line x1="534.6" y1="598.5" x2="534.6" y2="602.5" stroke="#666" stroke-width="0.7" />
<line x1="541.4" y1="598.5" x2="541.4" y2="600.5" stroke="#666" stroke-width="0.7" />
<line x1="548.2" y1="598.5" x2="548.2" y2="600.5" stroke="#666" stroke-width="0.7" />
<line x1="555.0" y1="598.5" x2="555.0" y2="600.5" stroke="#666" stroke-width="0.7" />
<line x1="561.8000000000001" y1="598.5" x2="561.8000000000001" y2="600.5" stroke="#666" stroke-width="0.7" />
<line x1="568.6" y1="598.5" x2="568.6" y2="601.5" stroke="#666" stroke-width="0.7" />
<line x1="575.4" y1="598.5" x2="575.4" y2="600.5" stroke="#666" stroke-width="0.7" />
<line x1="582.2" y1="598.5" x2="582.2" y2="600.5" stroke="#666" stroke-width="0.7" />
<line x1="589.0" y1="598.5" x2="589.0" y2="600.5" stroke="#666" stroke-width="0.7" />
<line x1="595.8000000000001" y1="598.5" x2="595.8000000000001" y2="600.5" stroke="#666" stroke-width="0.7" />
<line x1="602.6" y1="598.5" x2="602.6" y2="602.5" stroke="#666" stroke-width="0.7" />
<line x1="609.4" y1="598.5" x2="609.4" y2="600.5" stroke="#666" stroke-width="0.7" />
<line x1="616.2" y1="598.5" x2="616.2" y2="600.5" stroke="#666" stroke-width="0.7" />
<line x1="623.0" y1="598.5" x2="623.0" y2="600.5" stroke="#666" stroke-width="0.7" />
<line x1="629.8000000000001" y1="598.5" x2="629.8000000000001" y2="600.5" stroke="#666" stroke-width="0.7" />
<line x1="636.6" y1="598.5" x2="636.6" y2="601.5" stroke="#666" stroke-width="0.7" />
<line x1="643.4" y1="598.5" x2="643.4" y2="600.5" stroke="#666" stroke-width="0.7" />
<line x1="650.2" y1="598.5" x2="650.2" y2="600.5" stroke="#666" stroke-width="0.7" />
<line x1="657.0" y1="598.5" x2="657.0" y2="600.5" stroke="#666" stroke-width="0.7" />
<line x1="663.8" y1="598.5" x2="663.8" y2="600.5" stroke="#666" stroke-width="0.7" />
<line x1="670.6" y1="598.5" x2="670.6" y2="602.5" stroke="#666" stroke-width="0.7" />
<line x1="677.4" y1="598.5" x2="677.4" y2="600.5" stroke="#666" stroke-width="0.7" />
<line x1="684.2" y1="598.5" x2="684.2" y2="600.5" stroke="#666" stroke-width="0.7" />
<line x1="691.0" y1="598.5" x2="691.0" y2="600.5" stroke="#666" stroke-width="0.7" />
<line x1="697.8" y1="598.5" x2="697.8" y2="600.5" stroke="#666" stroke-width="0.7" />
<line x1="704.6" y1="598.5" x2="704.6" y2="601.5" stroke="#666" stroke-width="0.7" />
<line x1="711.4" y1="598.5" x2="711.4" y2="600.5" stroke="#666" stroke-width="0.7" />
<line x1="718.2" y1="598.5" x2="718.2" y2="600.5" stroke="#666" stroke-width="0.7" />
<line x1="725.0" y1="598.5" x2="725.0" y2="600.5" stroke="#666" stroke-width="0.7" />
<line x1="731.8" y1="598.5" x2="731.8" y2="600.5" stroke="#666" stroke-width="0.7" />
<line x1="738.6" y1="598.5" x2="738.6" y2="602.5" stroke="#666" stroke-width="0.7" />
<line x1="745.4" y1="598.5" x2="745.4" y2="600.5" stroke="#666" stroke-width="0.7" />
<line x1="752.2" y1="598.5" x2="752.2" y2="600.5" stroke="#666" stroke-width="0.7" />
<line x1="759.0" y1="598.5" x2="759.0" y2="600.5" stroke="#666" stroke-width="0.7" />
<text x="398.5" y="609" font-size="6.6" fill="#333" text-anchor="middle" >-200</text>
<text x="466.5" y="609" font-size="6.6" fill="#333" text-anchor="middle" >-100</text>
<text x="534.6" y="609" font-size="6.6" fill="#333" text-anchor="middle" >0</text>
<text x="602.6" y="609" font-size="6.6" fill="#333" text-anchor="middle" >100</text>
<text x="670.6" y="609" font-size="6.6" fill="#333" text-anchor="middle" >200</text>
<text x="738.6" y="609" font-size="6.6" fill="#333" text-anchor="middle" >300</text>
<rect x="504.2" y="221" width="136.1" height="341.5" fill="none" stroke="#141482" stroke-width="1.5" />
<circle cx="504.2" cy="221" r="1.3" fill="#333"/>
<circle cx="640.3" cy="221" r="1.3" fill="#333"/>
<circle cx="504.2" cy="562.5" r="1.3" fill="#333"/>
<circle cx="640.3" cy="562.5" r="1.3" fill="#333"/>
<rect x="517.7" y="231.4" width="34" height="102.2" fill="none" stroke="#141482" stroke-width="1.5" />
<polyline points="572.4,349.0 572.4,339.3 606.4,339.3 606.4,441.3 572.4,441.3 572.4,349.0" fill="none" stroke="#141482" stroke-width="1.5" />
<polyline points="534.5,522.6 636.5,522.6 636.5,556.6 534.5,556.6 534.5,522.6" fill="none" stroke="#141482" stroke-width="1.5" />
<line x1="576.2" y1="209.5" x2="576.2" y2="578.5" stroke="#5070e8" stroke-width="0.9" />
<circle cx="576.2" cy="209.5" r="1.6" fill="#fff" stroke="#444" stroke-width="0.6"/>
<circle cx="576.2" cy="578.5" r="1.6" fill="#fff" stroke="#444" stroke-width="0.6"/>
<path d="M534.6,280.6 L536.6,282.6 L534.6,284.6 L532.6,282.6 Z" fill="#fff" stroke="#4a5ad0" stroke-width="0.7"/>
<path d="M575.5,236.6 L577.5,238.6 L575.5,240.6 L573.5,238.6 Z" fill="#fff" stroke="#4a5ad0" stroke-width="0.7"/>
<path d="M585.8,537.7 L587.8,539.7 L585.8,541.7 L583.8,539.7 Z" fill="#fff" stroke="#4a5ad0" stroke-width="0.7"/>
<path d="M576.2,428 L578.2,430 L576.2,432 L574.2,430 Z" fill="#fff" stroke="#4a5ad0" stroke-width="0.7"/>
<path d="M576.2,362 L578.2,364 L576.2,366 L574.2,364 Z" fill="#fff" stroke="#4a5ad0" stroke-width="0.7"/>
<g><circle cx="533.3" cy="249.4" r="3.1" fill="#ffe080" fill-opacity="0.35" stroke="#c01818" stroke-width="1.1"/><path d="M530.3,249.4 h6 M533.3,246.4 v6" stroke="#c01818" stroke-width="0.75"/></g>
<g><circle cx="571.4" cy="241" r="3.1" fill="#ffe080" fill-opacity="0.35" stroke="#c01818" stroke-width="1.1"/><path d="M568.4,241 h6 M571.4,238 v6" stroke="#c01818" stroke-width="0.75"/></g>
<g><circle cx="611.6" cy="244.9" r="3.1" fill="#ffe080" fill-opacity="0.35" stroke="#c01818" stroke-width="1.1"/><path d="M608.6,244.9 h6 M611.6,241.9 v6" stroke="#c01818" stroke-width="0.75"/></g>
<g><circle cx="527.7" cy="295" r="3.1" fill="#ffe080" fill-opacity="0.35" stroke="#c01818" stroke-width="1.1"/><path d="M524.7,295 h6 M527.7,292 v6" stroke="#c01818" stroke-width="0.75"/></g>
<g><circle cx="568.6" cy="291.4" r="3.1" fill="#ffe080" fill-opacity="0.35" stroke="#c01818" stroke-width="1.1"/><path d="M565.6,291.4 h6 M568.6,288.4 v6" stroke="#c01818" stroke-width="0.75"/></g>
<g><circle cx="611" cy="287.3" r="3.1" fill="#ffe080" fill-opacity="0.35" stroke="#c01818" stroke-width="1.1"/><path d="M608,287.3 h6 M611,284.3 v6" stroke="#c01818" stroke-width="0.75"/></g>
<g><circle cx="567.6" cy="324.4" r="3.1" fill="#ffe080" fill-opacity="0.35" stroke="#c01818" stroke-width="1.1"/><path d="M564.6,324.4 h6 M567.6,321.4 v6" stroke="#c01818" stroke-width="0.75"/></g>
<g><circle cx="603.8" cy="334.5" r="3.1" fill="#ffe080" fill-opacity="0.35" stroke="#c01818" stroke-width="1.1"/><path d="M600.8,334.5 h6 M603.8,331.5 v6" stroke="#c01818" stroke-width="0.75"/></g>
<g><circle cx="573.9" cy="353.4" r="3.1" fill="#ffe080" fill-opacity="0.35" stroke="#c01818" stroke-width="1.1"/><path d="M570.9,353.4 h6 M573.9,350.4 v6" stroke="#c01818" stroke-width="0.75"/></g>
<g><circle cx="538.4" cy="377" r="3.1" fill="#ffe080" fill-opacity="0.35" stroke="#c01818" stroke-width="1.1"/><path d="M535.4,377 h6 M538.4,374 v6" stroke="#c01818" stroke-width="0.75"/></g>
<g><circle cx="589" cy="390.5" r="3.1" fill="#ffe080" fill-opacity="0.35" stroke="#c01818" stroke-width="1.1"/><path d="M586,390.5 h6 M589,387.5 v6" stroke="#c01818" stroke-width="0.75"/></g>
<g><circle cx="612.6" cy="397.4" r="3.1" fill="#ffe080" fill-opacity="0.35" stroke="#c01818" stroke-width="1.1"/><path d="M609.6,397.4 h6 M612.6,394.4 v6" stroke="#c01818" stroke-width="0.75"/></g>
<g><circle cx="538.4" cy="417.7" r="3.1" fill="#ffe080" fill-opacity="0.35" stroke="#c01818" stroke-width="1.1"/><path d="M535.4,417.7 h6 M538.4,414.7 v6" stroke="#c01818" stroke-width="0.75"/></g>
<g><circle cx="574.5" cy="432.8" r="3.1" fill="#ffe080" fill-opacity="0.35" stroke="#c01818" stroke-width="1.1"/><path d="M571.5,432.8 h6 M574.5,429.8 v6" stroke="#c01818" stroke-width="0.75"/></g>
<g><circle cx="610" cy="437.5" r="3.1" fill="#ffe080" fill-opacity="0.35" stroke="#c01818" stroke-width="1.1"/><path d="M607,437.5 h6 M610,434.5 v6" stroke="#c01818" stroke-width="0.75"/></g>
<g><circle cx="563.8" cy="465.5" r="3.1" fill="#ffe080" fill-opacity="0.35" stroke="#c01818" stroke-width="1.1"/><path d="M560.8,465.5 h6 M563.8,462.5 v6" stroke="#c01818" stroke-width="0.75"/></g>
<g><circle cx="532.4" cy="476.5" r="3.1" fill="#ffe080" fill-opacity="0.35" stroke="#c01818" stroke-width="1.1"/><path d="M529.4,476.5 h6 M532.4,473.5 v6" stroke="#c01818" stroke-width="0.75"/></g>
<g><circle cx="611" cy="474.3" r="3.1" fill="#ffe080" fill-opacity="0.35" stroke="#c01818" stroke-width="1.1"/><path d="M608,474.3 h6 M611,471.3 v6" stroke="#c01818" stroke-width="0.75"/></g>
<g><circle cx="582.7" cy="514.3" r="3.1" fill="#ffe080" fill-opacity="0.35" stroke="#c01818" stroke-width="1.1"/><path d="M579.7,514.3 h6 M582.7,511.29999999999995 v6" stroke="#c01818" stroke-width="0.75"/></g>
<g><circle cx="607.2" cy="512" r="3.1" fill="#ffe080" fill-opacity="0.35" stroke="#c01818" stroke-width="1.1"/><path d="M604.2,512 h6 M607.2,509 v6" stroke="#c01818" stroke-width="0.75"/></g>
<g><circle cx="534.6" cy="522" r="3.1" fill="#ffe080" fill-opacity="0.35" stroke="#c01818" stroke-width="1.1"/><path d="M531.6,522 h6 M534.6,519 v6" stroke="#c01818" stroke-width="0.75"/></g>
<rect x="522.6" y="258.20000000000005" width="22.100000000000023" height="8.8" fill="#fff" stroke="none" stroke-width="1" />
<text x="523.6" y="265.40000000000003" font-size="7.8" fill="#111" textLength="20.1" lengthAdjust="spacingAndGlyphs">CPT 15</text>
<g><path d="M505.6,259.7 L507.1,261.2 L510.1,258.2" fill="none" stroke="#30c060" stroke-width="1.1"/><rect x="509.8" y="258.0" width="5.6" height="8.6" fill="#c8c4b0" stroke="#555" stroke-width="0.6"/><rect x="510.3" y="258.59999999999997" width="4.6" height="3.2" fill="#98a090"/><rect x="509.8" y="265.0" width="5.6" height="1.8" fill="#222"/></g>
<rect x="556.6" y="250.1" width="30.799999999999955" height="8.8" fill="#fff" stroke="none" stroke-width="1" />
<text x="557.6" y="257.3" font-size="7.8" fill="#111" textLength="28.8" lengthAdjust="spacingAndGlyphs">CPT 1-05</text>
<g><path d="M541.7,251.8 L543.2,253.3 L546.2,250.3" fill="none" stroke="#30c060" stroke-width="1.1"/><rect x="545.9000000000001" y="250.10000000000002" width="5.6" height="8.6" fill="#c8c4b0" stroke="#555" stroke-width="0.6"/><rect x="546.4000000000001" y="250.70000000000002" width="4.6" height="3.2" fill="#98a090"/><rect x="545.9000000000001" y="257.1" width="5.6" height="1.8" fill="#222"/></g>
<rect x="600.6" y="253.1" width="23.0" height="8.8" fill="#fff" stroke="none" stroke-width="1" />
<text x="601.6" y="260.3" font-size="7.8" fill="#111" textLength="21.0" lengthAdjust="spacingAndGlyphs">CPT 16</text>
<rect x="517.3" y="303.1" width="22.0" height="8.8" fill="#fff" stroke="none" stroke-width="1" />
<text x="518.3" y="310.3" font-size="7.8" fill="#111" textLength="20.0" lengthAdjust="spacingAndGlyphs">CPT 12</text>
<g><path d="M500,305.3 L501.5,306.8 L504.5,303.8" fill="none" stroke="#30c060" stroke-width="1.1"/><rect x="504.2" y="303.6" width="5.6" height="8.6" fill="#c8c4b0" stroke="#555" stroke-width="0.6"/><rect x="504.7" y="304.2" width="4.6" height="3.2" fill="#98a090"/><rect x="504.2" y="310.6" width="5.6" height="1.8" fill="#222"/></g>
<rect x="558.2" y="299.6" width="22.899999999999977" height="8.8" fill="#fff" stroke="none" stroke-width="1" />
<text x="559.2" y="306.8" font-size="7.8" fill="#111" textLength="20.9" lengthAdjust="spacingAndGlyphs">CPT 13</text>
<g><path d="M541.7,301.5 L543.2,303 L546.2,300" fill="none" stroke="#30c060" stroke-width="1.1"/><rect x="545.9000000000001" y="299.8" width="5.6" height="8.6" fill="#c8c4b0" stroke="#555" stroke-width="0.6"/><rect x="546.4000000000001" y="300.4" width="4.6" height="3.2" fill="#98a090"/><rect x="545.9000000000001" y="306.8" width="5.6" height="1.8" fill="#222"/></g>
<rect x="600" y="295.1" width="23.299999999999955" height="8.8" fill="#fff" stroke="none" stroke-width="1" />
<text x="601" y="302.3" font-size="7.8" fill="#111" textLength="21.3" lengthAdjust="spacingAndGlyphs">CPT 14</text>
<g><path d="M584.2,297.5 L585.7,299 L588.7,296" fill="none" stroke="#30c060" stroke-width="1.1"/><rect x="588.4000000000001" y="295.8" width="5.6" height="8.6" fill="#c8c4b0" stroke="#555" stroke-width="0.6"/><rect x="588.9000000000001" y="296.4" width="4.6" height="3.2" fill="#98a090"/><rect x="588.4000000000001" y="302.8" width="5.6" height="1.8" fill="#222"/></g>
<rect x="553.5" y="331.6" width="29.799999999999955" height="8.8" fill="#fff" stroke="none" stroke-width="1" />
<text x="554.5" y="338.8" font-size="7.8" fill="#111" textLength="27.8" lengthAdjust="spacingAndGlyphs">CPT 1-04</text>
<g><path d="M537,333.5 L538.5,335 L541.5,332" fill="none" stroke="#30c060" stroke-width="1.1"/><rect x="541.2" y="331.8" width="5.6" height="8.6" fill="#c8c4b0" stroke="#555" stroke-width="0.6"/><rect x="541.7" y="332.4" width="4.6" height="3.2" fill="#98a090"/><rect x="541.2" y="338.8" width="5.6" height="1.8" fill="#222"/></g>
<rect x="593.4" y="342.6" width="22.300000000000068" height="8.8" fill="#fff" stroke="none" stroke-width="1" />
<text x="594.4" y="349.8" font-size="7.8" fill="#111" textLength="20.3" lengthAdjust="spacingAndGlyphs">CPT 11</text>
<g><path d="M577.3,344.5 L578.8,346 L581.8,343" fill="none" stroke="#30c060" stroke-width="1.1"/><rect x="581.5" y="342.8" width="5.6" height="8.6" fill="#c8c4b0" stroke="#555" stroke-width="0.6"/><rect x="582.0" y="343.4" width="4.6" height="3.2" fill="#98a090"/><rect x="581.5" y="349.8" width="5.6" height="1.8" fill="#222"/></g>
<rect x="562.9" y="361.6" width="22.899999999999977" height="8.8" fill="#fff" stroke="none" stroke-width="1" />
<text x="563.9" y="368.8" font-size="7.8" fill="#111" textLength="20.9" lengthAdjust="spacingAndGlyphs">CPT 10</text>
<g><path d="M546.5,363.5 L548.0,365 L551.0,362" fill="none" stroke="#30c060" stroke-width="1.1"/><rect x="550.7" y="361.8" width="5.6" height="8.6" fill="#c8c4b0" stroke="#555" stroke-width="0.6"/><rect x="551.2" y="362.4" width="4.6" height="3.2" fill="#98a090"/><rect x="550.7" y="368.8" width="5.6" height="1.8" fill="#222"/></g>
<rect x="529.2" y="385.1" width="19.5" height="8.8" fill="#fff" stroke="none" stroke-width="1" />
<text x="530.2" y="392.3" font-size="7.8" fill="#111" textLength="17.5" lengthAdjust="spacingAndGlyphs">CPT 9</text>
<g><path d="M512.5,387.0 L514.0,388.5 L517.0,385.5" fill="none" stroke="#30c060" stroke-width="1.1"/><rect x="516.7" y="385.3" width="5.6" height="8.6" fill="#c8c4b0" stroke="#555" stroke-width="0.6"/><rect x="517.2" y="385.9" width="4.6" height="3.2" fill="#98a090"/><rect x="516.7" y="392.3" width="5.6" height="1.8" fill="#222"/></g>
<rect x="574.8" y="398.20000000000005" width="29.0" height="8.8" fill="#fff" stroke="none" stroke-width="1" />
<text x="575.8" y="405.40000000000003" font-size="7.8" fill="#111" textLength="27.0" lengthAdjust="spacingAndGlyphs">CPT 1-03</text>
<g><path d="M559,401.1 L560.5,402.6 L563.5,399.6" fill="none" stroke="#30c060" stroke-width="1.1"/><rect x="563.2" y="399.40000000000003" width="5.6" height="8.6" fill="#c8c4b0" stroke="#555" stroke-width="0.6"/><rect x="563.7" y="400.0" width="4.6" height="3.2" fill="#98a090"/><rect x="563.2" y="406.40000000000003" width="5.6" height="1.8" fill="#222"/></g>
<rect x="602.2" y="405.6" width="19.799999999999955" height="8.8" fill="#fff" stroke="none" stroke-width="1" />
<text x="603.2" y="412.8" font-size="7.8" fill="#111" textLength="17.8" lengthAdjust="spacingAndGlyphs">CPT 8</text>
<g><path d="M587.3,408.0 L588.8,409.5 L591.8,406.5" fill="none" stroke="#30c060" stroke-width="1.1"/><rect x="591.5" y="406.3" width="5.6" height="8.6" fill="#c8c4b0" stroke="#555" stroke-width="0.6"/><rect x="592.0" y="406.9" width="4.6" height="3.2" fill="#98a090"/><rect x="591.5" y="413.3" width="5.6" height="1.8" fill="#222"/></g>
<rect x="529.2" y="425.6" width="19.5" height="8.8" fill="#fff" stroke="none" stroke-width="1" />
<text x="530.2" y="432.8" font-size="7.8" fill="#111" textLength="17.5" lengthAdjust="spacingAndGlyphs">CPT 7</text>
<g><path d="M512.8,427.8 L514.3,429.3 L517.3,426.3" fill="none" stroke="#30c060" stroke-width="1.1"/><rect x="517.0" y="426.1" width="5.6" height="8.6" fill="#c8c4b0" stroke="#555" stroke-width="0.6"/><rect x="517.5" y="426.7" width="4.6" height="3.2" fill="#98a090"/><rect x="517.0" y="433.1" width="5.6" height="1.8" fill="#222"/></g>
<rect x="565.4" y="441.6" width="19.5" height="8.8" fill="#fff" stroke="none" stroke-width="1" />
<text x="566.4" y="448.8" font-size="7.8" fill="#111" textLength="17.5" lengthAdjust="spacingAndGlyphs">CPT 5</text>
<g><path d="M549.6,443.5 L551.1,445 L554.1,442" fill="none" stroke="#30c060" stroke-width="1.1"/><rect x="553.8000000000001" y="441.8" width="5.6" height="8.6" fill="#c8c4b0" stroke="#555" stroke-width="0.6"/><rect x="554.3000000000001" y="442.4" width="4.6" height="3.2" fill="#98a090"/><rect x="553.8000000000001" y="448.8" width="5.6" height="1.8" fill="#222"/></g>
<rect x="600.6" y="446.1" width="19.799999999999955" height="8.8" fill="#fff" stroke="none" stroke-width="1" />
<text x="601.6" y="453.3" font-size="7.8" fill="#111" textLength="17.8" lengthAdjust="spacingAndGlyphs">CPT 6</text>
<g><path d="M585.1,448.3 L586.6,449.8 L589.6,446.8" fill="none" stroke="#30c060" stroke-width="1.1"/><rect x="589.3000000000001" y="446.6" width="5.6" height="8.6" fill="#c8c4b0" stroke="#555" stroke-width="0.6"/><rect x="589.8000000000001" y="447.2" width="4.6" height="3.2" fill="#98a090"/><rect x="589.3000000000001" y="453.6" width="5.6" height="1.8" fill="#222"/></g>
<rect x="549.7" y="473.6" width="28.899999999999977" height="8.8" fill="#fff" stroke="none" stroke-width="1" />
<text x="550.7" y="480.8" font-size="7.8" fill="#111" textLength="26.9" lengthAdjust="spacingAndGlyphs">CPT 1-02</text>
<g><path d="M533.9,475.9 L535.4,477.4 L538.4,474.4" fill="none" stroke="#30c060" stroke-width="1.1"/><rect x="538.1" y="474.2" width="5.6" height="8.6" fill="#c8c4b0" stroke="#555" stroke-width="0.6"/><rect x="538.6" y="474.79999999999995" width="4.6" height="3.2" fill="#98a090"/><rect x="538.1" y="481.2" width="5.6" height="1.8" fill="#222"/></g>
<rect x="523" y="484.1" width="19.5" height="8.8" fill="#fff" stroke="none" stroke-width="1" />
<text x="524" y="491.3" font-size="7.8" fill="#111" textLength="17.5" lengthAdjust="spacingAndGlyphs">CPT 3</text>
<g><path d="M506.5,486.0 L508.0,487.5 L511.0,484.5" fill="none" stroke="#30c060" stroke-width="1.1"/><rect x="510.7" y="484.3" width="5.6" height="8.6" fill="#c8c4b0" stroke="#555" stroke-width="0.6"/><rect x="511.2" y="484.9" width="4.6" height="3.2" fill="#98a090"/><rect x="510.7" y="491.3" width="5.6" height="1.8" fill="#222"/></g>
<rect x="601.6" y="482.6" width="19.399999999999977" height="8.8" fill="#fff" stroke="none" stroke-width="1" />
<text x="602.6" y="489.8" font-size="7.8" fill="#111" textLength="17.4" lengthAdjust="spacingAndGlyphs">CPT 4</text>
<g><path d="M585.8,484.5 L587.3,486 L590.3,483" fill="none" stroke="#30c060" stroke-width="1.1"/><rect x="590.0" y="482.8" width="5.6" height="8.6" fill="#c8c4b0" stroke="#555" stroke-width="0.6"/><rect x="590.5" y="483.4" width="4.6" height="3.2" fill="#98a090"/><rect x="590.0" y="489.8" width="5.6" height="1.8" fill="#222"/></g>
<g><path d="M509.4,531.5 L510.9,533 L513.9,530" fill="none" stroke="#30c060" stroke-width="1.1"/><rect x="513.6" y="529.8" width="5.6" height="8.6" fill="#c8c4b0" stroke="#555" stroke-width="0.6"/><rect x="514.1" y="530.4" width="4.6" height="3.2" fill="#98a090"/><rect x="513.6" y="536.8" width="5.6" height="1.8" fill="#222"/></g>
<text x="526.8" y="537.8" font-size="7.8" fill="#111" textLength="16.7" lengthAdjust="spacingAndGlyphs">CPT 1</text>
<g><path d="M552.7,524.7 L554.2,526.2 L557.2,523.2" fill="none" stroke="#30c060" stroke-width="1.1"/><rect x="556.9000000000001" y="523.0" width="5.6" height="8.6" fill="#c8c4b0" stroke="#555" stroke-width="0.6"/><rect x="557.4000000000001" y="523.6" width="4.6" height="3.2" fill="#98a090"/><rect x="556.9000000000001" y="530.0" width="5.6" height="1.8" fill="#222"/></g>
<text x="569.6" y="530.3" font-size="7.8" fill="#111" textLength="23.4" lengthAdjust="spacingAndGlyphs">CPT 1-01</text>
<g><path d="M582.6,522.8 L584.1,524.3 L587.1,521.3" fill="none" stroke="#30c060" stroke-width="1.1"/><rect x="586.8000000000001" y="521.0999999999999" width="5.6" height="8.6" fill="#c8c4b0" stroke="#555" stroke-width="0.6"/><rect x="587.3000000000001" y="521.6999999999999" width="4.6" height="3.2" fill="#98a090"/><rect x="586.8000000000001" y="528.0999999999999" width="5.6" height="1.8" fill="#222"/></g>
<text x="599.5" y="528.3" font-size="7.8" fill="#111" textLength="16.0" lengthAdjust="spacingAndGlyphs">CPT 2</text>
<rect x="573.5" y="550" width="63" height="10.8" fill="#fafafa" stroke="#555" stroke-width="0.7" />
<text x="575" y="558" font-size="6.5" fill="#333" textLength="60" lengthAdjust="spacingAndGlyphs">Rectangular Load 1</text>
<defs><clipPath id="v3"><rect x="767" y="189" width="383.5" height="422"/></clipPath>
<linearGradient id="g3" x1="1048.7" y1="324" x2="984.5" y2="477" gradientUnits="userSpaceOnUse">
<stop offset="0" stop-color="#d0e800"/>
<stop offset="0.08" stop-color="#e8e000"/>
<stop offset="0.16" stop-color="#f0b800"/>
<stop offset="0.24" stop-color="#f09000"/>
<stop offset="0.33" stop-color="#f06800"/>
<stop offset="0.42" stop-color="#e84c00"/>
<stop offset="0.48" stop-color="#e84000"/>
<stop offset="0.525" stop-color="#f09000"/>
<stop offset="0.54" stop-color="#c0e040"/>
<stop offset="0.555" stop-color="#30e030"/>
<stop offset="0.75" stop-color="#20e020"/>
<stop offset="1" stop-color="#30e060"/>
</linearGradient>
<pattern id="tan" width="3" height="3" patternUnits="userSpaceOnUse"><rect width="3" height="3" fill="#ecdcc8"/><rect x="0" y="2" width="1" height="1" fill="#e8dce2"/><rect x="1" y="1" width="1" height="1" fill="#e8dce2"/><rect x="2" y="0" width="1" height="1" fill="#e8dce2"/></pattern>
</defs>
<line x1="766.5" y1="189" x2="766.5" y2="611" stroke="#888" stroke-width="1" />
<g clip-path="url(#v3)">
<polygon points="980.5,212.3 1292.0,331.2 918.5,674.3 576.5,447.2" fill="url(#tan)" stroke="none" stroke-width="1" />
<polyline points="576.5,449.2 980.5,214.3 1292.0,333.2" fill="none" stroke="#e8d070" stroke-width="0.8" />
<polyline points="576.5,451.0 980.5,216.1 1292.0,335.0" fill="none" stroke="#b8b4a0" stroke-width="2" />
<polyline points="576.5,453.2 980.5,218.3 1292.0,337.2" fill="none" stroke="#a8a8a4" stroke-width="2" />
<polyline points="576.5,455.5 980.5,220.6 1292.0,339.5" fill="none" stroke="#c8c0b0" stroke-width="1.8" />
<polyline points="576.5,457.7 980.5,222.8 1292.0,341.7" fill="none" stroke="#e0d8d0" stroke-width="1.6" />
<polyline points="576.5,459.4 980.5,224.5 1292.0,343.4" fill="none" stroke="#c4b08c" stroke-width="0.9" />
<polyline points="576.5,449.6 918.5,676.7" fill="none" stroke="#d4c49c" stroke-width="3" />
<polyline points="576.5,452.8 918.5,679.9" fill="none" stroke="#a4acb8" stroke-width="2.6" />
<polyline points="576.5,455.2 918.5,682.3" fill="none" stroke="#e4e8ee" stroke-width="1.4" />
<polyline points="576.5,457.0 918.5,684.1" fill="none" stroke="#f8f8f8" stroke-width="1.2" />
<polyline points="576.5,458.8 918.5,685.9" fill="none" stroke="#c4b48c" stroke-width="0.9" />
<polyline points="918.5,676.9 1292.0,333.8" fill="none" stroke="#d4c49c" stroke-width="2.4" />
<polyline points="918.5,679.3 1292.0,336.2" fill="none" stroke="#a4acb8" stroke-width="2.2" />
<polyline points="918.5,681.3 1292.0,338.2" fill="none" stroke="#e8ecf0" stroke-width="1.2" />
<polyline points="918.5,682.9 1292.0,339.8" fill="none" stroke="#c4b48c" stroke-width="0.9" />
<clipPath id="plane"><polygon points="980.5,212.3 1292.0,331.2 918.5,674.3 576.5,447.2"/></clipPath>
<g clip-path="url(#plane)">
<line x1="893.0" y1="264.2" x2="1160" y2="364.3" stroke="#a07858" stroke-width="0.8" />
<line x1="889.8" y1="266.0" x2="1160" y2="368.1" stroke="#a88468" stroke-width="1.0" />
<line x1="886.6" y1="267.9" x2="1160" y2="372.0" stroke="#a07858" stroke-width="0.8" />
<line x1="877.1" y1="273.4" x2="1160" y2="383.7" stroke="#a07858" stroke-width="0.9" />
<line x1="874.9" y1="274.7" x2="1160" y2="386.3" stroke="#b08c70" stroke-width="0.8" />
<line x1="864.8" y1="280.5" x2="1160" y2="398.8" stroke="#a88468" stroke-width="0.9" />
<line x1="862.8" y1="281.7" x2="1160" y2="401.3" stroke="#a88468" stroke-width="1.0" />
<line x1="855.8" y1="285.8" x2="1160" y2="410.2" stroke="#a88468" stroke-width="0.9" />
<line x1="846.8" y1="291.0" x2="1160" y2="421.7" stroke="#b08c70" stroke-width="0.8" />
<line x1="843.9" y1="292.7" x2="1160" y2="425.4" stroke="#b08c70" stroke-width="0.9" />
<line x1="841.1" y1="294.3" x2="1160" y2="429.0" stroke="#a88468" stroke-width="0.8" />
<line x1="834.7" y1="298.1" x2="1160" y2="437.4" stroke="#9a7254" stroke-width="1.0" />
<line x1="827.6" y1="302.2" x2="1160" y2="446.8" stroke="#9a7254" stroke-width="0.8" />
<line x1="824.8" y1="303.8" x2="1160" y2="450.4" stroke="#a88468" stroke-width="0.8" />
<line x1="815.9" y1="309.0" x2="1160" y2="462.4" stroke="#b08c70" stroke-width="1.0" />
<line x1="813.2" y1="310.6" x2="1160" y2="465.9" stroke="#a07858" stroke-width="0.8" />
<line x1="803.6" y1="316.2" x2="1160" y2="479.0" stroke="#a88468" stroke-width="0.8" />
<line x1="795.4" y1="320.9" x2="1160" y2="490.2" stroke="#b08c70" stroke-width="0.9" />
<line x1="786.6" y1="326.0" x2="1160" y2="502.4" stroke="#a07858" stroke-width="1.0" />
<line x1="784.0" y1="327.6" x2="1160" y2="506.1" stroke="#9a7254" stroke-width="0.9" />
<line x1="775.0" y1="332.8" x2="1160" y2="518.8" stroke="#b08c70" stroke-width="0.8" />
<line x1="766" y1="340.2" x2="1160" y2="534.5" stroke="#a07858" stroke-width="0.8" />
<line x1="766" y1="342.4" x2="1160" y2="537.4" stroke="#a88468" stroke-width="1.0" />
<line x1="766" y1="344.5" x2="1160" y2="540.1" stroke="#a88468" stroke-width="0.8" />
<line x1="766" y1="353.5" x2="1160" y2="552.1" stroke="#9a7254" stroke-width="0.9" />
<line x1="766" y1="366.4" x2="1160" y2="569.3" stroke="#b08c70" stroke-width="0.8" />
<line x1="766" y1="369.1" x2="1160" y2="572.9" stroke="#b08c70" stroke-width="1.0" />
<line x1="766" y1="372.1" x2="1160" y2="576.9" stroke="#a88468" stroke-width="0.9" />
<line x1="766" y1="382.9" x2="1160" y2="591.2" stroke="#a88468" stroke-width="1.0" />
<line x1="766" y1="385.1" x2="1160" y2="594.1" stroke="#a88468" stroke-width="0.9" />
</g>
<polygon points="1004.1,305.6 1093.3,342.4 936.2,462.7 842.7,411.7" fill="url(#g3)" stroke="none" stroke-width="1" opacity="0.9"/>
<ellipse cx="980" cy="372" rx="30" ry="11" transform="rotate(32 980 372)" fill="#e02800" opacity="0.25"/>
<line x1="1004.1" y1="305.6" x2="1093.3" y2="342.4" stroke="#a06030" stroke-width="0.4" opacity="0.35"/>
<line x1="983.9" y1="318.9" x2="1073.7" y2="357.4" stroke="#a06030" stroke-width="0.4" opacity="0.35"/>
<line x1="963.8" y1="332.1" x2="1054.0" y2="372.5" stroke="#a06030" stroke-width="0.4" opacity="0.35"/>
<line x1="943.6" y1="345.4" x2="1034.4" y2="387.5" stroke="#a06030" stroke-width="0.4" opacity="0.35"/>
<line x1="923.4" y1="358.6" x2="1014.8" y2="402.5" stroke="#a06030" stroke-width="0.4" opacity="0.35"/>
<line x1="903.2" y1="371.9" x2="995.1" y2="417.6" stroke="#a06030" stroke-width="0.4" opacity="0.35"/>
<line x1="883.1" y1="385.2" x2="975.5" y2="432.6" stroke="#a06030" stroke-width="0.4" opacity="0.35"/>
<line x1="862.9" y1="398.4" x2="955.8" y2="447.7" stroke="#a06030" stroke-width="0.4" opacity="0.35"/>
<line x1="1000" y1="397" x2="1160" y2="481" stroke="#e84020" stroke-width="0.9" />
<line x1="1000" y1="398" x2="1160" y2="482" stroke="#f0e000" stroke-width="0.9" />
<line x1="1000" y1="399" x2="1160" y2="483" stroke="#40d040" stroke-width="0.9" />
<line x1="1000" y1="400" x2="1160" y2="484" stroke="#90a8d0" stroke-width="0.9" />
<polygon points="1004.0,272.6 1095.7,311.0 901.4,453.7 804.6,402.0" fill="none" stroke="#1a1a7a" stroke-width="1" />
<polygon points="1007.2,279.7 1029.2,289.2 975.7,324.8 954.4,315.0" fill="none" stroke="#6a6ab0" stroke-width="1.7" />
<polygon points="1007.2,279.7 1029.2,289.2 975.7,324.8 954.4,315.0" fill="none" stroke="#1a1a7a" stroke-width="0.7" />
<polygon points="987.1,333.0 1011.2,343.8 953.2,385.7 929.1,373.5" fill="none" stroke="#6a6ab0" stroke-width="1.7" />
<polygon points="987.1,333.0 1011.2,343.8 953.2,385.7 929.1,373.5" fill="none" stroke="#1a1a7a" stroke-width="0.7" />
<polygon points="853.0,394.3 925.6,432.8 905.8,450.4 830.0,408.6" fill="none" stroke="#6a6ab0" stroke-width="1.7" />
<polygon points="853.0,394.3 925.6,432.8 905.8,450.4 830.0,408.6" fill="none" stroke="#1a1a7a" stroke-width="0.7" />
<rect x="851.8" y="429.6" width="4.4" height="12" fill="#d8d0c8" stroke="#a09890" stroke-width="0.5" />
<ellipse cx="854" cy="441.6" rx="2.2" ry="1" fill="#b8b0a8"/>
<rect x="890.6999999999999" y="444.3" width="4.4" height="12" fill="#d8d0c8" stroke="#a09890" stroke-width="0.5" />
<ellipse cx="892.9" cy="456.3" rx="2.2" ry="1" fill="#b8b0a8"/>
<rect x="909.3" y="452" width="4.4" height="13" fill="#d8d0c8" stroke="#a09890" stroke-width="0.5" />
<ellipse cx="911.5" cy="465" rx="2.2" ry="1" fill="#b8b0a8"/>
<rect x="883" y="445" width="3" height="14" fill="#e0e0e0" stroke="none" stroke-width="1" opacity="0.7"/>
<ellipse cx="1007" cy="321.7" rx="2.3" ry="1.8" fill="#e8c0b0" stroke="#a02818" stroke-width="1"/>
<ellipse cx="1037.2" cy="330.2" rx="2.3" ry="1.8" fill="#e8c0b0" stroke="#a02818" stroke-width="1"/>
<ellipse cx="1062.2" cy="343.8" rx="2.3" ry="1.8" fill="#e8c0b0" stroke="#a02818" stroke-width="1"/>
<ellipse cx="1009.8" cy="348" rx="2.3" ry="1.8" fill="#e8c0b0" stroke="#a02818" stroke-width="1"/>
<ellipse cx="1040.9" cy="358.5" rx="2.3" ry="1.8" fill="#e8c0b0" stroke="#a02818" stroke-width="1"/>
<ellipse cx="992.8" cy="359.4" rx="2.3" ry="1.8" fill="#e8c0b0" stroke="#a02818" stroke-width="1"/>
<ellipse cx="980" cy="336" rx="2.3" ry="1.8" fill="#e8c0b0" stroke="#a02818" stroke-width="1"/>
<ellipse cx="943.3" cy="371.3" rx="2.3" ry="1.8" fill="#e8c0b0" stroke="#a02818" stroke-width="1"/>
<ellipse cx="980.6" cy="373" rx="2.3" ry="1.8" fill="#e8c0b0" stroke="#a02818" stroke-width="1"/>
<ellipse cx="1011.2" cy="375" rx="2.3" ry="1.8" fill="#e8c0b0" stroke="#a02818" stroke-width="1"/>
<ellipse cx="970.1" cy="391.9" rx="2.3" ry="1.8" fill="#e8c0b0" stroke="#a02818" stroke-width="1"/>
<ellipse cx="920.6" cy="386.8" rx="2.3" ry="1.8" fill="#e8c0b0" stroke="#a02818" stroke-width="1"/>
<ellipse cx="982.9" cy="403.3" rx="2.3" ry="1.8" fill="#e8c0b0" stroke="#a02818" stroke-width="1"/>
<ellipse cx="936.2" cy="405.5" rx="2.3" ry="1.8" fill="#e8c0b0" stroke="#a02818" stroke-width="1"/>
<ellipse cx="882.4" cy="408.9" rx="2.3" ry="1.8" fill="#e8c0b0" stroke="#a02818" stroke-width="1"/>
<ellipse cx="909.8" cy="415.1" rx="2.3" ry="1.8" fill="#e8c0b0" stroke="#a02818" stroke-width="1"/>
<ellipse cx="958" cy="419.7" rx="2.3" ry="1.8" fill="#e8c0b0" stroke="#a02818" stroke-width="1"/>
<ellipse cx="937" cy="436.7" rx="2.3" ry="1.8" fill="#e8c0b0" stroke="#a02818" stroke-width="1"/>
<ellipse cx="854" cy="429.6" rx="2.3" ry="1.8" fill="#e8c0b0" stroke="#a02818" stroke-width="1"/>
<ellipse cx="892.9" cy="444.3" rx="2.3" ry="1.8" fill="#e8c0b0" stroke="#a02818" stroke-width="1"/>
<ellipse cx="911.5" cy="452" rx="2.3" ry="1.8" fill="#e8c0b0" stroke="#a02818" stroke-width="1"/>
<circle cx="1055" cy="319.7" r="1.5" fill="#f0a020" stroke="#c06010" stroke-width="0.5"/>
<circle cx="846" cy="471.3" r="1.6" fill="#f0c020" stroke="#c07010" stroke-width="0.5"/>
<polyline points="576.5,447.2 980.5,212.3 1292.0,331.2" fill="none" stroke="#0a14e0" stroke-width="2" />
<polyline points="576.5,447.2 918.5,674.3 1292.0,331.2" fill="none" stroke="#0a14e0" stroke-width="2" />
</g>
<g>
<polygon points="1097.9,212.1 1109.6,204.4 1127.5,211.6 1113.7,218.2" fill="#b8d8a8" stroke="#8a9aa0" stroke-width="0.5" />
<polygon points="1097.9,212.1 1113.7,218.2 1112.7,237.6 1095.3,232.0" fill="#c0c0e8" stroke="#8a9aa0" stroke-width="0.5" />
<polygon points="1113.7,218.2 1127.5,211.6 1125.5,235.0 1112.7,237.6" fill="#e8c8c0" stroke="#8a9aa0" stroke-width="0.5" />
<line x1="1112.7" y1="206" x2="1112.7" y2="201.5" stroke="#50b050" stroke-width="1" />
<line x1="1099" y1="229" x2="1111" y2="222" stroke="#4060d0" stroke-width="0.9" />
<text x="1104" y="228" font-size="3" fill="#555" text-anchor="start" transform="rotate(-15 1104 228)">Front</text>
<text x="1108" y="213" font-size="3" fill="#555" text-anchor="start" >Top</text>
<line x1="1120" y1="224" x2="1130" y2="227" stroke="#f07040" stroke-width="1" />
<line x1="1094" y1="215" x2="1090" y2="214" stroke="#f07040" stroke-width="1" />
<text x="1115" y="198.8" font-size="6" fill="#70c070" text-anchor="middle" >Z</text>
<text x="1136" y="229" font-size="6" fill="#f07050" text-anchor="middle" >X</text>
<text x="1129" y="209" font-size="5" fill="#7070e0" text-anchor="middle" >Y</text>
</g>
<line x1="1151.5" y1="189" x2="1151.5" y2="611" stroke="#d8d8d8" stroke-width="1" />
<rect x="372.5" y="188.5" width="781" height="436" fill="none" stroke="#b0b0b0" stroke-width="1" />
<rect x="372" y="611.5" width="781" height="13" fill="#ececec" stroke="none" stroke-width="1" />
<line x1="372" y1="611.5" x2="1152" y2="611.5" stroke="#7a7a7a" stroke-width="1" />
<rect x="372.5" y="612.3" width="11.3" height="10.7" fill="#ececec" stroke="none" stroke-width="1" />
<polyline points="373.0,622.5 373.0,612.8 383.5,612.8" fill="none" stroke="#ffffff" stroke-width="1" />
<polyline points="373.0,622.6 383.5,622.6 383.5,612.8" fill="none" stroke="#a8a8a8" stroke-width="0.9" />
<rect x="384" y="612.3" width="11.3" height="10.7" fill="#ececec" stroke="none" stroke-width="1" />
<polyline points="384.5,622.5 384.5,612.8 395.0,612.8" fill="none" stroke="#ffffff" stroke-width="1" />
<polyline points="384.5,622.6 395.0,622.6 395.0,612.8" fill="none" stroke="#a8a8a8" stroke-width="0.9" />
<rect x="397.5" y="612.3" width="11.3" height="10.7" fill="#ececec" stroke="none" stroke-width="1" />
<polyline points="398.0,622.5 398.0,612.8 408.5,612.8" fill="none" stroke="#ffffff" stroke-width="1" />
<polyline points="398.0,622.6 408.5,622.6 408.5,612.8" fill="none" stroke="#a8a8a8" stroke-width="0.9" />
<rect x="411" y="612.3" width="11.3" height="10.7" fill="#ececec" stroke="none" stroke-width="1" />
<polyline points="411.5,622.5 411.5,612.8 422.0,612.8" fill="none" stroke="#ffffff" stroke-width="1" />
<polyline points="411.5,622.6 422.0,622.6 422.0,612.8" fill="none" stroke="#a8a8a8" stroke-width="0.9" />
<rect x="424.3" y="612.3" width="11.3" height="10.7" fill="#ececec" stroke="none" stroke-width="1" />
<polyline points="424.8,622.5 424.8,612.8 435.3,612.8" fill="none" stroke="#ffffff" stroke-width="1" />
<polyline points="424.8,622.6 435.3,622.6 435.3,612.8" fill="none" stroke="#a8a8a8" stroke-width="0.9" />
<path d="M375.8,615 v5" stroke="#777" stroke-width="1"/><path d="M380,615 L376.6,617.5 L380,620 Z" fill="#111"/>
<path d="M391.8,615 L388.4,617.5 L391.8,620 Z" fill="#111"/>
<path d="M401.5,620 L405.5,615.3 L407,616.6 L403,621 Z" fill="#222"/>
<path d="M414.8,615 L418.2,617.5 L414.8,620 Z" fill="#bbb"/>
<path d="M428.3,615 L431.7,617.5 L428.3,620 Z" fill="#111"/><path d="M432.5,615 v5" stroke="#666" stroke-width="1"/>
<rect x="874" y="612" width="107" height="12" fill="#fbfbfb" stroke="none" stroke-width="1" />
<text x="449.2" y="620.1" font-size="7.6" fill="#222" textLength="76.2" lengthAdjust="spacingAndGlyphs">Stage 1 - load  = 0 d</text>
<text x="541.3" y="620.1" font-size="7.6" fill="#222" textLength="56.2" lengthAdjust="spacingAndGlyphs">Stage 2 = 0.1 d</text>
<text x="612" y="620.1" font-size="7.6" fill="#222" textLength="50.0" lengthAdjust="spacingAndGlyphs">Stage 3 = 1 d</text>
<text x="676" y="620.1" font-size="7.6" fill="#222" textLength="55.0" lengthAdjust="spacingAndGlyphs">Stage 4 = 10 d</text>
<text x="745" y="620.1" font-size="7.6" fill="#222" textLength="55.0" lengthAdjust="spacingAndGlyphs">Stage 5 = 30 d</text>
<text x="814.6" y="620.1" font-size="7.6" fill="#222" textLength="54.1" lengthAdjust="spacingAndGlyphs">Stage 6 = 50 d</text>
<text x="880.8" y="620.1" font-size="7.6" font-weight="bold" fill="#111" textLength="93.6" lengthAdjust="spacingAndGlyphs">Stage 5 - Final = 100 d</text>
<line x1="438.6" y1="612" x2="443.4" y2="623.5" stroke="#333" stroke-width="0.9" />
<line x1="532" y1="612" x2="537.4" y2="623" stroke="#222" stroke-width="0.9" />
<line x1="534.2" y1="616.5" x2="530.8" y2="623" stroke="#222" stroke-width="0.9" />
<line x1="603.2" y1="612" x2="608.6" y2="623" stroke="#222" stroke-width="0.9" />
<line x1="605.4000000000001" y1="616.5" x2="602.0" y2="623" stroke="#222" stroke-width="0.9" />
<line x1="666.6" y1="612" x2="672.0" y2="623" stroke="#222" stroke-width="0.9" />
<line x1="668.8000000000001" y1="616.5" x2="665.4" y2="623" stroke="#222" stroke-width="0.9" />
<line x1="735.3" y1="612" x2="740.6999999999999" y2="623" stroke="#222" stroke-width="0.9" />
<line x1="737.5" y1="616.5" x2="734.0999999999999" y2="623" stroke="#222" stroke-width="0.9" />
<line x1="804.5" y1="612" x2="809.9" y2="623" stroke="#222" stroke-width="0.9" />
<line x1="806.7" y1="616.5" x2="803.3" y2="623" stroke="#222" stroke-width="0.9" />
<line x1="873" y1="612" x2="878.4" y2="623" stroke="#222" stroke-width="0.9" />
<line x1="875.2" y1="616.5" x2="871.8" y2="623" stroke="#222" stroke-width="0.9" />
<line x1="977" y1="623.5" x2="981.5" y2="612" stroke="#333" stroke-width="0.9" />
</svg>
</body></html>
